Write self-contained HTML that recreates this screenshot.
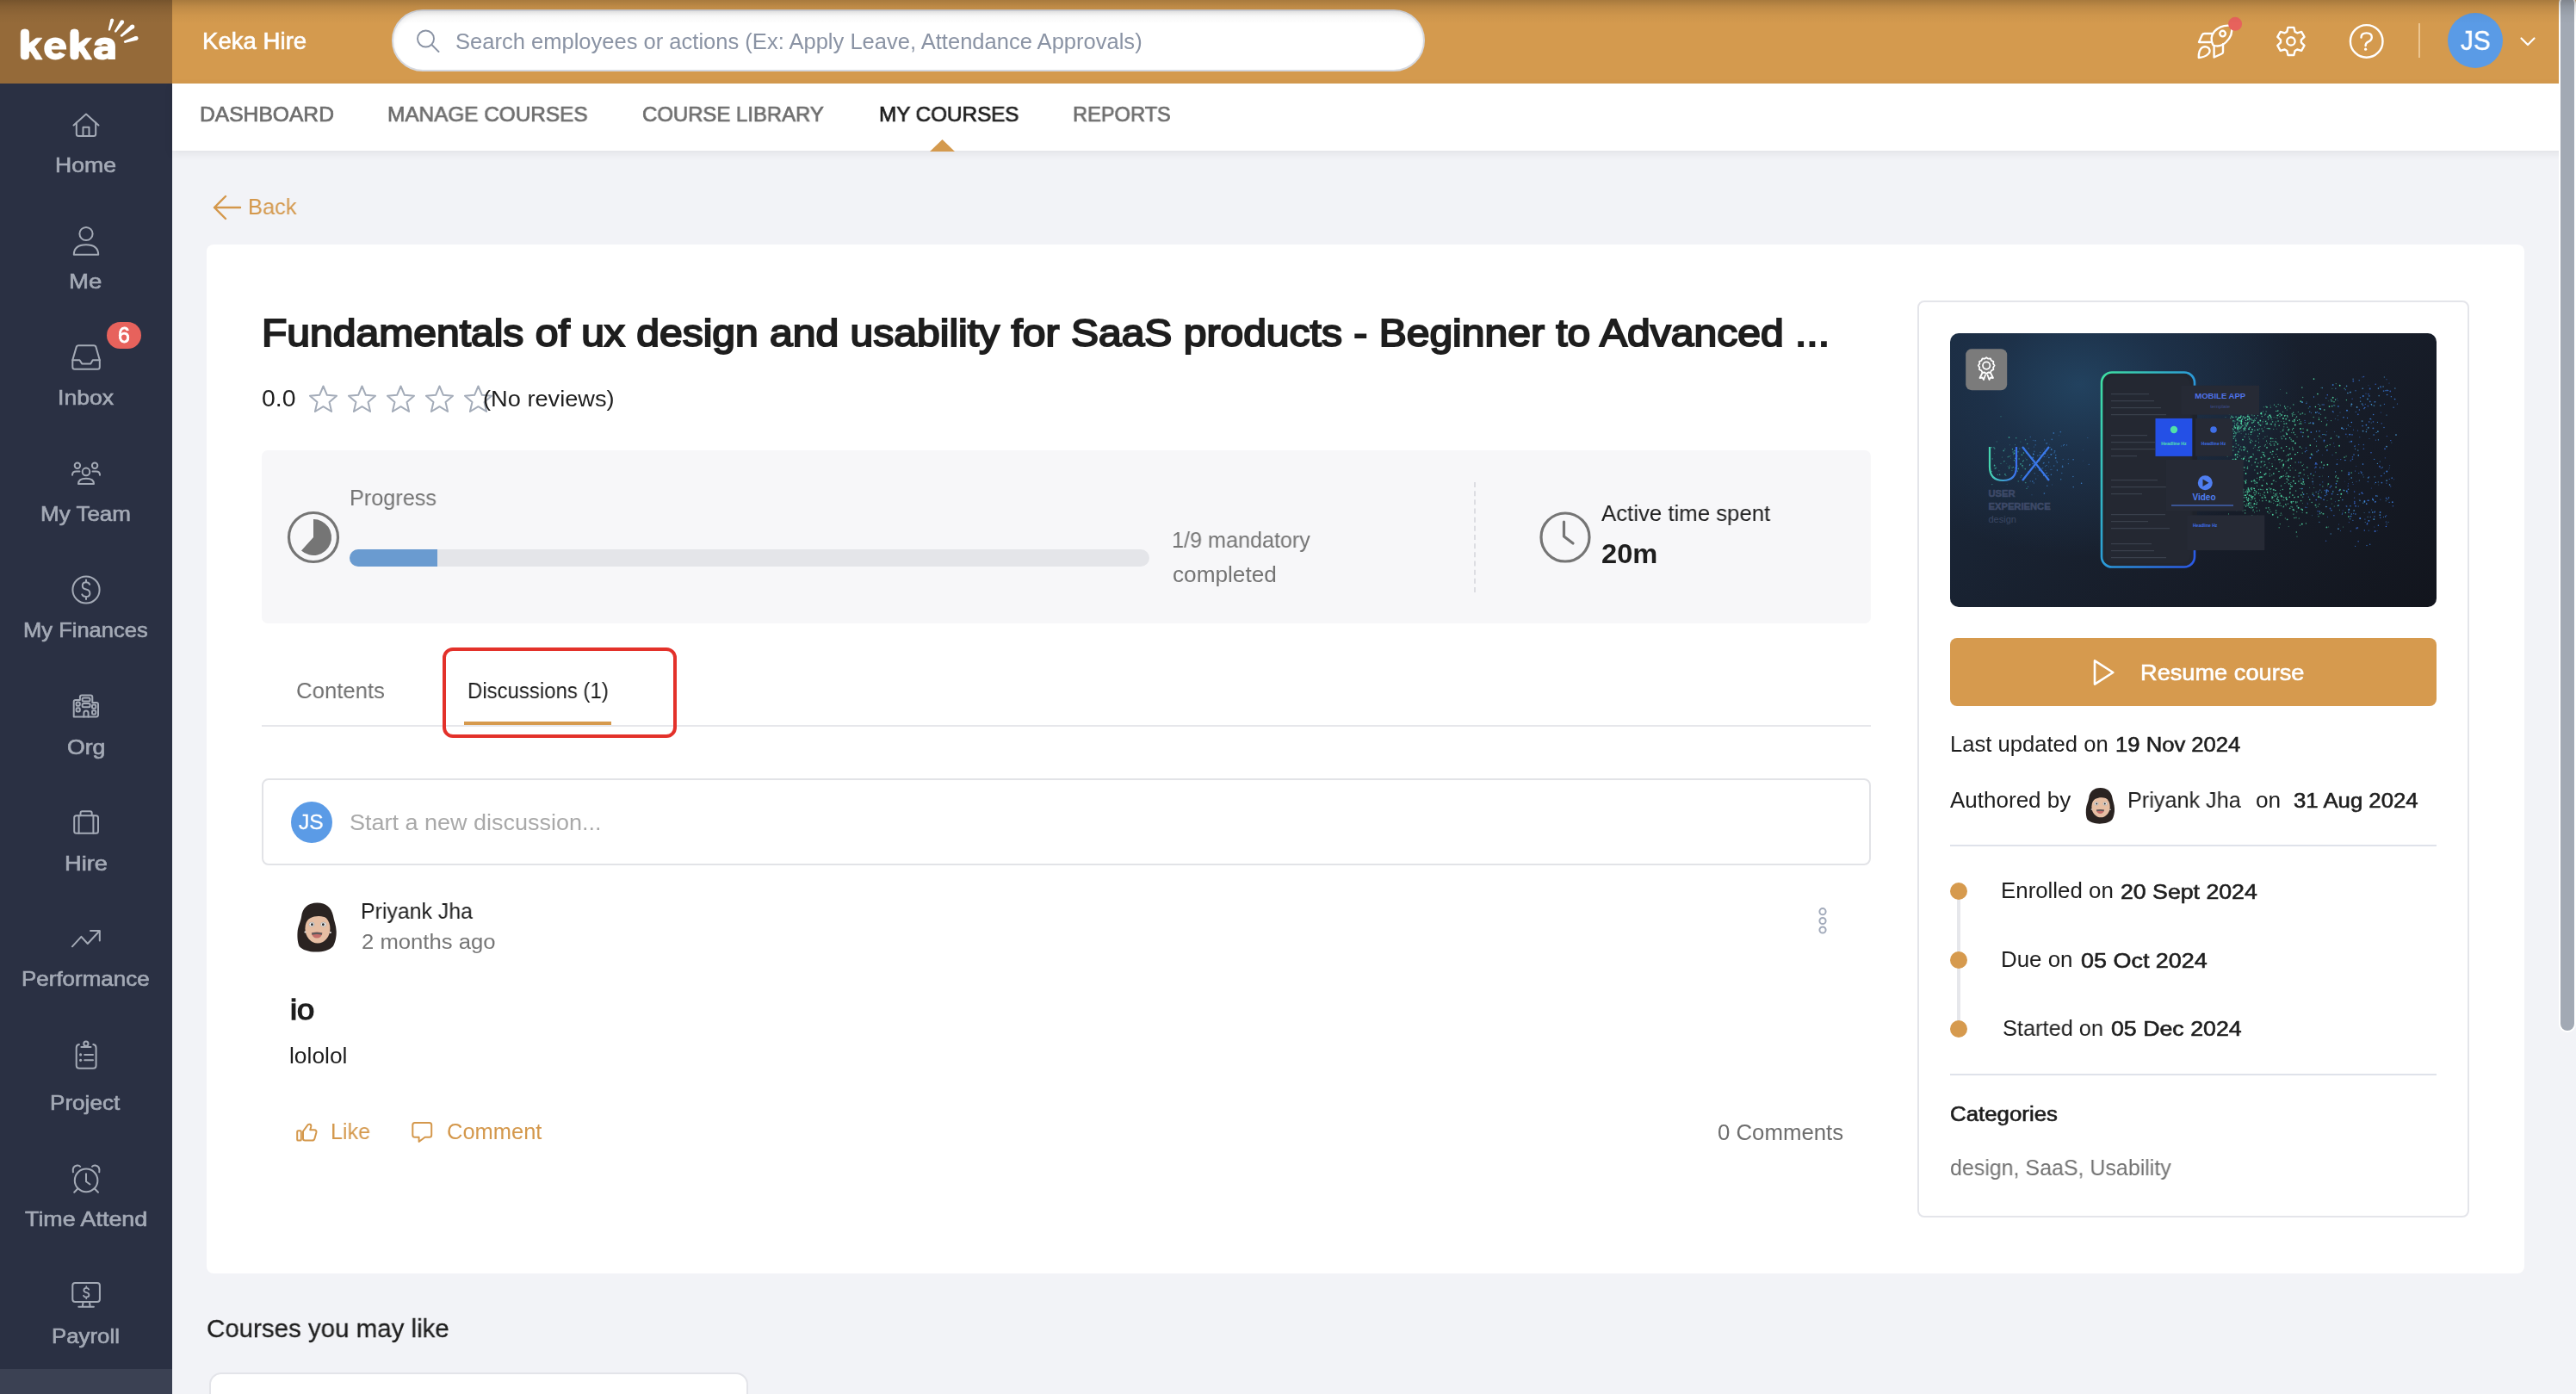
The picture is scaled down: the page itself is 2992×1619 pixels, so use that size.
<!DOCTYPE html>
<html><head><meta charset="utf-8">
<style>
html,body{margin:0;padding:0;}
body{width:2992px;height:1619px;overflow:hidden;position:relative;background:#f2f3f7;font-family:"Liberation Sans",sans-serif;}
.a{position:absolute;box-sizing:border-box;}
.t{position:absolute;white-space:nowrap;line-height:1;font-family:"Liberation Sans",sans-serif;will-change:transform;}
svg{position:absolute;overflow:visible;}
</style></head><body>
<!-- sidebar -->
<div class="a" style="left:0;top:0;width:200px;height:1619px;background:#2a3043"></div>
<div class="a" style="left:0;top:1590px;width:200px;height:29px;background:#3b4153"></div>
<!-- logo area -->
<div class="a" style="left:0;top:0;width:200px;height:97px;background:#956a39"></div>
<!-- header -->
<div class="a" style="left:200px;top:0;width:2792px;height:97px;background:#d49a4e"></div>
<!-- search -->
<div class="a" style="left:455px;top:11px;width:1200px;height:72px;border-radius:36px;background:#fff;border:2px solid #d5d8df;box-shadow:inset 0 3px 4px rgba(0,0,0,0.06)"></div>
<svg style="left:483px;top:34px" width="30" height="28" viewBox="0 0 30 28"><circle cx="11.5" cy="11" r="9.5" fill="none" stroke="#8a93a4" stroke-width="1.9"/><line x1="18.5" y1="18" x2="26.5" y2="26" stroke="#8a93a4" stroke-width="1.9" stroke-linecap="round"/></svg>
<!-- nav -->
<div class="a" style="left:200px;top:97px;width:2792px;height:78px;background:#fff;box-shadow:0 3px 10px rgba(0,0,0,0.075)"></div>
<svg style="left:1080px;top:162px" width="29" height="14" viewBox="0 0 29 14"><path d="M0 14 L14.5 0 L29 14 Z" fill="#d49a4e"/></svg>
<!-- back -->
<svg style="left:247px;top:226px" width="34" height="30" viewBox="0 0 34 30"><path d="M15 2 L2 15 L15 28 M2 15 L32 15" fill="none" stroke="#d4984c" stroke-width="2.4" stroke-linecap="round" stroke-linejoin="round"/></svg>
<!-- main card -->
<div class="a" style="left:240px;top:284px;width:2692px;height:1195px;background:#fff;border-radius:8px"></div>
<!-- stars -->
<svg style="left:0;top:0" width="700" height="600"><g fill="none" stroke="#a3abb8" stroke-width="2" stroke-linejoin="round"><path d="M375.50 448.50 L379.85 458.81 L391.00 459.76 L382.54 467.09 L385.08 477.99 L375.50 472.20 L365.92 477.99 L368.46 467.09 L360.00 459.76 L371.15 458.81 Z"/><path d="M420.50 448.50 L424.85 458.81 L436.00 459.76 L427.54 467.09 L430.08 477.99 L420.50 472.20 L410.92 477.99 L413.46 467.09 L405.00 459.76 L416.15 458.81 Z"/><path d="M465.50 448.50 L469.85 458.81 L481.00 459.76 L472.54 467.09 L475.08 477.99 L465.50 472.20 L455.92 477.99 L458.46 467.09 L450.00 459.76 L461.15 458.81 Z"/><path d="M510.50 448.50 L514.85 458.81 L526.00 459.76 L517.54 467.09 L520.08 477.99 L510.50 472.20 L500.92 477.99 L503.46 467.09 L495.00 459.76 L506.15 458.81 Z"/><path d="M555.50 448.50 L559.85 458.81 L571.00 459.76 L562.54 467.09 L565.08 477.99 L555.50 472.20 L545.92 477.99 L548.46 467.09 L540.00 459.76 L551.15 458.81 Z"/></g></svg>
<!-- progress box -->
<div class="a" style="left:304px;top:523px;width:1869px;height:201px;background:#f7f7f9;border-radius:7px"></div>
<svg style="left:333px;top:593px" width="62" height="62" viewBox="0 0 62 62"><circle cx="31" cy="31" r="28.5" fill="none" stroke="#757575" stroke-width="3.2"/><path d="M31 31 L31 10 A21 21 0 1 1 17 46.6 Z" fill="#757575"/></svg>
<div class="a" style="left:406px;top:638px;width:929px;height:20px;border-radius:10px;background:#e4e5e9"></div>
<div class="a" style="left:406px;top:638px;width:102px;height:20px;border-radius:10px 0 0 10px;background:#6a9bd0"></div>
<div class="a" style="left:1712px;top:560px;width:0;height:128px;border-left:2px dashed #dcdde2"></div>
<svg style="left:1787px;top:594px" width="62" height="62" viewBox="0 0 62 62"><circle cx="31" cy="30" r="28" fill="none" stroke="#757575" stroke-width="3.2"/><path d="M29.5 12 L29.5 29 L40 37" fill="none" stroke="#757575" stroke-width="3.2" stroke-linecap="round" stroke-linejoin="round"/></svg>
<!-- tabs -->
<div class="a" style="left:304px;top:842px;width:1869px;height:2px;background:#e6e7eb"></div>
<div class="a" style="left:539px;top:838px;width:171px;height:4px;background:#d69a4e"></div>
<div class="a" style="left:514px;top:752px;width:272px;height:105px;border:4px solid #e3312a;border-radius:12px"></div>
<!-- input -->
<div class="a" style="left:304px;top:904px;width:1869px;height:101px;border:2px solid #e2e3e7;border-radius:8px;background:#fff"></div>
<div class="a" style="left:338px;top:931px;width:48px;height:48px;border-radius:50%;background:#5b9be6"></div>

<!-- post avatar -->
<svg style="left:343px;top:1047px" width="49" height="59" viewBox="0 0 48 58" preserveAspectRatio="none"><path d="M25 1.5 C14 1.5 8 8 7 17 C6 24 3 28 2.5 35 C2 42 3 48 4.5 51 C8 55 15 57.5 23.5 57.5 C32 57.5 39 55.5 43 51 C45.5 47 47 40 46.7 34 C46.5 27 44 22 43 16 C41 7 35 1.5 25 1.5 Z" fill="#2a2321"/><ellipse cx="25.4" cy="31" rx="14.2" ry="16.6" fill="#e6bea3"/><path d="M10.5 26 C10.5 12 18 8.5 26 9 C34 9.5 40.5 14 40.8 25 C38.5 19.5 34 16.8 27 16.6 C20 16.4 14 19 10.5 26 Z" fill="#2a2321"/><ellipse cx="18.7" cy="26.2" rx="3.1" ry="2.5" fill="#f2f2f2" stroke="#9a9a9a" stroke-width="0.6"/><ellipse cx="32" cy="26.2" rx="3.1" ry="2.5" fill="#f2f2f2" stroke="#9a9a9a" stroke-width="0.6"/><circle cx="19" cy="26.3" r="1.4" fill="#2e2e2e"/><circle cx="31.7" cy="26.3" r="1.4" fill="#2e2e2e"/><path d="M18.4 35.8 Q24.6 34.2 30.8 35.8 Q29.8 41.8 24.6 41.8 Q19.4 41.8 18.4 35.8 Z" fill="#c46d6a"/><path d="M18.6 35.9 Q24.6 34.4 30.6 35.9 L30.2 38 Q24.6 36.8 19 38 Z" fill="#5d5a5a"/><circle cx="11.2" cy="35" r="1" fill="#e8e8e8"/><circle cx="40" cy="35.5" r="1" fill="#e8e8e8"/></svg>
<svg style="left:2110px;top:1052px" width="14" height="36" viewBox="0 0 14 36"><circle cx="7" cy="6.7" r="3.6" fill="none" stroke="#a3abbb" stroke-width="2"/><circle cx="7" cy="17.5" r="3.6" fill="none" stroke="#a3abbb" stroke-width="2"/><circle cx="7" cy="28" r="3.6" fill="none" stroke="#a3abbb" stroke-width="2"/></svg>
<svg style="left:0;top:0" width="600" height="1400"><g fill="none" stroke="#d4984c" stroke-width="2" stroke-linejoin="round" stroke-linecap="round"><rect x="345.2" y="1313.2" width="4.6" height="11.4" rx="1.2"/><path d="M352 1314 L356.6 1307.6 Q358 1305.4 359.8 1305.8 Q361.8 1306.4 361.2 1308.8 L360.2 1312.2 H365 Q368 1312.4 367.4 1315.2 L365.4 1322.4 Q364.8 1324.6 362.4 1324.6 H354.2 Q352 1324.6 352 1322.6 Z"/></g></svg>
<svg style="left:0;top:0" width="600" height="1400"><path d="M481.8 1304 H498.7 Q501.2 1304 501.2 1306.5 V1318.2 Q501.2 1320.7 498.7 1320.7 H493.6 L486.6 1326 V1320.7 H481.8 Q479.3 1320.7 479.3 1318.2 V1306.5 Q479.3 1304 481.8 1304 Z" fill="none" stroke="#d4984c" stroke-width="2" stroke-linejoin="round"/></svg>
<!-- right panel -->
<div class="a" style="left:2227px;top:349px;width:641px;height:1065px;border:2px solid #e4e5ea;border-radius:8px"></div>
<div class="a" style="left:2265px;top:387px;width:565px;height:318px;border-radius:10px;overflow:hidden;background:radial-gradient(ellipse 260px 200px at 150px 60px, #22425f 0%, #1d3149 40%, rgba(22,27,38,0) 100%), linear-gradient(135deg,#1b2a3e 0%,#171d29 60%,#12151d 100%)">
<svg style="left:0;top:0" width="565" height="318"><defs><linearGradient id="pg" x1="0" y1="0" x2="1" y2="1"><stop offset="0" stop-color="#3fe0a0"/><stop offset="0.5" stop-color="#2b9bd8"/><stop offset="1" stop-color="#2a57e6"/></linearGradient><linearGradient id="ug" x1="0" y1="0" x2="1" y2="0"><stop offset="0" stop-color="#45d6b0"/><stop offset="1" stop-color="#3b6ff0"/></linearGradient></defs><circle cx="359.4" cy="116.8" r="0.72" fill="#52dca6" opacity="0.71"/><circle cx="328.1" cy="190.0" r="0.48" fill="#52dca6" opacity="0.59"/><circle cx="372.3" cy="96.7" r="0.76" fill="#52dca6" opacity="0.98"/><circle cx="389.8" cy="122.7" r="0.88" fill="#52dca6" opacity="0.68"/><circle cx="338.1" cy="158.4" r="0.54" fill="#52dca6" opacity="0.81"/><circle cx="410.0" cy="110.9" r="0.55" fill="#52dca6" opacity="0.86"/><circle cx="369.0" cy="207.6" r="0.60" fill="#52dca6" opacity="0.91"/><circle cx="428.9" cy="219.3" r="0.67" fill="#4aa0e0" opacity="0.82"/><circle cx="327.2" cy="107.3" r="0.92" fill="#52dca6" opacity="0.74"/><circle cx="506.9" cy="174.1" r="0.62" fill="#3a6fe0" opacity="0.71"/><circle cx="384.8" cy="95.6" r="0.58" fill="#52dca6" opacity="0.86"/><circle cx="329.3" cy="183.1" r="0.79" fill="#52dca6" opacity="0.75"/><circle cx="436.5" cy="132.1" r="0.76" fill="#52dca6" opacity="0.77"/><circle cx="340.0" cy="205.8" r="0.91" fill="#52dca6" opacity="0.77"/><circle cx="333.5" cy="111.0" r="0.67" fill="#52dca6" opacity="0.80"/><circle cx="438.0" cy="194.4" r="0.49" fill="#52dca6" opacity="0.62"/><circle cx="428.3" cy="98.1" r="0.52" fill="#52dca6" opacity="0.79"/><circle cx="406.7" cy="162.1" r="0.93" fill="#52dca6" opacity="0.84"/><circle cx="429.1" cy="166.6" r="0.65" fill="#4aa0e0" opacity="0.73"/><circle cx="330.7" cy="105.2" r="0.55" fill="#52dca6" opacity="0.62"/><circle cx="357.7" cy="104.1" r="0.50" fill="#52dca6" opacity="0.71"/><circle cx="333.2" cy="100.0" r="0.58" fill="#52dca6" opacity="0.71"/><circle cx="368.2" cy="175.2" r="0.68" fill="#52dca6" opacity="0.77"/><circle cx="334.5" cy="112.2" r="0.86" fill="#52dca6" opacity="0.62"/><circle cx="334.1" cy="104.9" r="0.72" fill="#52dca6" opacity="0.56"/><circle cx="400.4" cy="190.3" r="0.58" fill="#52dca6" opacity="0.72"/><circle cx="337.7" cy="131.8" r="0.61" fill="#52dca6" opacity="0.65"/><circle cx="467.5" cy="143.8" r="0.82" fill="#3a6fe0" opacity="0.65"/><circle cx="387.7" cy="102.5" r="0.59" fill="#52dca6" opacity="0.67"/><circle cx="432.3" cy="141.5" r="0.49" fill="#3a6fe0" opacity="0.60"/><circle cx="376.3" cy="170.9" r="0.76" fill="#52dca6" opacity="0.55"/><circle cx="481.4" cy="195.0" r="0.90" fill="#3b82e6" opacity="0.90"/><circle cx="438.4" cy="152.7" r="0.85" fill="#52dca6" opacity="0.99"/><circle cx="356.4" cy="177.3" r="0.54" fill="#52dca6" opacity="0.61"/><circle cx="342.9" cy="98.0" r="0.86" fill="#52dca6" opacity="0.99"/><circle cx="414.9" cy="112.5" r="0.94" fill="#52dca6" opacity="0.84"/><circle cx="395.1" cy="140.0" r="0.86" fill="#52dca6" opacity="0.64"/><circle cx="344.8" cy="198.1" r="0.58" fill="#52dca6" opacity="0.74"/><circle cx="337.8" cy="186.1" r="0.74" fill="#52dca6" opacity="0.96"/><circle cx="375.6" cy="185.7" r="0.71" fill="#52dca6" opacity="0.56"/><circle cx="374.0" cy="151.7" r="0.54" fill="#52dca6" opacity="0.76"/><circle cx="431.0" cy="191.4" r="0.89" fill="#3b82e6" opacity="0.58"/><circle cx="341.3" cy="191.8" r="0.46" fill="#52dca6" opacity="0.95"/><circle cx="323.5" cy="209.9" r="0.55" fill="#52dca6" opacity="0.67"/><circle cx="388.6" cy="85.0" r="0.71" fill="#52dca6" opacity="0.94"/><circle cx="500.2" cy="63.2" r="0.52" fill="#3a6fe0" opacity="0.60"/><circle cx="377.5" cy="105.8" r="0.78" fill="#52dca6" opacity="0.90"/><circle cx="486.3" cy="229.2" r="0.58" fill="#3b82e6" opacity="0.61"/><circle cx="378.8" cy="140.5" r="0.53" fill="#52dca6" opacity="0.85"/><circle cx="338.2" cy="161.8" r="0.66" fill="#52dca6" opacity="0.71"/><circle cx="328.2" cy="195.9" r="0.80" fill="#52dca6" opacity="0.72"/><circle cx="384.8" cy="133.2" r="0.91" fill="#52dca6" opacity="0.65"/><circle cx="479.3" cy="164.6" r="0.59" fill="#3b82e6" opacity="0.61"/><circle cx="378.6" cy="90.5" r="0.52" fill="#52dca6" opacity="0.96"/><circle cx="398.6" cy="92.3" r="0.79" fill="#52dca6" opacity="0.74"/><circle cx="336.7" cy="142.6" r="0.49" fill="#52dca6" opacity="0.94"/><circle cx="333.4" cy="100.8" r="0.73" fill="#52dca6" opacity="0.97"/><circle cx="351.9" cy="114.1" r="0.50" fill="#52dca6" opacity="0.62"/><circle cx="330.4" cy="114.6" r="0.83" fill="#52dca6" opacity="0.68"/><circle cx="387.0" cy="111.4" r="0.58" fill="#52dca6" opacity="0.56"/><circle cx="434.1" cy="193.4" r="0.78" fill="#3b82e6" opacity="0.84"/><circle cx="408.4" cy="133.6" r="0.56" fill="#52dca6" opacity="0.65"/><circle cx="345.8" cy="96.4" r="0.94" fill="#52dca6" opacity="0.99"/><circle cx="471.7" cy="154.3" r="0.53" fill="#3a6fe0" opacity="0.59"/><circle cx="471.0" cy="66.8" r="0.80" fill="#3b82e6" opacity="0.57"/><circle cx="338.5" cy="191.5" r="0.61" fill="#52dca6" opacity="0.99"/><circle cx="365.3" cy="109.0" r="0.54" fill="#52dca6" opacity="0.70"/><circle cx="329.4" cy="119.6" r="0.84" fill="#52dca6" opacity="0.59"/><circle cx="463.3" cy="219.6" r="0.60" fill="#3a6fe0" opacity="0.65"/><circle cx="394.3" cy="190.3" r="0.81" fill="#52dca6" opacity="0.95"/><circle cx="358.6" cy="132.6" r="0.81" fill="#52dca6" opacity="0.84"/><circle cx="334.3" cy="175.2" r="0.82" fill="#52dca6" opacity="0.92"/><circle cx="328.6" cy="147.4" r="0.85" fill="#52dca6" opacity="0.92"/><circle cx="408.1" cy="180.7" r="0.56" fill="#52dca6" opacity="0.56"/><circle cx="332.5" cy="155.2" r="0.73" fill="#52dca6" opacity="0.83"/><circle cx="409.0" cy="80.1" r="0.92" fill="#4aa0e0" opacity="0.95"/><circle cx="323.0" cy="187.9" r="0.85" fill="#52dca6" opacity="0.93"/><circle cx="343.9" cy="184.1" r="0.68" fill="#52dca6" opacity="0.93"/><circle cx="333.8" cy="104.0" r="0.77" fill="#52dca6" opacity="0.64"/><circle cx="402.0" cy="214.3" r="0.76" fill="#52dca6" opacity="0.61"/><circle cx="368.2" cy="103.9" r="0.56" fill="#52dca6" opacity="0.77"/><circle cx="429.8" cy="182.1" r="0.55" fill="#4aa0e0" opacity="0.99"/><circle cx="498.9" cy="154.7" r="0.95" fill="#3a6fe0" opacity="0.72"/><circle cx="489.3" cy="82.6" r="0.71" fill="#4aa0e0" opacity="0.98"/><circle cx="336.5" cy="134.5" r="0.80" fill="#52dca6" opacity="0.65"/><circle cx="480.9" cy="87.6" r="0.79" fill="#3a6fe0" opacity="0.73"/><circle cx="431.4" cy="102.3" r="0.61" fill="#52dca6" opacity="0.70"/><circle cx="369.7" cy="99.9" r="0.82" fill="#52dca6" opacity="0.66"/><circle cx="322.0" cy="118.4" r="0.91" fill="#52dca6" opacity="0.89"/><circle cx="469.2" cy="205.9" r="0.92" fill="#4aa0e0" opacity="0.66"/><circle cx="344.2" cy="190.8" r="0.93" fill="#52dca6" opacity="0.95"/><circle cx="450.3" cy="95.7" r="0.55" fill="#4aa0e0" opacity="0.59"/><circle cx="486.7" cy="102.9" r="0.69" fill="#3a6fe0" opacity="0.96"/><circle cx="397.5" cy="111.9" r="0.58" fill="#52dca6" opacity="0.88"/><circle cx="414.5" cy="202.5" r="0.53" fill="#3b82e6" opacity="0.62"/><circle cx="345.7" cy="100.2" r="0.90" fill="#52dca6" opacity="1.00"/><circle cx="377.7" cy="107.9" r="0.62" fill="#52dca6" opacity="0.59"/><circle cx="343.9" cy="170.8" r="0.82" fill="#52dca6" opacity="0.74"/><circle cx="364.5" cy="100.7" r="0.48" fill="#52dca6" opacity="0.67"/><circle cx="507.1" cy="221.8" r="0.50" fill="#3b82e6" opacity="0.95"/><circle cx="361.2" cy="93.4" r="0.86" fill="#52dca6" opacity="0.99"/><circle cx="326.0" cy="161.0" r="0.93" fill="#52dca6" opacity="0.77"/><circle cx="340.6" cy="182.1" r="0.68" fill="#52dca6" opacity="0.75"/><circle cx="450.6" cy="168.3" r="0.86" fill="#52dca6" opacity="0.87"/><circle cx="469.0" cy="141.0" r="0.84" fill="#3b82e6" opacity="0.65"/><circle cx="485.9" cy="70.8" r="0.71" fill="#3a6fe0" opacity="0.75"/><circle cx="448.5" cy="165.6" r="0.58" fill="#52dca6" opacity="0.91"/><circle cx="311.7" cy="101.7" r="0.61" fill="#52dca6" opacity="0.93"/><circle cx="338.4" cy="103.8" r="0.66" fill="#52dca6" opacity="0.84"/><circle cx="332.9" cy="206.1" r="0.49" fill="#52dca6" opacity="0.65"/><circle cx="367.1" cy="203.0" r="0.81" fill="#52dca6" opacity="0.71"/><circle cx="370.5" cy="150.7" r="0.48" fill="#52dca6" opacity="0.77"/><circle cx="340.4" cy="184.8" r="0.58" fill="#52dca6" opacity="0.95"/><circle cx="327.4" cy="136.4" r="0.69" fill="#52dca6" opacity="0.96"/><circle cx="320.0" cy="97.4" r="0.46" fill="#52dca6" opacity="0.82"/><circle cx="368.8" cy="185.3" r="0.81" fill="#52dca6" opacity="0.69"/><circle cx="335.2" cy="109.8" r="0.78" fill="#52dca6" opacity="0.79"/><circle cx="375.8" cy="181.7" r="0.94" fill="#52dca6" opacity="0.75"/><circle cx="334.1" cy="191.9" r="0.89" fill="#52dca6" opacity="0.80"/><circle cx="437.5" cy="114.4" r="0.47" fill="#3b82e6" opacity="0.76"/><circle cx="365.4" cy="188.7" r="0.90" fill="#52dca6" opacity="0.56"/><circle cx="372.0" cy="83.8" r="0.47" fill="#52dca6" opacity="0.58"/><circle cx="488.2" cy="213.4" r="0.63" fill="#3a6fe0" opacity="0.70"/><circle cx="506.7" cy="211.8" r="0.60" fill="#3a6fe0" opacity="0.87"/><circle cx="408.8" cy="63.1" r="0.86" fill="#52dca6" opacity="0.60"/><circle cx="424.3" cy="161.0" r="0.52" fill="#3a6fe0" opacity="0.77"/><circle cx="331.9" cy="187.1" r="0.53" fill="#52dca6" opacity="0.66"/><circle cx="463.0" cy="208.4" r="0.55" fill="#4aa0e0" opacity="0.89"/><circle cx="346.4" cy="192.1" r="0.61" fill="#52dca6" opacity="0.99"/><circle cx="481.8" cy="86.4" r="0.66" fill="#3b82e6" opacity="0.99"/><circle cx="505.6" cy="213.0" r="0.57" fill="#4aa0e0" opacity="0.79"/><circle cx="448.2" cy="58.6" r="0.58" fill="#52dca6" opacity="0.66"/><circle cx="343.8" cy="107.8" r="0.59" fill="#52dca6" opacity="0.96"/><circle cx="342.3" cy="109.3" r="0.71" fill="#52dca6" opacity="0.84"/><circle cx="330.4" cy="108.0" r="0.89" fill="#52dca6" opacity="0.65"/><circle cx="368.1" cy="119.8" r="0.48" fill="#52dca6" opacity="0.82"/><circle cx="462.9" cy="206.3" r="0.67" fill="#3b82e6" opacity="0.67"/><circle cx="450.9" cy="194.8" r="0.47" fill="#3b82e6" opacity="0.70"/><circle cx="330.3" cy="150.0" r="0.91" fill="#52dca6" opacity="0.92"/><circle cx="455.7" cy="209.1" r="0.55" fill="#3b82e6" opacity="0.91"/><circle cx="396.7" cy="196.9" r="0.73" fill="#52dca6" opacity="0.84"/><circle cx="335.1" cy="201.3" r="0.59" fill="#52dca6" opacity="0.69"/><circle cx="496.1" cy="229.6" r="0.46" fill="#3a6fe0" opacity="0.89"/><circle cx="452.1" cy="182.7" r="0.90" fill="#3a6fe0" opacity="0.74"/><circle cx="451.5" cy="221.9" r="0.51" fill="#3b82e6" opacity="0.57"/><circle cx="336.5" cy="182.2" r="0.91" fill="#52dca6" opacity="0.88"/><circle cx="335.5" cy="111.1" r="0.48" fill="#52dca6" opacity="0.72"/><circle cx="444.7" cy="60.0" r="0.94" fill="#3b82e6" opacity="0.77"/><circle cx="333.7" cy="143.9" r="0.76" fill="#52dca6" opacity="0.92"/><circle cx="337.0" cy="184.4" r="0.87" fill="#52dca6" opacity="0.92"/><circle cx="339.3" cy="199.6" r="0.64" fill="#52dca6" opacity="0.61"/><circle cx="343.5" cy="85.3" r="0.73" fill="#52dca6" opacity="0.89"/><circle cx="330.0" cy="186.6" r="0.73" fill="#52dca6" opacity="0.83"/><circle cx="346.9" cy="198.2" r="0.78" fill="#52dca6" opacity="0.75"/><circle cx="380.4" cy="195.5" r="0.57" fill="#52dca6" opacity="0.89"/><circle cx="446.2" cy="201.0" r="0.51" fill="#52dca6" opacity="0.74"/><circle cx="325.6" cy="111.1" r="0.77" fill="#52dca6" opacity="0.59"/><circle cx="438.3" cy="71.8" r="0.78" fill="#3a6fe0" opacity="0.90"/><circle cx="334.7" cy="194.6" r="0.50" fill="#52dca6" opacity="0.61"/><circle cx="476.4" cy="215.1" r="0.84" fill="#4aa0e0" opacity="0.97"/><circle cx="324.8" cy="118.9" r="0.90" fill="#52dca6" opacity="0.67"/><circle cx="462.5" cy="181.2" r="0.75" fill="#3b82e6" opacity="0.83"/><circle cx="341.7" cy="195.6" r="0.77" fill="#52dca6" opacity="0.68"/><circle cx="349.4" cy="117.5" r="0.83" fill="#52dca6" opacity="0.57"/><circle cx="476.0" cy="194.3" r="0.89" fill="#4aa0e0" opacity="0.60"/><circle cx="507.4" cy="119.6" r="0.64" fill="#3a6fe0" opacity="0.72"/><circle cx="334.0" cy="110.2" r="0.76" fill="#52dca6" opacity="0.98"/><circle cx="347.1" cy="148.5" r="0.89" fill="#52dca6" opacity="0.97"/><circle cx="480.5" cy="50.5" r="0.76" fill="#3a6fe0" opacity="0.74"/><circle cx="389.5" cy="95.6" r="0.78" fill="#52dca6" opacity="0.56"/><circle cx="326.6" cy="193.0" r="0.56" fill="#52dca6" opacity="0.81"/><circle cx="405.2" cy="215.1" r="0.52" fill="#52dca6" opacity="0.97"/><circle cx="346.1" cy="194.6" r="0.89" fill="#52dca6" opacity="0.90"/><circle cx="367.2" cy="194.3" r="0.73" fill="#52dca6" opacity="0.71"/><circle cx="404.9" cy="172.0" r="0.90" fill="#52dca6" opacity="0.57"/><circle cx="388.1" cy="105.2" r="0.84" fill="#52dca6" opacity="0.56"/><circle cx="397.7" cy="96.1" r="0.75" fill="#52dca6" opacity="0.78"/><circle cx="416.2" cy="87.0" r="0.47" fill="#52dca6" opacity="0.95"/><circle cx="449.9" cy="146.4" r="0.49" fill="#3a6fe0" opacity="0.84"/><circle cx="341.5" cy="190.5" r="0.51" fill="#52dca6" opacity="0.95"/><circle cx="493.7" cy="79.8" r="0.73" fill="#4aa0e0" opacity="0.75"/><circle cx="447.6" cy="195.8" r="0.49" fill="#3b82e6" opacity="0.78"/><circle cx="345.0" cy="97.1" r="0.53" fill="#52dca6" opacity="0.96"/><circle cx="334.0" cy="198.7" r="0.88" fill="#52dca6" opacity="0.96"/><circle cx="510.6" cy="176.0" r="0.80" fill="#4aa0e0" opacity="0.94"/><circle cx="372.3" cy="86.1" r="0.56" fill="#52dca6" opacity="0.83"/><circle cx="332.8" cy="105.2" r="0.50" fill="#52dca6" opacity="0.97"/><circle cx="359.0" cy="106.0" r="0.80" fill="#52dca6" opacity="0.84"/><circle cx="428.0" cy="190.1" r="0.86" fill="#52dca6" opacity="0.92"/><circle cx="489.3" cy="179.9" r="0.50" fill="#3a6fe0" opacity="0.64"/><circle cx="341.9" cy="155.9" r="0.77" fill="#52dca6" opacity="0.92"/><circle cx="412.2" cy="103.7" r="0.60" fill="#3b82e6" opacity="0.70"/><circle cx="340.0" cy="123.7" r="0.83" fill="#52dca6" opacity="0.96"/><circle cx="441.9" cy="79.0" r="0.47" fill="#3a6fe0" opacity="0.78"/><circle cx="330.0" cy="190.7" r="0.81" fill="#52dca6" opacity="0.92"/><circle cx="398.9" cy="210.1" r="0.59" fill="#52dca6" opacity="0.89"/><circle cx="328.0" cy="193.1" r="0.86" fill="#52dca6" opacity="0.99"/><circle cx="409.8" cy="190.1" r="0.53" fill="#52dca6" opacity="0.92"/><circle cx="494.4" cy="173.4" r="0.70" fill="#3b82e6" opacity="1.00"/><circle cx="400.8" cy="106.5" r="0.91" fill="#52dca6" opacity="0.95"/><circle cx="433.9" cy="209.8" r="0.66" fill="#52dca6" opacity="0.80"/><circle cx="344.2" cy="147.7" r="0.51" fill="#52dca6" opacity="0.82"/><circle cx="425.2" cy="193.6" r="0.78" fill="#3a6fe0" opacity="0.88"/><circle cx="329.1" cy="196.4" r="0.51" fill="#52dca6" opacity="0.76"/><circle cx="478.6" cy="102.0" r="0.86" fill="#4aa0e0" opacity="0.83"/><circle cx="442.6" cy="192.4" r="0.57" fill="#52dca6" opacity="0.98"/><circle cx="362.2" cy="96.6" r="0.78" fill="#52dca6" opacity="0.64"/><circle cx="338.0" cy="113.0" r="0.59" fill="#52dca6" opacity="0.60"/><circle cx="484.0" cy="246.6" r="0.65" fill="#3b82e6" opacity="0.91"/><circle cx="420.2" cy="196.4" r="0.75" fill="#52dca6" opacity="0.73"/><circle cx="443.6" cy="186.6" r="0.87" fill="#3a6fe0" opacity="0.85"/><circle cx="422.7" cy="179.5" r="0.54" fill="#52dca6" opacity="0.61"/><circle cx="372.0" cy="181.6" r="0.57" fill="#52dca6" opacity="0.73"/><circle cx="437.4" cy="225.4" r="0.88" fill="#52dca6" opacity="0.78"/><circle cx="426.9" cy="70.5" r="0.87" fill="#52dca6" opacity="0.96"/><circle cx="332.1" cy="159.9" r="0.93" fill="#52dca6" opacity="0.64"/><circle cx="361.9" cy="93.9" r="0.69" fill="#52dca6" opacity="0.56"/><circle cx="449.5" cy="171.9" r="0.95" fill="#52dca6" opacity="0.63"/><circle cx="395.0" cy="184.8" r="0.77" fill="#52dca6" opacity="0.66"/><circle cx="365.8" cy="152.8" r="0.76" fill="#52dca6" opacity="0.85"/><circle cx="404.6" cy="202.8" r="0.93" fill="#52dca6" opacity="0.99"/><circle cx="516.6" cy="76.5" r="0.85" fill="#3b82e6" opacity="0.84"/><circle cx="375.8" cy="144.2" r="0.63" fill="#52dca6" opacity="0.84"/><circle cx="461.9" cy="69.4" r="0.77" fill="#4aa0e0" opacity="0.90"/><circle cx="379.9" cy="134.9" r="0.79" fill="#52dca6" opacity="0.99"/><circle cx="414.8" cy="155.9" r="0.78" fill="#52dca6" opacity="0.69"/><circle cx="380.5" cy="143.5" r="0.53" fill="#52dca6" opacity="0.69"/><circle cx="370.1" cy="110.6" r="0.92" fill="#52dca6" opacity="0.79"/><circle cx="352.0" cy="96.0" r="0.49" fill="#52dca6" opacity="0.68"/><circle cx="398.8" cy="82.9" r="0.68" fill="#52dca6" opacity="0.90"/><circle cx="335.8" cy="197.4" r="0.79" fill="#52dca6" opacity="0.99"/><circle cx="336.2" cy="184.1" r="0.60" fill="#52dca6" opacity="0.77"/><circle cx="349.8" cy="199.3" r="0.51" fill="#52dca6" opacity="0.60"/><circle cx="372.8" cy="180.7" r="0.69" fill="#52dca6" opacity="0.96"/><circle cx="429.1" cy="207.0" r="0.87" fill="#3b82e6" opacity="0.76"/><circle cx="392.7" cy="170.5" r="0.66" fill="#52dca6" opacity="0.98"/><circle cx="325.7" cy="98.7" r="0.75" fill="#52dca6" opacity="0.86"/><circle cx="383.1" cy="146.6" r="0.76" fill="#52dca6" opacity="0.70"/><circle cx="467.9" cy="217.4" r="0.59" fill="#3b82e6" opacity="0.70"/><circle cx="349.6" cy="193.8" r="0.70" fill="#52dca6" opacity="0.70"/><circle cx="511.3" cy="67.4" r="0.85" fill="#3a6fe0" opacity="0.70"/><circle cx="352.2" cy="205.0" r="0.84" fill="#52dca6" opacity="0.57"/><circle cx="439.2" cy="78.8" r="0.45" fill="#52dca6" opacity="0.64"/><circle cx="483.3" cy="114.6" r="0.76" fill="#4aa0e0" opacity="0.83"/><circle cx="409.4" cy="175.3" r="0.78" fill="#52dca6" opacity="0.76"/><circle cx="447.3" cy="99.3" r="0.46" fill="#4aa0e0" opacity="0.94"/><circle cx="331.6" cy="171.2" r="0.54" fill="#52dca6" opacity="0.57"/><circle cx="322.2" cy="142.8" r="0.70" fill="#52dca6" opacity="0.78"/><circle cx="462.1" cy="177.5" r="0.67" fill="#3a6fe0" opacity="0.56"/><circle cx="355.0" cy="125.3" r="0.69" fill="#52dca6" opacity="0.74"/><circle cx="329.7" cy="102.9" r="0.46" fill="#52dca6" opacity="0.55"/><circle cx="434.3" cy="125.7" r="0.69" fill="#3b82e6" opacity="0.67"/><circle cx="391.1" cy="162.3" r="0.63" fill="#52dca6" opacity="0.89"/><circle cx="432.8" cy="117.6" r="0.68" fill="#3a6fe0" opacity="0.97"/><circle cx="353.8" cy="102.1" r="0.46" fill="#52dca6" opacity="0.84"/><circle cx="463.1" cy="164.0" r="0.93" fill="#3b82e6" opacity="0.93"/><circle cx="402.7" cy="207.4" r="0.68" fill="#52dca6" opacity="0.62"/><circle cx="511.8" cy="124.6" r="0.69" fill="#3a6fe0" opacity="0.90"/><circle cx="374.9" cy="122.3" r="0.59" fill="#52dca6" opacity="0.83"/><circle cx="419.3" cy="115.1" r="0.87" fill="#3b82e6" opacity="0.82"/><circle cx="343.6" cy="201.1" r="0.79" fill="#52dca6" opacity="0.82"/><circle cx="483.0" cy="70.2" r="0.58" fill="#3a6fe0" opacity="0.62"/><circle cx="346.7" cy="89.7" r="0.94" fill="#52dca6" opacity="0.91"/><circle cx="395.5" cy="177.8" r="0.72" fill="#52dca6" opacity="0.77"/><circle cx="365.9" cy="120.4" r="0.60" fill="#52dca6" opacity="0.58"/><circle cx="363.3" cy="166.8" r="0.45" fill="#52dca6" opacity="0.72"/><circle cx="388.5" cy="96.2" r="0.65" fill="#52dca6" opacity="0.78"/><circle cx="348.9" cy="183.7" r="0.55" fill="#52dca6" opacity="0.65"/><circle cx="332.6" cy="183.7" r="0.63" fill="#52dca6" opacity="0.90"/><circle cx="470.6" cy="247.3" r="0.64" fill="#3b82e6" opacity="0.76"/><circle cx="330.1" cy="109.5" r="0.75" fill="#52dca6" opacity="0.59"/><circle cx="344.9" cy="182.1" r="0.56" fill="#52dca6" opacity="0.97"/><circle cx="353.7" cy="197.7" r="0.75" fill="#52dca6" opacity="0.61"/><circle cx="333.1" cy="152.8" r="0.69" fill="#52dca6" opacity="0.93"/><circle cx="485.8" cy="109.8" r="0.93" fill="#4aa0e0" opacity="0.67"/><circle cx="390.0" cy="166.3" r="0.65" fill="#52dca6" opacity="0.75"/><circle cx="351.3" cy="101.0" r="0.47" fill="#52dca6" opacity="0.67"/><circle cx="368.2" cy="127.2" r="0.47" fill="#52dca6" opacity="0.90"/><circle cx="422.5" cy="53.2" r="0.83" fill="#52dca6" opacity="0.97"/><circle cx="421.3" cy="185.9" r="0.61" fill="#52dca6" opacity="0.67"/><circle cx="330.3" cy="107.9" r="0.52" fill="#52dca6" opacity="0.85"/><circle cx="327.4" cy="102.8" r="0.91" fill="#52dca6" opacity="0.65"/><circle cx="384.5" cy="177.3" r="0.76" fill="#52dca6" opacity="0.75"/><circle cx="360.1" cy="180.9" r="0.52" fill="#52dca6" opacity="0.65"/><circle cx="328.0" cy="97.6" r="0.89" fill="#52dca6" opacity="0.67"/><circle cx="371.2" cy="163.1" r="0.62" fill="#52dca6" opacity="0.63"/><circle cx="378.7" cy="126.5" r="0.94" fill="#52dca6" opacity="0.58"/><circle cx="479.5" cy="186.6" r="0.51" fill="#3a6fe0" opacity="0.89"/><circle cx="500.3" cy="92.1" r="0.50" fill="#3b82e6" opacity="0.68"/><circle cx="489.1" cy="99.9" r="0.46" fill="#4aa0e0" opacity="0.91"/><circle cx="357.9" cy="150.9" r="0.71" fill="#52dca6" opacity="0.63"/><circle cx="376.0" cy="188.4" r="0.52" fill="#52dca6" opacity="0.63"/><circle cx="446.0" cy="79.7" r="0.75" fill="#52dca6" opacity="0.77"/><circle cx="350.3" cy="172.1" r="0.86" fill="#52dca6" opacity="0.81"/><circle cx="347.7" cy="196.8" r="0.81" fill="#52dca6" opacity="0.57"/><circle cx="452.6" cy="205.2" r="0.46" fill="#52dca6" opacity="0.96"/><circle cx="383.2" cy="93.6" r="0.87" fill="#52dca6" opacity="0.72"/><circle cx="331.9" cy="115.5" r="0.71" fill="#52dca6" opacity="0.75"/><circle cx="393.7" cy="174.8" r="0.88" fill="#52dca6" opacity="0.69"/><circle cx="425.5" cy="114.0" r="0.70" fill="#4aa0e0" opacity="0.78"/><circle cx="390.0" cy="148.9" r="0.56" fill="#52dca6" opacity="0.63"/><circle cx="331.8" cy="123.1" r="0.50" fill="#52dca6" opacity="0.86"/><circle cx="346.2" cy="192.1" r="0.71" fill="#52dca6" opacity="0.87"/><circle cx="337.3" cy="97.7" r="0.51" fill="#52dca6" opacity="0.77"/><circle cx="384.6" cy="200.4" r="0.52" fill="#52dca6" opacity="0.82"/><circle cx="475.4" cy="187.1" r="0.92" fill="#3b82e6" opacity="0.56"/><circle cx="411.2" cy="175.3" r="0.94" fill="#52dca6" opacity="0.57"/><circle cx="353.3" cy="170.7" r="0.87" fill="#52dca6" opacity="0.80"/><circle cx="506.4" cy="224.4" r="0.71" fill="#3a6fe0" opacity="0.98"/><circle cx="492.8" cy="225.1" r="0.50" fill="#3a6fe0" opacity="0.63"/><circle cx="357.5" cy="119.4" r="0.66" fill="#52dca6" opacity="0.73"/><circle cx="510.7" cy="153.7" r="0.47" fill="#3b82e6" opacity="0.84"/><circle cx="345.7" cy="184.1" r="0.91" fill="#52dca6" opacity="0.83"/><circle cx="340.3" cy="147.8" r="0.59" fill="#52dca6" opacity="0.69"/><circle cx="421.3" cy="175.0" r="0.49" fill="#3a6fe0" opacity="0.82"/><circle cx="486.5" cy="167.1" r="0.74" fill="#3a6fe0" opacity="0.67"/><circle cx="437.6" cy="182.1" r="0.78" fill="#3b82e6" opacity="0.64"/><circle cx="425.3" cy="202.1" r="0.61" fill="#52dca6" opacity="0.66"/><circle cx="337.4" cy="190.2" r="0.46" fill="#52dca6" opacity="0.71"/><circle cx="472.1" cy="226.5" r="0.89" fill="#3a6fe0" opacity="0.65"/><circle cx="335.7" cy="191.5" r="0.62" fill="#52dca6" opacity="0.85"/><circle cx="390.6" cy="131.6" r="0.71" fill="#52dca6" opacity="1.00"/><circle cx="428.2" cy="189.1" r="0.55" fill="#52dca6" opacity="0.82"/><circle cx="350.0" cy="143.7" r="0.91" fill="#52dca6" opacity="1.00"/><circle cx="343.0" cy="132.9" r="0.66" fill="#52dca6" opacity="0.60"/><circle cx="366.3" cy="190.8" r="0.95" fill="#52dca6" opacity="0.62"/><circle cx="467.0" cy="117.9" r="0.80" fill="#3a6fe0" opacity="0.68"/><circle cx="355.8" cy="202.8" r="0.77" fill="#52dca6" opacity="0.55"/><circle cx="445.2" cy="91.6" r="0.67" fill="#3b82e6" opacity="0.72"/><circle cx="345.4" cy="137.2" r="0.75" fill="#52dca6" opacity="0.66"/><circle cx="365.9" cy="143.5" r="0.46" fill="#52dca6" opacity="0.67"/><circle cx="479.6" cy="113.6" r="0.95" fill="#4aa0e0" opacity="0.78"/><circle cx="386.4" cy="181.4" r="0.75" fill="#52dca6" opacity="0.71"/><circle cx="494.2" cy="59.3" r="0.70" fill="#3a6fe0" opacity="0.84"/><circle cx="492.9" cy="212.9" r="0.67" fill="#3a6fe0" opacity="0.83"/><circle cx="508.4" cy="192.8" r="0.63" fill="#3b82e6" opacity="0.71"/><circle cx="329.1" cy="194.9" r="0.60" fill="#52dca6" opacity="0.70"/><circle cx="479.8" cy="197.2" r="0.59" fill="#4aa0e0" opacity="0.78"/><circle cx="387.1" cy="201.7" r="0.75" fill="#52dca6" opacity="0.71"/><circle cx="510.1" cy="196.3" r="0.60" fill="#3b82e6" opacity="0.86"/><circle cx="324.8" cy="204.7" r="0.78" fill="#52dca6" opacity="0.64"/><circle cx="380.8" cy="190.2" r="0.72" fill="#52dca6" opacity="1.00"/><circle cx="397.9" cy="102.2" r="0.83" fill="#52dca6" opacity="0.60"/><circle cx="334.6" cy="165.0" r="0.76" fill="#52dca6" opacity="0.91"/><circle cx="338.2" cy="108.9" r="0.81" fill="#52dca6" opacity="0.71"/><circle cx="336.8" cy="156.8" r="0.74" fill="#52dca6" opacity="0.71"/><circle cx="374.3" cy="154.6" r="0.74" fill="#52dca6" opacity="0.98"/><circle cx="371.0" cy="95.4" r="0.92" fill="#52dca6" opacity="0.93"/><circle cx="361.3" cy="93.0" r="0.75" fill="#52dca6" opacity="0.98"/><circle cx="387.6" cy="190.6" r="0.81" fill="#52dca6" opacity="0.65"/><circle cx="357.2" cy="135.9" r="0.57" fill="#52dca6" opacity="0.63"/><circle cx="365.5" cy="130.9" r="0.73" fill="#52dca6" opacity="0.60"/><circle cx="387.8" cy="108.8" r="0.51" fill="#52dca6" opacity="0.92"/><circle cx="359.3" cy="110.9" r="0.57" fill="#52dca6" opacity="0.57"/><circle cx="418.7" cy="163.5" r="0.58" fill="#52dca6" opacity="0.93"/><circle cx="324.7" cy="159.5" r="0.53" fill="#52dca6" opacity="0.71"/><circle cx="425.4" cy="125.2" r="0.55" fill="#4aa0e0" opacity="0.94"/><circle cx="439.3" cy="175.1" r="0.94" fill="#52dca6" opacity="0.79"/><circle cx="365.1" cy="149.3" r="0.79" fill="#52dca6" opacity="0.59"/><circle cx="468.1" cy="53.2" r="0.73" fill="#4aa0e0" opacity="0.69"/><circle cx="368.0" cy="156.2" r="0.61" fill="#52dca6" opacity="0.85"/><circle cx="327.9" cy="187.2" r="0.60" fill="#52dca6" opacity="0.58"/><circle cx="353.8" cy="158.9" r="0.59" fill="#52dca6" opacity="0.73"/><circle cx="486.9" cy="72.8" r="0.92" fill="#3b82e6" opacity="0.63"/><circle cx="363.9" cy="122.7" r="0.46" fill="#52dca6" opacity="0.87"/><circle cx="382.9" cy="150.0" r="0.50" fill="#52dca6" opacity="0.68"/><circle cx="345.4" cy="186.9" r="0.65" fill="#52dca6" opacity="0.82"/><circle cx="372.3" cy="138.2" r="0.73" fill="#52dca6" opacity="0.83"/><circle cx="491.7" cy="194.2" r="0.58" fill="#4aa0e0" opacity="0.75"/><circle cx="424.9" cy="151.0" r="0.90" fill="#3a6fe0" opacity="0.94"/><circle cx="397.9" cy="156.6" r="0.47" fill="#52dca6" opacity="0.69"/><circle cx="442.2" cy="232.9" r="0.76" fill="#4aa0e0" opacity="0.65"/><circle cx="383.2" cy="221.6" r="0.62" fill="#52dca6" opacity="0.78"/><circle cx="429.8" cy="175.9" r="0.66" fill="#3b82e6" opacity="0.78"/><circle cx="496.9" cy="114.2" r="0.86" fill="#4aa0e0" opacity="0.80"/><circle cx="342.0" cy="120.1" r="0.58" fill="#52dca6" opacity="0.98"/><circle cx="335.7" cy="193.8" r="0.52" fill="#52dca6" opacity="0.86"/><circle cx="374.6" cy="102.9" r="0.80" fill="#52dca6" opacity="0.61"/><circle cx="414.0" cy="136.4" r="0.62" fill="#3b82e6" opacity="0.92"/><circle cx="394.8" cy="185.7" r="0.75" fill="#52dca6" opacity="0.76"/><circle cx="446.8" cy="83.9" r="0.55" fill="#52dca6" opacity="0.58"/><circle cx="351.9" cy="206.2" r="0.51" fill="#52dca6" opacity="0.70"/><circle cx="377.0" cy="107.0" r="0.46" fill="#52dca6" opacity="1.00"/><circle cx="448.4" cy="174.8" r="0.77" fill="#3b82e6" opacity="0.98"/><circle cx="383.6" cy="182.2" r="0.50" fill="#52dca6" opacity="0.68"/><circle cx="407.6" cy="171.3" r="0.49" fill="#52dca6" opacity="0.89"/><circle cx="326.1" cy="192.8" r="0.93" fill="#52dca6" opacity="0.79"/><circle cx="480.4" cy="134.3" r="0.82" fill="#3a6fe0" opacity="0.70"/><circle cx="340.5" cy="183.6" r="0.73" fill="#52dca6" opacity="0.72"/><circle cx="463.3" cy="204.7" r="0.91" fill="#4aa0e0" opacity="1.00"/><circle cx="370.8" cy="195.1" r="0.82" fill="#52dca6" opacity="1.00"/><circle cx="404.3" cy="91.4" r="0.52" fill="#52dca6" opacity="0.84"/><circle cx="376.9" cy="189.5" r="0.56" fill="#52dca6" opacity="0.72"/><circle cx="321.3" cy="180.1" r="0.52" fill="#52dca6" opacity="0.58"/><circle cx="326.8" cy="91.0" r="0.45" fill="#52dca6" opacity="0.98"/><circle cx="336.9" cy="98.0" r="0.85" fill="#52dca6" opacity="0.85"/><circle cx="392.5" cy="198.1" r="0.66" fill="#52dca6" opacity="0.79"/><circle cx="414.2" cy="208.6" r="0.85" fill="#52dca6" opacity="0.88"/><circle cx="352.8" cy="180.2" r="0.63" fill="#52dca6" opacity="0.85"/><circle cx="338.4" cy="182.4" r="0.87" fill="#52dca6" opacity="0.65"/><circle cx="437.8" cy="187.5" r="0.63" fill="#3a6fe0" opacity="0.66"/><circle cx="373.8" cy="164.8" r="0.55" fill="#52dca6" opacity="0.89"/><circle cx="346.0" cy="94.4" r="0.79" fill="#52dca6" opacity="0.87"/><circle cx="336.8" cy="194.0" r="0.82" fill="#52dca6" opacity="0.96"/><circle cx="403.0" cy="120.5" r="0.52" fill="#52dca6" opacity="0.78"/><circle cx="392.8" cy="165.9" r="0.93" fill="#52dca6" opacity="0.78"/><circle cx="375.0" cy="125.6" r="0.55" fill="#52dca6" opacity="0.76"/><circle cx="326.4" cy="198.5" r="0.47" fill="#52dca6" opacity="0.57"/><circle cx="434.7" cy="89.0" r="0.90" fill="#52dca6" opacity="0.59"/><circle cx="510.2" cy="169.5" r="0.53" fill="#3a6fe0" opacity="0.89"/><circle cx="358.4" cy="122.8" r="0.51" fill="#52dca6" opacity="0.72"/><circle cx="445.8" cy="83.7" r="0.63" fill="#3b82e6" opacity="0.70"/><circle cx="417.0" cy="104.6" r="0.63" fill="#52dca6" opacity="0.86"/><circle cx="333.6" cy="149.0" r="0.69" fill="#52dca6" opacity="0.58"/><circle cx="353.3" cy="180.6" r="0.78" fill="#52dca6" opacity="0.93"/><circle cx="403.0" cy="236.1" r="0.58" fill="#52dca6" opacity="0.75"/><circle cx="334.1" cy="189.7" r="0.47" fill="#52dca6" opacity="0.93"/><circle cx="325.0" cy="181.9" r="0.87" fill="#52dca6" opacity="0.99"/><circle cx="423.7" cy="156.6" r="0.61" fill="#3a6fe0" opacity="0.65"/><circle cx="479.6" cy="83.8" r="0.81" fill="#3a6fe0" opacity="0.70"/><circle cx="383.0" cy="96.8" r="0.69" fill="#52dca6" opacity="0.65"/><circle cx="350.3" cy="181.8" r="0.81" fill="#52dca6" opacity="0.61"/><circle cx="378.6" cy="206.1" r="0.74" fill="#52dca6" opacity="0.81"/><circle cx="330.9" cy="119.5" r="0.50" fill="#52dca6" opacity="0.64"/><circle cx="369.4" cy="146.0" r="0.85" fill="#52dca6" opacity="0.66"/><circle cx="454.9" cy="159.8" r="0.63" fill="#52dca6" opacity="0.93"/><circle cx="350.5" cy="94.7" r="0.80" fill="#52dca6" opacity="0.85"/><circle cx="479.1" cy="107.6" r="0.95" fill="#3b82e6" opacity="0.62"/><circle cx="346.3" cy="181.9" r="0.65" fill="#52dca6" opacity="0.90"/><circle cx="489.0" cy="138.8" r="0.81" fill="#3a6fe0" opacity="0.80"/><circle cx="487.7" cy="245.2" r="0.74" fill="#3b82e6" opacity="0.69"/><circle cx="346.6" cy="197.9" r="0.81" fill="#52dca6" opacity="0.96"/><circle cx="463.8" cy="169.5" r="0.46" fill="#4aa0e0" opacity="0.62"/><circle cx="346.7" cy="184.6" r="0.55" fill="#52dca6" opacity="0.82"/><circle cx="470.3" cy="131.0" r="0.75" fill="#3b82e6" opacity="0.59"/><circle cx="460.4" cy="77.6" r="0.72" fill="#52dca6" opacity="0.94"/><circle cx="417.7" cy="91.1" r="0.69" fill="#4aa0e0" opacity="0.82"/><circle cx="459.3" cy="208.6" r="0.76" fill="#52dca6" opacity="0.90"/><circle cx="499.6" cy="208.0" r="0.91" fill="#3b82e6" opacity="0.80"/><circle cx="515.6" cy="169.7" r="0.53" fill="#3a6fe0" opacity="0.56"/><circle cx="331.7" cy="187.6" r="0.63" fill="#52dca6" opacity="0.70"/><circle cx="426.0" cy="137.8" r="0.82" fill="#3b82e6" opacity="0.67"/><circle cx="432.4" cy="63.5" r="0.68" fill="#4aa0e0" opacity="0.68"/><circle cx="392.0" cy="97.0" r="0.69" fill="#52dca6" opacity="0.84"/><circle cx="437.9" cy="135.8" r="0.92" fill="#3b82e6" opacity="0.83"/><circle cx="329.9" cy="147.4" r="0.58" fill="#52dca6" opacity="0.82"/><circle cx="446.6" cy="114.6" r="0.46" fill="#4aa0e0" opacity="0.90"/><circle cx="350.5" cy="189.8" r="0.62" fill="#52dca6" opacity="0.91"/><circle cx="372.6" cy="125.8" r="0.82" fill="#52dca6" opacity="0.58"/><circle cx="407.7" cy="114.9" r="0.90" fill="#3a6fe0" opacity="0.72"/><circle cx="419.4" cy="92.6" r="0.57" fill="#3b82e6" opacity="0.64"/><circle cx="441.2" cy="129.4" r="0.73" fill="#52dca6" opacity="0.62"/><circle cx="474.7" cy="129.4" r="0.59" fill="#3a6fe0" opacity="0.70"/><circle cx="384.5" cy="188.6" r="0.75" fill="#52dca6" opacity="0.75"/><circle cx="403.7" cy="138.6" r="0.63" fill="#52dca6" opacity="0.90"/><circle cx="476.2" cy="215.0" r="0.79" fill="#3a6fe0" opacity="0.91"/><circle cx="337.8" cy="104.5" r="0.70" fill="#52dca6" opacity="0.71"/><circle cx="436.9" cy="201.5" r="0.81" fill="#4aa0e0" opacity="0.95"/><circle cx="510.2" cy="156.2" r="0.46" fill="#4aa0e0" opacity="0.61"/><circle cx="397.7" cy="132.3" r="0.47" fill="#52dca6" opacity="0.95"/><circle cx="339.4" cy="172.1" r="0.71" fill="#52dca6" opacity="0.55"/><circle cx="335.7" cy="187.6" r="0.95" fill="#52dca6" opacity="0.79"/><circle cx="467.4" cy="146.3" r="0.82" fill="#3b82e6" opacity="0.67"/><circle cx="337.6" cy="110.1" r="0.70" fill="#52dca6" opacity="0.73"/><circle cx="395.9" cy="196.0" r="0.78" fill="#52dca6" opacity="0.79"/><circle cx="389.5" cy="87.1" r="0.81" fill="#52dca6" opacity="0.73"/><circle cx="342.7" cy="205.5" r="0.64" fill="#52dca6" opacity="0.73"/><circle cx="335.3" cy="190.4" r="0.91" fill="#52dca6" opacity="0.66"/><circle cx="405.4" cy="105.2" r="0.51" fill="#52dca6" opacity="0.93"/><circle cx="451.7" cy="194.6" r="0.77" fill="#52dca6" opacity="0.80"/><circle cx="354.3" cy="149.9" r="0.88" fill="#52dca6" opacity="0.78"/><circle cx="407.6" cy="194.6" r="0.82" fill="#52dca6" opacity="0.72"/><circle cx="427.1" cy="210.2" r="0.49" fill="#3a6fe0" opacity="0.91"/><circle cx="427.8" cy="82.5" r="0.62" fill="#4aa0e0" opacity="0.82"/><circle cx="401.1" cy="150.0" r="0.63" fill="#52dca6" opacity="0.64"/><circle cx="332.0" cy="116.8" r="0.78" fill="#52dca6" opacity="0.63"/><circle cx="501.2" cy="104.8" r="0.64" fill="#3a6fe0" opacity="0.92"/><circle cx="461.5" cy="98.4" r="0.63" fill="#3b82e6" opacity="0.85"/><circle cx="387.0" cy="118.9" r="0.60" fill="#52dca6" opacity="0.75"/><circle cx="327.1" cy="97.1" r="0.71" fill="#52dca6" opacity="0.55"/><circle cx="326.5" cy="191.3" r="0.71" fill="#52dca6" opacity="0.91"/><circle cx="345.7" cy="105.4" r="0.75" fill="#52dca6" opacity="0.69"/><circle cx="397.2" cy="93.7" r="0.67" fill="#52dca6" opacity="0.79"/><circle cx="385.9" cy="156.1" r="0.60" fill="#52dca6" opacity="0.90"/><circle cx="487.7" cy="64.5" r="0.93" fill="#3a6fe0" opacity="0.74"/><circle cx="407.1" cy="169.0" r="0.51" fill="#52dca6" opacity="0.83"/><circle cx="510.0" cy="58.0" r="0.61" fill="#3b82e6" opacity="0.58"/><circle cx="438.6" cy="213.2" r="0.50" fill="#3b82e6" opacity="0.80"/><circle cx="491.4" cy="110.3" r="0.90" fill="#3b82e6" opacity="0.75"/><circle cx="374.0" cy="191.8" r="0.82" fill="#52dca6" opacity="0.73"/><circle cx="326.1" cy="134.3" r="0.83" fill="#52dca6" opacity="0.60"/><circle cx="350.3" cy="114.2" r="0.49" fill="#52dca6" opacity="0.89"/><circle cx="405.1" cy="162.4" r="0.69" fill="#52dca6" opacity="0.57"/><circle cx="420.9" cy="168.7" r="0.52" fill="#4aa0e0" opacity="0.70"/><circle cx="403.5" cy="101.4" r="0.58" fill="#52dca6" opacity="0.69"/><circle cx="350.2" cy="181.5" r="0.66" fill="#52dca6" opacity="0.57"/><circle cx="358.5" cy="126.9" r="0.58" fill="#52dca6" opacity="0.64"/><circle cx="324.5" cy="188.3" r="0.69" fill="#52dca6" opacity="0.81"/><circle cx="362.5" cy="138.2" r="0.73" fill="#52dca6" opacity="0.57"/><circle cx="348.8" cy="189.5" r="0.61" fill="#52dca6" opacity="0.67"/><circle cx="451.5" cy="200.0" r="0.65" fill="#3a6fe0" opacity="0.88"/><circle cx="341.3" cy="159.3" r="0.51" fill="#52dca6" opacity="0.61"/><circle cx="479.2" cy="64.3" r="0.73" fill="#4aa0e0" opacity="0.91"/><circle cx="381.1" cy="82.6" r="0.56" fill="#52dca6" opacity="0.93"/><circle cx="338.0" cy="104.1" r="0.50" fill="#52dca6" opacity="0.90"/><circle cx="491.5" cy="102.9" r="0.79" fill="#3a6fe0" opacity="0.62"/><circle cx="328.9" cy="146.2" r="0.60" fill="#52dca6" opacity="0.65"/><circle cx="399.0" cy="115.4" r="0.91" fill="#52dca6" opacity="0.70"/><circle cx="471.1" cy="200.8" r="0.94" fill="#3a6fe0" opacity="0.70"/><circle cx="334.0" cy="203.0" r="0.55" fill="#52dca6" opacity="0.62"/><circle cx="335.9" cy="114.5" r="0.63" fill="#52dca6" opacity="0.85"/><circle cx="337.7" cy="96.8" r="0.69" fill="#52dca6" opacity="0.56"/><circle cx="458.1" cy="64.2" r="0.60" fill="#52dca6" opacity="0.81"/><circle cx="444.8" cy="183.6" r="0.74" fill="#3b82e6" opacity="0.68"/><circle cx="401.5" cy="98.5" r="0.53" fill="#52dca6" opacity="0.69"/><circle cx="333.9" cy="115.0" r="0.63" fill="#52dca6" opacity="0.60"/><circle cx="466.2" cy="168.0" r="0.73" fill="#4aa0e0" opacity="0.90"/><circle cx="403.4" cy="195.9" r="0.50" fill="#52dca6" opacity="0.84"/><circle cx="329.8" cy="186.6" r="0.78" fill="#52dca6" opacity="0.62"/><circle cx="341.3" cy="145.2" r="0.89" fill="#52dca6" opacity="0.77"/><circle cx="343.8" cy="117.1" r="0.70" fill="#52dca6" opacity="0.79"/><circle cx="329.9" cy="191.3" r="0.70" fill="#52dca6" opacity="0.72"/><circle cx="337.0" cy="109.9" r="0.57" fill="#52dca6" opacity="0.94"/><circle cx="386.0" cy="147.5" r="0.69" fill="#52dca6" opacity="0.91"/><circle cx="397.9" cy="133.6" r="0.53" fill="#52dca6" opacity="0.67"/><circle cx="323.8" cy="114.0" r="0.90" fill="#52dca6" opacity="0.59"/><circle cx="401.6" cy="183.1" r="0.81" fill="#52dca6" opacity="0.58"/><circle cx="333.4" cy="89.6" r="0.76" fill="#52dca6" opacity="0.86"/><circle cx="453.6" cy="229.3" r="0.46" fill="#3b82e6" opacity="0.97"/><circle cx="367.2" cy="105.3" r="0.82" fill="#52dca6" opacity="0.86"/><circle cx="333.9" cy="111.0" r="0.56" fill="#52dca6" opacity="0.70"/><circle cx="514.4" cy="200.8" r="0.71" fill="#3a6fe0" opacity="0.70"/><circle cx="328.5" cy="147.0" r="0.48" fill="#52dca6" opacity="0.71"/><circle cx="361.1" cy="166.9" r="0.85" fill="#52dca6" opacity="0.77"/><circle cx="443.3" cy="198.1" r="0.48" fill="#52dca6" opacity="0.76"/><circle cx="450.2" cy="187.4" r="0.60" fill="#4aa0e0" opacity="0.98"/><circle cx="393.5" cy="146.2" r="0.84" fill="#52dca6" opacity="0.66"/><circle cx="465.5" cy="212.6" r="0.89" fill="#3b82e6" opacity="0.81"/><circle cx="493.7" cy="195.9" r="0.85" fill="#3a6fe0" opacity="0.86"/><circle cx="497.4" cy="64.1" r="0.79" fill="#4aa0e0" opacity="0.91"/><circle cx="424.4" cy="85.6" r="0.75" fill="#52dca6" opacity="0.98"/><circle cx="471.3" cy="91.4" r="0.62" fill="#3b82e6" opacity="0.65"/><circle cx="363.5" cy="91.0" r="0.49" fill="#52dca6" opacity="0.67"/><circle cx="422.3" cy="165.2" r="0.79" fill="#52dca6" opacity="0.57"/><circle cx="462.4" cy="174.7" r="0.53" fill="#3a6fe0" opacity="0.71"/><circle cx="468.3" cy="55.6" r="0.93" fill="#3a6fe0" opacity="0.78"/><circle cx="512.9" cy="127.0" r="0.45" fill="#4aa0e0" opacity="0.93"/><circle cx="332.1" cy="201.2" r="0.82" fill="#52dca6" opacity="0.85"/><circle cx="507.3" cy="160.5" r="0.91" fill="#3b82e6" opacity="0.95"/><circle cx="427.0" cy="206.7" r="0.60" fill="#3a6fe0" opacity="0.87"/><circle cx="434.0" cy="83.0" r="0.63" fill="#3a6fe0" opacity="0.99"/><circle cx="333.3" cy="179.3" r="0.67" fill="#52dca6" opacity="0.89"/><circle cx="479.0" cy="50.9" r="0.69" fill="#3a6fe0" opacity="0.55"/><circle cx="493.1" cy="174.9" r="0.47" fill="#4aa0e0" opacity="0.73"/><circle cx="438.2" cy="130.5" r="0.72" fill="#52dca6" opacity="0.74"/><circle cx="500.8" cy="165.8" r="0.70" fill="#3a6fe0" opacity="0.99"/><circle cx="364.2" cy="140.6" r="0.70" fill="#52dca6" opacity="0.57"/><circle cx="394.0" cy="140.4" r="0.48" fill="#52dca6" opacity="0.69"/><circle cx="384.4" cy="166.7" r="0.94" fill="#52dca6" opacity="0.90"/><circle cx="359.2" cy="136.2" r="0.69" fill="#52dca6" opacity="0.83"/><circle cx="484.7" cy="220.6" r="0.64" fill="#3a6fe0" opacity="0.98"/><circle cx="350.7" cy="212.1" r="0.87" fill="#52dca6" opacity="0.84"/><circle cx="447.8" cy="166.9" r="0.73" fill="#52dca6" opacity="0.85"/><circle cx="441.4" cy="179.1" r="0.88" fill="#3a6fe0" opacity="0.60"/><circle cx="381.7" cy="194.2" r="0.60" fill="#52dca6" opacity="0.82"/><circle cx="370.9" cy="145.3" r="0.50" fill="#52dca6" opacity="0.82"/><circle cx="466.3" cy="103.5" r="0.77" fill="#3b82e6" opacity="0.99"/><circle cx="410.2" cy="169.8" r="0.87" fill="#4aa0e0" opacity="0.73"/><circle cx="379.7" cy="188.1" r="0.52" fill="#52dca6" opacity="0.88"/><circle cx="373.0" cy="98.1" r="0.79" fill="#52dca6" opacity="0.97"/><circle cx="336.4" cy="108.0" r="0.67" fill="#52dca6" opacity="0.65"/><circle cx="437.7" cy="105.6" r="0.56" fill="#52dca6" opacity="0.93"/><circle cx="347.1" cy="111.3" r="0.93" fill="#52dca6" opacity="0.97"/><circle cx="362.2" cy="176.7" r="0.64" fill="#52dca6" opacity="0.95"/><circle cx="432.8" cy="172.8" r="0.60" fill="#3b82e6" opacity="0.71"/><circle cx="400.5" cy="94.6" r="0.71" fill="#52dca6" opacity="0.60"/><circle cx="499.8" cy="193.2" r="0.59" fill="#3a6fe0" opacity="0.58"/><circle cx="366.3" cy="94.0" r="0.86" fill="#52dca6" opacity="0.60"/><circle cx="339.5" cy="99.8" r="0.73" fill="#52dca6" opacity="0.65"/><circle cx="455.3" cy="210.5" r="0.56" fill="#3b82e6" opacity="0.63"/><circle cx="457.0" cy="182.2" r="0.81" fill="#3a6fe0" opacity="0.81"/><circle cx="360.3" cy="101.5" r="0.88" fill="#52dca6" opacity="1.00"/><circle cx="460.1" cy="142.9" r="0.69" fill="#52dca6" opacity="0.61"/><circle cx="373.1" cy="175.1" r="0.62" fill="#52dca6" opacity="0.64"/><circle cx="366.8" cy="162.6" r="0.71" fill="#52dca6" opacity="0.75"/><circle cx="338.8" cy="100.6" r="0.73" fill="#52dca6" opacity="0.87"/><circle cx="504.4" cy="50.9" r="0.76" fill="#4aa0e0" opacity="0.56"/><circle cx="351.4" cy="202.4" r="0.82" fill="#52dca6" opacity="0.79"/><circle cx="392.1" cy="85.3" r="0.63" fill="#52dca6" opacity="0.60"/><circle cx="436.8" cy="75.2" r="0.62" fill="#3b82e6" opacity="0.94"/><circle cx="365.5" cy="95.0" r="0.62" fill="#52dca6" opacity="0.69"/><circle cx="491.5" cy="193.5" r="0.70" fill="#3a6fe0" opacity="0.64"/><circle cx="356.6" cy="154.7" r="0.92" fill="#52dca6" opacity="0.99"/><circle cx="372.7" cy="130.0" r="0.87" fill="#52dca6" opacity="0.61"/><circle cx="329.6" cy="200.5" r="0.45" fill="#52dca6" opacity="0.92"/><circle cx="449.4" cy="152.2" r="0.88" fill="#3b82e6" opacity="0.70"/><circle cx="388.6" cy="159.8" r="0.45" fill="#52dca6" opacity="0.64"/><circle cx="361.4" cy="144.3" r="0.92" fill="#52dca6" opacity="0.75"/><circle cx="406.3" cy="132.1" r="0.83" fill="#52dca6" opacity="0.81"/><circle cx="435.6" cy="188.6" r="0.81" fill="#3b82e6" opacity="0.76"/><circle cx="475.1" cy="192.9" r="0.48" fill="#3a6fe0" opacity="0.66"/><circle cx="509.5" cy="190.9" r="0.77" fill="#3b82e6" opacity="0.88"/><circle cx="340.1" cy="170.7" r="0.47" fill="#52dca6" opacity="0.57"/><circle cx="347.6" cy="188.2" r="0.92" fill="#52dca6" opacity="0.84"/><circle cx="488.1" cy="99.5" r="0.83" fill="#3b82e6" opacity="0.95"/><circle cx="335.3" cy="198.3" r="0.61" fill="#52dca6" opacity="0.78"/><circle cx="492.1" cy="118.1" r="0.73" fill="#3b82e6" opacity="0.92"/><circle cx="380.5" cy="129.5" r="0.49" fill="#52dca6" opacity="0.57"/><circle cx="392.7" cy="112.9" r="0.82" fill="#52dca6" opacity="0.56"/><circle cx="464.8" cy="68.7" r="0.82" fill="#4aa0e0" opacity="0.85"/><circle cx="506.2" cy="194.8" r="0.50" fill="#4aa0e0" opacity="0.88"/><circle cx="469.6" cy="191.2" r="0.60" fill="#3a6fe0" opacity="0.68"/><circle cx="379.8" cy="94.9" r="0.49" fill="#52dca6" opacity="0.57"/><circle cx="425.1" cy="184.5" r="0.74" fill="#4aa0e0" opacity="0.64"/><circle cx="443.7" cy="84.7" r="0.81" fill="#52dca6" opacity="0.85"/><circle cx="341.8" cy="98.9" r="0.76" fill="#52dca6" opacity="0.68"/><circle cx="352.0" cy="171.4" r="0.46" fill="#52dca6" opacity="0.72"/><circle cx="342.7" cy="208.9" r="0.69" fill="#52dca6" opacity="0.83"/><circle cx="442.3" cy="122.4" r="0.72" fill="#52dca6" opacity="0.70"/><circle cx="388.0" cy="119.5" r="0.84" fill="#52dca6" opacity="0.66"/><circle cx="360.6" cy="107.0" r="0.88" fill="#52dca6" opacity="0.74"/><circle cx="359.5" cy="194.0" r="0.56" fill="#52dca6" opacity="0.57"/><circle cx="420.5" cy="211.8" r="0.49" fill="#4aa0e0" opacity="0.65"/><circle cx="350.9" cy="104.1" r="0.81" fill="#52dca6" opacity="1.00"/><circle cx="330.6" cy="195.8" r="0.82" fill="#52dca6" opacity="0.89"/><circle cx="345.3" cy="193.4" r="0.55" fill="#52dca6" opacity="0.67"/><circle cx="497.8" cy="175.9" r="0.48" fill="#4aa0e0" opacity="0.73"/><circle cx="329.6" cy="97.4" r="0.49" fill="#52dca6" opacity="0.80"/><circle cx="430.9" cy="121.3" r="0.54" fill="#3a6fe0" opacity="0.60"/><circle cx="345.9" cy="200.1" r="0.81" fill="#52dca6" opacity="0.59"/><circle cx="487.0" cy="122.6" r="0.50" fill="#3b82e6" opacity="0.64"/><circle cx="355.6" cy="172.0" r="0.49" fill="#52dca6" opacity="0.59"/><circle cx="447.6" cy="77.3" r="0.69" fill="#52dca6" opacity="0.93"/><circle cx="329.4" cy="193.6" r="0.48" fill="#52dca6" opacity="0.68"/><circle cx="358.4" cy="181.5" r="0.72" fill="#52dca6" opacity="0.63"/><circle cx="361.6" cy="92.6" r="0.78" fill="#52dca6" opacity="0.94"/><circle cx="489.6" cy="205.1" r="0.56" fill="#3b82e6" opacity="0.64"/><circle cx="338.4" cy="196.9" r="0.69" fill="#52dca6" opacity="0.94"/><circle cx="324.2" cy="94.5" r="0.46" fill="#52dca6" opacity="0.75"/><circle cx="325.1" cy="110.7" r="0.51" fill="#52dca6" opacity="0.77"/><circle cx="338.1" cy="116.3" r="0.48" fill="#52dca6" opacity="0.71"/><circle cx="385.0" cy="94.8" r="0.56" fill="#52dca6" opacity="0.88"/><circle cx="406.4" cy="104.8" r="0.51" fill="#52dca6" opacity="0.97"/><circle cx="390.0" cy="164.1" r="0.56" fill="#52dca6" opacity="0.59"/><circle cx="352.3" cy="141.6" r="0.49" fill="#52dca6" opacity="0.75"/><circle cx="356.4" cy="206.6" r="0.51" fill="#52dca6" opacity="0.99"/><circle cx="381.7" cy="195.2" r="0.71" fill="#52dca6" opacity="0.56"/><circle cx="378.9" cy="85.2" r="0.70" fill="#52dca6" opacity="0.82"/><circle cx="422.7" cy="188.8" r="0.78" fill="#3a6fe0" opacity="0.84"/><circle cx="434.3" cy="153.2" r="0.88" fill="#52dca6" opacity="0.68"/><circle cx="507.6" cy="66.4" r="0.92" fill="#3b82e6" opacity="0.73"/><circle cx="436.0" cy="98.3" r="0.71" fill="#52dca6" opacity="0.98"/><circle cx="390.4" cy="99.6" r="0.87" fill="#52dca6" opacity="0.64"/><circle cx="509.4" cy="158.1" r="0.47" fill="#3a6fe0" opacity="0.63"/><circle cx="367.5" cy="125.1" r="0.57" fill="#52dca6" opacity="0.93"/><circle cx="338.3" cy="179.4" r="0.72" fill="#52dca6" opacity="0.72"/><circle cx="343.2" cy="188.2" r="0.91" fill="#52dca6" opacity="1.00"/><circle cx="330.5" cy="120.2" r="0.66" fill="#52dca6" opacity="0.59"/><circle cx="460.8" cy="183.5" r="0.88" fill="#3b82e6" opacity="0.98"/><circle cx="352.6" cy="101.7" r="0.91" fill="#52dca6" opacity="0.60"/><circle cx="327.2" cy="160.8" r="0.89" fill="#52dca6" opacity="0.74"/><circle cx="396.0" cy="173.6" r="0.71" fill="#52dca6" opacity="0.60"/><circle cx="341.2" cy="132.1" r="0.90" fill="#52dca6" opacity="0.98"/><circle cx="348.7" cy="199.7" r="0.54" fill="#52dca6" opacity="0.86"/><circle cx="346.6" cy="200.5" r="0.79" fill="#52dca6" opacity="0.58"/><circle cx="435.2" cy="182.6" r="0.67" fill="#3b82e6" opacity="0.70"/><circle cx="454.3" cy="186.7" r="0.94" fill="#52dca6" opacity="0.99"/><circle cx="337.2" cy="188.3" r="0.52" fill="#52dca6" opacity="0.89"/><circle cx="361.0" cy="181.6" r="0.63" fill="#52dca6" opacity="1.00"/><circle cx="416.4" cy="190.2" r="0.66" fill="#4aa0e0" opacity="0.59"/><circle cx="407.9" cy="187.9" r="0.80" fill="#52dca6" opacity="0.75"/><circle cx="336.7" cy="190.8" r="0.53" fill="#52dca6" opacity="0.72"/><circle cx="502.4" cy="155.7" r="0.57" fill="#4aa0e0" opacity="0.82"/><circle cx="439.7" cy="224.9" r="0.48" fill="#52dca6" opacity="0.75"/><circle cx="420.8" cy="141.6" r="0.81" fill="#3a6fe0" opacity="0.67"/><circle cx="333.1" cy="190.3" r="0.45" fill="#52dca6" opacity="0.65"/><circle cx="343.8" cy="77.0" r="0.51" fill="#52dca6" opacity="0.97"/><circle cx="506.3" cy="219.1" r="0.60" fill="#3a6fe0" opacity="0.89"/><circle cx="469.7" cy="131.2" r="0.50" fill="#3a6fe0" opacity="0.83"/><circle cx="427.3" cy="201.1" r="0.70" fill="#52dca6" opacity="0.63"/><circle cx="489.7" cy="83.2" r="0.66" fill="#4aa0e0" opacity="0.68"/><circle cx="327.4" cy="192.9" r="0.48" fill="#52dca6" opacity="0.62"/><circle cx="447.6" cy="160.9" r="0.69" fill="#4aa0e0" opacity="0.75"/><circle cx="331.3" cy="146.2" r="0.68" fill="#52dca6" opacity="0.89"/><circle cx="380.7" cy="98.6" r="0.56" fill="#52dca6" opacity="0.56"/><circle cx="389.3" cy="214.9" r="0.55" fill="#52dca6" opacity="0.63"/><circle cx="519.4" cy="82.0" r="0.56" fill="#3b82e6" opacity="0.90"/><circle cx="459.3" cy="65.7" r="0.65" fill="#3a6fe0" opacity="0.79"/><circle cx="353.4" cy="95.7" r="0.61" fill="#52dca6" opacity="0.66"/><circle cx="335.0" cy="101.8" r="0.61" fill="#52dca6" opacity="0.90"/><circle cx="438.6" cy="177.0" r="0.49" fill="#52dca6" opacity="0.85"/><circle cx="409.2" cy="153.7" r="0.71" fill="#52dca6" opacity="0.75"/><circle cx="473.8" cy="136.1" r="0.67" fill="#4aa0e0" opacity="0.97"/><circle cx="491.0" cy="193.2" r="0.91" fill="#4aa0e0" opacity="0.61"/><circle cx="476.6" cy="79.3" r="0.76" fill="#4aa0e0" opacity="0.68"/><circle cx="330.0" cy="175.9" r="0.49" fill="#52dca6" opacity="0.73"/><circle cx="332.9" cy="106.9" r="0.83" fill="#52dca6" opacity="0.61"/><circle cx="334.8" cy="192.4" r="0.87" fill="#52dca6" opacity="0.63"/><circle cx="337.9" cy="97.3" r="0.51" fill="#52dca6" opacity="0.66"/><circle cx="507.1" cy="171.1" r="0.90" fill="#4aa0e0" opacity="0.76"/><circle cx="496.2" cy="189.1" r="0.55" fill="#4aa0e0" opacity="0.90"/><circle cx="446.2" cy="131.8" r="0.46" fill="#3b82e6" opacity="0.78"/><circle cx="453.8" cy="146.6" r="0.54" fill="#3a6fe0" opacity="0.89"/><circle cx="359.8" cy="167.4" r="0.88" fill="#52dca6" opacity="0.81"/><circle cx="328.7" cy="131.6" r="0.93" fill="#52dca6" opacity="0.70"/><circle cx="469.6" cy="184.1" r="0.76" fill="#3a6fe0" opacity="0.73"/><circle cx="350.5" cy="190.8" r="0.83" fill="#52dca6" opacity="0.90"/><circle cx="406.3" cy="180.4" r="0.48" fill="#52dca6" opacity="0.95"/><circle cx="339.7" cy="196.8" r="0.61" fill="#52dca6" opacity="0.75"/><circle cx="353.4" cy="208.0" r="0.48" fill="#52dca6" opacity="0.95"/><circle cx="333.7" cy="173.3" r="0.93" fill="#52dca6" opacity="0.94"/><circle cx="401.0" cy="127.8" r="0.94" fill="#52dca6" opacity="0.98"/><circle cx="371.2" cy="158.5" r="0.81" fill="#52dca6" opacity="0.71"/><circle cx="337.4" cy="169.4" r="0.46" fill="#52dca6" opacity="0.72"/><circle cx="407.3" cy="150.1" r="0.77" fill="#52dca6" opacity="0.69"/><circle cx="375.4" cy="171.3" r="0.74" fill="#52dca6" opacity="0.69"/><circle cx="362.6" cy="176.8" r="0.91" fill="#52dca6" opacity="0.82"/><circle cx="513.8" cy="196.2" r="0.89" fill="#3b82e6" opacity="0.85"/><circle cx="337.7" cy="161.2" r="0.80" fill="#52dca6" opacity="0.61"/><circle cx="493.4" cy="206.9" r="0.52" fill="#4aa0e0" opacity="1.00"/><circle cx="336.9" cy="167.6" r="0.50" fill="#52dca6" opacity="0.91"/><circle cx="410.9" cy="158.7" r="0.82" fill="#52dca6" opacity="0.62"/><circle cx="418.5" cy="104.1" r="0.82" fill="#4aa0e0" opacity="0.63"/><circle cx="386.9" cy="99.0" r="0.93" fill="#52dca6" opacity="1.00"/><circle cx="398.2" cy="135.2" r="0.73" fill="#52dca6" opacity="0.89"/><circle cx="466.2" cy="125.7" r="0.90" fill="#3b82e6" opacity="0.93"/><circle cx="431.6" cy="184.8" r="0.56" fill="#52dca6" opacity="0.62"/><circle cx="376.2" cy="194.2" r="0.75" fill="#52dca6" opacity="0.66"/><circle cx="340.6" cy="146.2" r="0.85" fill="#52dca6" opacity="0.96"/><circle cx="338.0" cy="96.0" r="0.86" fill="#52dca6" opacity="0.65"/><circle cx="347.0" cy="120.6" r="0.50" fill="#52dca6" opacity="0.76"/><circle cx="406.4" cy="223.1" r="0.71" fill="#52dca6" opacity="0.77"/><circle cx="334.9" cy="130.1" r="0.73" fill="#52dca6" opacity="0.74"/><circle cx="356.3" cy="198.2" r="0.65" fill="#52dca6" opacity="0.87"/><circle cx="370.5" cy="209.1" r="0.52" fill="#52dca6" opacity="0.82"/><circle cx="331.9" cy="164.3" r="0.83" fill="#52dca6" opacity="0.82"/><circle cx="378.8" cy="208.7" r="0.70" fill="#52dca6" opacity="0.78"/><circle cx="340.6" cy="113.4" r="0.50" fill="#52dca6" opacity="0.88"/><circle cx="354.2" cy="172.1" r="0.68" fill="#52dca6" opacity="0.93"/><circle cx="403.0" cy="200.8" r="0.70" fill="#52dca6" opacity="0.87"/><circle cx="430.3" cy="88.1" r="0.82" fill="#4aa0e0" opacity="0.98"/><circle cx="328.5" cy="171.3" r="0.75" fill="#52dca6" opacity="0.85"/><circle cx="363.5" cy="187.3" r="0.54" fill="#52dca6" opacity="0.60"/><circle cx="482.3" cy="82.3" r="0.67" fill="#3a6fe0" opacity="0.67"/><circle cx="395.4" cy="153.6" r="0.61" fill="#52dca6" opacity="0.97"/><circle cx="332.6" cy="202.0" r="0.88" fill="#52dca6" opacity="0.56"/><circle cx="462.9" cy="213.0" r="0.90" fill="#52dca6" opacity="0.68"/><circle cx="388.5" cy="95.6" r="0.55" fill="#52dca6" opacity="0.88"/><circle cx="333.3" cy="196.1" r="0.51" fill="#52dca6" opacity="0.99"/><circle cx="486.9" cy="208.0" r="0.84" fill="#3b82e6" opacity="0.62"/><circle cx="470.5" cy="160.0" r="0.50" fill="#3a6fe0" opacity="0.94"/><circle cx="431.1" cy="63.2" r="0.51" fill="#52dca6" opacity="0.56"/><circle cx="429.3" cy="87.8" r="0.75" fill="#52dca6" opacity="0.85"/><circle cx="365.4" cy="164.0" r="0.95" fill="#52dca6" opacity="0.87"/><circle cx="338.8" cy="195.3" r="0.82" fill="#52dca6" opacity="0.58"/><circle cx="390.4" cy="190.8" r="0.85" fill="#52dca6" opacity="0.81"/><circle cx="380.9" cy="90.0" r="0.65" fill="#52dca6" opacity="0.97"/><circle cx="476.5" cy="74.7" r="0.79" fill="#3b82e6" opacity="0.62"/><circle cx="404.7" cy="149.9" r="0.66" fill="#3a6fe0" opacity="0.85"/><circle cx="398.4" cy="125.2" r="0.93" fill="#52dca6" opacity="0.97"/><circle cx="407.0" cy="110.9" r="0.90" fill="#52dca6" opacity="0.91"/><circle cx="458.0" cy="144.2" r="0.83" fill="#52dca6" opacity="0.67"/><circle cx="413.4" cy="220.9" r="0.59" fill="#52dca6" opacity="0.97"/><circle cx="338.3" cy="101.7" r="0.83" fill="#52dca6" opacity="0.81"/><circle cx="480.3" cy="129.4" r="0.74" fill="#3b82e6" opacity="0.61"/><circle cx="368.0" cy="181.4" r="0.89" fill="#52dca6" opacity="0.91"/><circle cx="326.1" cy="110.2" r="0.87" fill="#52dca6" opacity="0.68"/><circle cx="329.3" cy="122.2" r="0.70" fill="#52dca6" opacity="0.78"/><circle cx="391.2" cy="172.9" r="0.59" fill="#52dca6" opacity="0.84"/><circle cx="351.2" cy="125.2" r="0.47" fill="#52dca6" opacity="0.93"/><circle cx="455.8" cy="193.6" r="0.82" fill="#4aa0e0" opacity="0.61"/><circle cx="411.2" cy="164.2" r="0.69" fill="#52dca6" opacity="0.59"/><circle cx="469.8" cy="195.7" r="0.89" fill="#3a6fe0" opacity="0.59"/><circle cx="354.4" cy="130.3" r="0.77" fill="#52dca6" opacity="0.89"/><circle cx="417.9" cy="85.4" r="0.69" fill="#3b82e6" opacity="0.90"/><circle cx="348.6" cy="144.0" r="0.76" fill="#52dca6" opacity="0.99"/><circle cx="442.7" cy="121.2" r="0.50" fill="#52dca6" opacity="0.96"/><circle cx="452.7" cy="60.7" r="0.86" fill="#52dca6" opacity="0.98"/><circle cx="493.6" cy="230.0" r="0.89" fill="#3a6fe0" opacity="0.96"/><circle cx="470.9" cy="209.9" r="0.73" fill="#3b82e6" opacity="0.89"/><circle cx="408.8" cy="221.6" r="0.93" fill="#52dca6" opacity="0.99"/><circle cx="323.2" cy="179.2" r="0.72" fill="#52dca6" opacity="0.69"/><circle cx="329.2" cy="112.0" r="0.76" fill="#52dca6" opacity="0.80"/><circle cx="495.1" cy="115.5" r="0.55" fill="#4aa0e0" opacity="0.98"/><circle cx="421.9" cy="105.1" r="0.80" fill="#52dca6" opacity="0.87"/><circle cx="399.7" cy="102.8" r="0.71" fill="#52dca6" opacity="0.85"/><circle cx="442.5" cy="101.6" r="0.55" fill="#52dca6" opacity="0.81"/><circle cx="419.7" cy="140.5" r="0.90" fill="#52dca6" opacity="0.86"/><circle cx="383.3" cy="211.2" r="0.54" fill="#52dca6" opacity="0.81"/><circle cx="512.3" cy="73.7" r="0.58" fill="#3b82e6" opacity="0.95"/><circle cx="382.2" cy="225.7" r="0.80" fill="#52dca6" opacity="0.58"/><circle cx="465.3" cy="148.0" r="0.71" fill="#3a6fe0" opacity="0.74"/><circle cx="475.4" cy="88.9" r="0.76" fill="#3a6fe0" opacity="0.84"/><circle cx="335.4" cy="179.4" r="0.90" fill="#52dca6" opacity="0.66"/><circle cx="336.2" cy="194.6" r="0.85" fill="#52dca6" opacity="0.62"/><circle cx="379.8" cy="186.0" r="0.72" fill="#52dca6" opacity="0.56"/><circle cx="326.2" cy="154.7" r="0.57" fill="#52dca6" opacity="0.92"/><circle cx="349.3" cy="197.1" r="0.62" fill="#52dca6" opacity="0.89"/><circle cx="337.8" cy="175.3" r="0.70" fill="#52dca6" opacity="0.97"/><circle cx="407.3" cy="102.7" r="0.62" fill="#52dca6" opacity="0.59"/><circle cx="412.9" cy="202.2" r="0.79" fill="#3b82e6" opacity="0.63"/><circle cx="374.6" cy="190.5" r="0.91" fill="#52dca6" opacity="0.81"/><circle cx="392.6" cy="147.7" r="0.86" fill="#52dca6" opacity="0.91"/><circle cx="351.4" cy="192.2" r="0.82" fill="#52dca6" opacity="0.64"/><circle cx="368.2" cy="110.6" r="0.68" fill="#52dca6" opacity="0.66"/><circle cx="376.5" cy="83.2" r="0.65" fill="#52dca6" opacity="0.79"/><circle cx="347.8" cy="197.2" r="0.62" fill="#52dca6" opacity="0.57"/><circle cx="370.8" cy="98.6" r="0.48" fill="#52dca6" opacity="0.64"/><circle cx="343.7" cy="184.2" r="0.58" fill="#52dca6" opacity="0.59"/><circle cx="485.0" cy="76.4" r="0.86" fill="#4aa0e0" opacity="0.76"/><circle cx="332.1" cy="190.9" r="0.80" fill="#52dca6" opacity="0.81"/><circle cx="513.2" cy="168.2" r="0.85" fill="#3b82e6" opacity="0.66"/><circle cx="346.0" cy="103.7" r="0.86" fill="#52dca6" opacity="0.73"/><circle cx="464.9" cy="108.6" r="0.50" fill="#3b82e6" opacity="0.88"/><circle cx="470.6" cy="134.3" r="0.51" fill="#4aa0e0" opacity="0.91"/><circle cx="331.7" cy="157.9" r="0.49" fill="#52dca6" opacity="0.69"/><circle cx="408.2" cy="174.3" r="0.92" fill="#52dca6" opacity="0.75"/><circle cx="500.9" cy="156.5" r="0.71" fill="#3a6fe0" opacity="0.77"/><circle cx="353.0" cy="201.1" r="0.56" fill="#52dca6" opacity="0.67"/><circle cx="380.3" cy="193.4" r="0.54" fill="#52dca6" opacity="0.79"/><circle cx="349.7" cy="124.2" r="0.71" fill="#52dca6" opacity="0.66"/><circle cx="485.4" cy="84.6" r="0.87" fill="#3a6fe0" opacity="0.56"/><circle cx="343.1" cy="172.3" r="0.88" fill="#52dca6" opacity="0.87"/><circle cx="380.6" cy="199.3" r="0.86" fill="#52dca6" opacity="0.99"/><circle cx="372.1" cy="183.5" r="0.46" fill="#52dca6" opacity="0.80"/><circle cx="353.3" cy="198.2" r="0.89" fill="#52dca6" opacity="0.94"/><circle cx="353.9" cy="182.5" r="0.81" fill="#52dca6" opacity="0.88"/><circle cx="341.3" cy="156.0" r="0.47" fill="#52dca6" opacity="0.61"/><circle cx="346.4" cy="117.1" r="0.53" fill="#52dca6" opacity="0.62"/><circle cx="413.9" cy="81.6" r="0.62" fill="#3b82e6" opacity="0.93"/><circle cx="477.0" cy="160.7" r="0.70" fill="#3a6fe0" opacity="0.60"/><circle cx="331.9" cy="146.4" r="0.94" fill="#52dca6" opacity="0.73"/><circle cx="340.2" cy="92.1" r="0.61" fill="#52dca6" opacity="0.61"/><circle cx="327.9" cy="184.6" r="0.74" fill="#52dca6" opacity="0.65"/><circle cx="329.1" cy="91.7" r="0.69" fill="#52dca6" opacity="0.90"/><circle cx="482.2" cy="219.4" r="0.50" fill="#4aa0e0" opacity="0.76"/><circle cx="329.3" cy="168.4" r="0.46" fill="#52dca6" opacity="0.65"/><circle cx="350.5" cy="201.1" r="0.62" fill="#52dca6" opacity="0.66"/><circle cx="406.9" cy="94.0" r="0.81" fill="#52dca6" opacity="0.76"/><circle cx="325.2" cy="182.3" r="0.54" fill="#52dca6" opacity="0.82"/><circle cx="382.0" cy="146.6" r="0.94" fill="#52dca6" opacity="0.89"/><circle cx="450.4" cy="78.5" r="0.45" fill="#4aa0e0" opacity="0.59"/><circle cx="327.5" cy="196.8" r="0.59" fill="#52dca6" opacity="0.87"/><circle cx="391.1" cy="193.0" r="0.70" fill="#52dca6" opacity="0.72"/><circle cx="474.1" cy="241.7" r="0.75" fill="#3a6fe0" opacity="0.80"/><circle cx="349.0" cy="127.0" r="0.87" fill="#52dca6" opacity="0.71"/><circle cx="506.4" cy="191.2" r="0.62" fill="#3b82e6" opacity="0.74"/><circle cx="496.4" cy="103.4" r="0.55" fill="#4aa0e0" opacity="0.79"/><circle cx="360.5" cy="161.4" r="0.53" fill="#52dca6" opacity="0.96"/><circle cx="463.2" cy="161.7" r="0.79" fill="#3a6fe0" opacity="0.85"/><circle cx="381.1" cy="101.9" r="0.77" fill="#52dca6" opacity="0.86"/><circle cx="344.9" cy="187.0" r="0.54" fill="#52dca6" opacity="0.78"/><circle cx="351.3" cy="189.9" r="0.76" fill="#52dca6" opacity="0.61"/><circle cx="350.4" cy="179.8" r="0.84" fill="#52dca6" opacity="0.81"/><circle cx="333.5" cy="197.2" r="0.83" fill="#52dca6" opacity="0.71"/><circle cx="384.5" cy="188.7" r="0.50" fill="#52dca6" opacity="0.83"/><circle cx="340.8" cy="135.3" r="0.58" fill="#52dca6" opacity="0.93"/><circle cx="340.6" cy="97.0" r="0.90" fill="#52dca6" opacity="0.75"/><circle cx="460.5" cy="110.8" r="0.61" fill="#3b82e6" opacity="0.84"/><circle cx="409.6" cy="168.2" r="0.46" fill="#52dca6" opacity="0.87"/><circle cx="326.9" cy="96.2" r="0.82" fill="#52dca6" opacity="0.59"/><circle cx="347.1" cy="145.0" r="0.73" fill="#52dca6" opacity="0.55"/><circle cx="328.5" cy="161.5" r="0.78" fill="#52dca6" opacity="0.77"/><circle cx="409.4" cy="185.0" r="0.64" fill="#52dca6" opacity="0.91"/><circle cx="465.9" cy="84.4" r="0.57" fill="#4aa0e0" opacity="0.86"/><circle cx="366.9" cy="163.4" r="0.63" fill="#52dca6" opacity="0.78"/><circle cx="393.4" cy="156.2" r="0.89" fill="#52dca6" opacity="0.71"/><circle cx="336.3" cy="203.2" r="0.65" fill="#52dca6" opacity="0.79"/><circle cx="340.6" cy="185.6" r="0.84" fill="#52dca6" opacity="0.64"/><circle cx="428.9" cy="119.8" r="0.77" fill="#52dca6" opacity="0.77"/><circle cx="360.1" cy="188.5" r="0.45" fill="#52dca6" opacity="0.91"/><circle cx="349.1" cy="180.3" r="0.76" fill="#52dca6" opacity="0.61"/><circle cx="445.9" cy="211.7" r="0.67" fill="#3a6fe0" opacity="0.85"/><circle cx="499.3" cy="211.2" r="0.90" fill="#4aa0e0" opacity="0.69"/><circle cx="412.0" cy="101.4" r="0.53" fill="#3b82e6" opacity="0.81"/><circle cx="335.8" cy="98.1" r="0.94" fill="#52dca6" opacity="0.94"/><circle cx="380.1" cy="90.3" r="0.67" fill="#52dca6" opacity="0.93"/><circle cx="504.0" cy="109.4" r="0.77" fill="#3b82e6" opacity="0.72"/><circle cx="387.7" cy="200.9" r="0.53" fill="#52dca6" opacity="0.80"/><circle cx="444.8" cy="184.4" r="0.57" fill="#52dca6" opacity="0.59"/><circle cx="350.8" cy="111.4" r="0.60" fill="#52dca6" opacity="0.76"/><circle cx="364.3" cy="85.8" r="0.56" fill="#52dca6" opacity="0.55"/><circle cx="362.0" cy="167.3" r="0.95" fill="#52dca6" opacity="0.64"/><circle cx="328.9" cy="136.0" r="0.65" fill="#52dca6" opacity="0.69"/><circle cx="335.8" cy="186.9" r="0.67" fill="#52dca6" opacity="0.90"/><circle cx="459.9" cy="200.7" r="0.56" fill="#3a6fe0" opacity="0.57"/><circle cx="352.0" cy="140.2" r="0.70" fill="#52dca6" opacity="0.60"/><circle cx="429.5" cy="84.1" r="0.69" fill="#52dca6" opacity="0.62"/><circle cx="343.5" cy="173.8" r="0.77" fill="#52dca6" opacity="0.97"/><circle cx="334.5" cy="107.5" r="0.64" fill="#52dca6" opacity="0.87"/><circle cx="389.1" cy="104.9" r="0.49" fill="#52dca6" opacity="0.57"/><circle cx="353.4" cy="89.8" r="0.50" fill="#52dca6" opacity="0.84"/><circle cx="509.0" cy="219.2" r="0.54" fill="#4aa0e0" opacity="0.73"/><circle cx="383.0" cy="197.2" r="0.60" fill="#52dca6" opacity="0.99"/><circle cx="360.9" cy="155.4" r="0.61" fill="#52dca6" opacity="0.84"/><circle cx="456.9" cy="111.2" r="0.74" fill="#3b82e6" opacity="0.84"/><circle cx="349.6" cy="188.6" r="0.75" fill="#52dca6" opacity="0.71"/><circle cx="407.7" cy="105.1" r="0.87" fill="#52dca6" opacity="0.61"/><circle cx="334.2" cy="195.5" r="0.84" fill="#52dca6" opacity="0.96"/><circle cx="374.0" cy="140.5" r="0.65" fill="#52dca6" opacity="0.78"/><circle cx="461.2" cy="120.2" r="0.46" fill="#3b82e6" opacity="0.62"/><circle cx="344.3" cy="108.1" r="0.71" fill="#52dca6" opacity="0.61"/><circle cx="457.0" cy="97.8" r="0.73" fill="#3b82e6" opacity="0.99"/><circle cx="391.2" cy="89.1" r="0.51" fill="#52dca6" opacity="0.74"/><circle cx="401.7" cy="195.7" r="0.79" fill="#52dca6" opacity="0.68"/><circle cx="405.6" cy="100.4" r="0.73" fill="#52dca6" opacity="0.84"/><circle cx="391.7" cy="109.2" r="0.63" fill="#52dca6" opacity="0.69"/><circle cx="462.4" cy="106.8" r="0.59" fill="#4aa0e0" opacity="0.99"/><circle cx="492.4" cy="84.1" r="0.85" fill="#4aa0e0" opacity="0.61"/><circle cx="400.8" cy="117.7" r="0.58" fill="#52dca6" opacity="0.87"/><circle cx="356.4" cy="168.3" r="0.54" fill="#52dca6" opacity="0.84"/><circle cx="352.9" cy="185.3" r="0.71" fill="#52dca6" opacity="0.74"/><circle cx="486.3" cy="194.2" r="0.64" fill="#3b82e6" opacity="0.86"/><circle cx="436.0" cy="182.1" r="0.65" fill="#3b82e6" opacity="0.61"/><circle cx="384.0" cy="114.7" r="0.49" fill="#52dca6" opacity="0.86"/><circle cx="327.4" cy="188.3" r="0.84" fill="#52dca6" opacity="0.95"/><circle cx="373.9" cy="174.9" r="0.90" fill="#52dca6" opacity="0.63"/><circle cx="395.1" cy="159.1" r="0.72" fill="#52dca6" opacity="0.77"/><circle cx="469.8" cy="197.5" r="0.94" fill="#3a6fe0" opacity="0.68"/><circle cx="333.7" cy="180.0" r="0.56" fill="#52dca6" opacity="0.76"/><circle cx="368.0" cy="85.9" r="0.92" fill="#52dca6" opacity="0.73"/><circle cx="339.8" cy="185.1" r="0.78" fill="#52dca6" opacity="0.59"/><circle cx="375.7" cy="197.3" r="0.47" fill="#52dca6" opacity="0.93"/><circle cx="439.3" cy="183.2" r="0.72" fill="#3a6fe0" opacity="0.92"/><circle cx="331.9" cy="188.8" r="0.55" fill="#52dca6" opacity="0.87"/><circle cx="401.1" cy="174.3" r="0.91" fill="#52dca6" opacity="0.92"/><circle cx="393.2" cy="224.3" r="0.50" fill="#52dca6" opacity="0.70"/><circle cx="437.0" cy="186.1" r="0.67" fill="#4aa0e0" opacity="0.76"/><circle cx="442.9" cy="205.8" r="0.82" fill="#3b82e6" opacity="0.85"/><circle cx="431.3" cy="208.3" r="0.62" fill="#52dca6" opacity="0.88"/><circle cx="390.6" cy="161.9" r="0.48" fill="#52dca6" opacity="0.75"/><circle cx="340.1" cy="155.5" r="0.70" fill="#52dca6" opacity="0.59"/><circle cx="344.5" cy="193.3" r="0.62" fill="#52dca6" opacity="0.83"/><circle cx="379.3" cy="111.1" r="0.47" fill="#52dca6" opacity="0.90"/><circle cx="374.9" cy="137.3" r="0.87" fill="#52dca6" opacity="0.93"/><circle cx="465.0" cy="200.8" r="0.74" fill="#3b82e6" opacity="0.81"/><circle cx="325.2" cy="194.2" r="0.48" fill="#52dca6" opacity="0.79"/><circle cx="357.9" cy="103.9" r="0.82" fill="#52dca6" opacity="0.91"/><circle cx="410.3" cy="172.8" r="0.94" fill="#52dca6" opacity="0.89"/><circle cx="334.3" cy="99.5" r="0.91" fill="#52dca6" opacity="0.92"/><circle cx="481.3" cy="229.1" r="0.76" fill="#3a6fe0" opacity="0.82"/><circle cx="328.0" cy="159.4" r="0.65" fill="#52dca6" opacity="0.95"/><circle cx="451.5" cy="120.5" r="0.93" fill="#4aa0e0" opacity="0.83"/><circle cx="376.6" cy="130.1" r="0.92" fill="#52dca6" opacity="0.56"/><circle cx="356.0" cy="145.7" r="0.47" fill="#52dca6" opacity="0.84"/><circle cx="455.0" cy="110.2" r="0.94" fill="#4aa0e0" opacity="0.90"/><circle cx="414.5" cy="186.5" r="0.50" fill="#52dca6" opacity="0.75"/><circle cx="481.4" cy="196.0" r="0.93" fill="#4aa0e0" opacity="0.68"/><circle cx="353.5" cy="99.9" r="0.51" fill="#52dca6" opacity="0.93"/><circle cx="331.9" cy="132.4" r="0.61" fill="#52dca6" opacity="0.58"/><circle cx="369.3" cy="97.2" r="0.89" fill="#52dca6" opacity="0.93"/><circle cx="377.4" cy="125.6" r="0.51" fill="#52dca6" opacity="0.95"/><circle cx="331.9" cy="124.8" r="0.91" fill="#52dca6" opacity="0.67"/><circle cx="484.4" cy="221.8" r="0.94" fill="#3a6fe0" opacity="0.61"/><circle cx="337.2" cy="97.9" r="0.79" fill="#52dca6" opacity="0.75"/><circle cx="453.6" cy="190.5" r="0.53" fill="#52dca6" opacity="0.86"/><circle cx="330.6" cy="104.1" r="0.45" fill="#52dca6" opacity="0.70"/><circle cx="445.7" cy="127.8" r="0.50" fill="#3a6fe0" opacity="0.71"/><circle cx="477.9" cy="162.1" r="0.90" fill="#3b82e6" opacity="0.73"/><circle cx="331.9" cy="151.4" r="0.76" fill="#52dca6" opacity="0.60"/><circle cx="368.5" cy="207.3" r="0.62" fill="#52dca6" opacity="0.75"/><circle cx="366.9" cy="85.2" r="0.66" fill="#52dca6" opacity="0.68"/><circle cx="327.8" cy="110.9" r="0.89" fill="#52dca6" opacity="0.91"/><circle cx="350.8" cy="101.6" r="0.48" fill="#52dca6" opacity="0.75"/><circle cx="366.6" cy="102.5" r="0.80" fill="#52dca6" opacity="0.84"/><circle cx="387.3" cy="152.3" r="0.87" fill="#52dca6" opacity="0.98"/><circle cx="354.0" cy="132.1" r="0.49" fill="#52dca6" opacity="0.73"/><circle cx="333.6" cy="109.4" r="0.87" fill="#52dca6" opacity="0.68"/><circle cx="475.3" cy="171.0" r="0.52" fill="#4aa0e0" opacity="0.96"/><circle cx="418.3" cy="130.1" r="0.87" fill="#52dca6" opacity="0.92"/><circle cx="364.4" cy="138.5" r="0.68" fill="#52dca6" opacity="0.73"/><circle cx="342.2" cy="92.3" r="0.94" fill="#52dca6" opacity="0.65"/><circle cx="357.3" cy="162.6" r="0.92" fill="#52dca6" opacity="0.83"/><circle cx="362.9" cy="194.8" r="0.74" fill="#52dca6" opacity="0.75"/><circle cx="503.5" cy="213.5" r="0.57" fill="#3b82e6" opacity="0.83"/><circle cx="390.8" cy="193.1" r="0.95" fill="#52dca6" opacity="0.88"/><circle cx="322.7" cy="190.1" r="0.86" fill="#52dca6" opacity="0.58"/><circle cx="354.7" cy="194.9" r="0.60" fill="#52dca6" opacity="0.96"/><circle cx="375.7" cy="111.4" r="0.55" fill="#52dca6" opacity="0.59"/><circle cx="327.4" cy="188.0" r="0.52" fill="#52dca6" opacity="0.70"/><circle cx="373.2" cy="105.6" r="0.88" fill="#52dca6" opacity="0.73"/><circle cx="425.6" cy="131.1" r="0.53" fill="#52dca6" opacity="0.89"/><circle cx="503.1" cy="62.0" r="0.78" fill="#4aa0e0" opacity="0.73"/><circle cx="402.3" cy="231.0" r="0.72" fill="#52dca6" opacity="0.84"/><circle cx="329.9" cy="158.8" r="0.46" fill="#52dca6" opacity="0.75"/><circle cx="475.2" cy="54.7" r="0.74" fill="#3b82e6" opacity="0.65"/><circle cx="336.6" cy="182.0" r="0.63" fill="#52dca6" opacity="0.86"/><circle cx="497.4" cy="223.3" r="0.74" fill="#3b82e6" opacity="0.86"/><circle cx="408.9" cy="180.6" r="0.83" fill="#4aa0e0" opacity="0.77"/><circle cx="329.1" cy="184.4" r="0.45" fill="#52dca6" opacity="0.67"/><circle cx="421.2" cy="172.4" r="0.87" fill="#4aa0e0" opacity="0.68"/><circle cx="387.8" cy="194.0" r="0.65" fill="#52dca6" opacity="0.56"/><circle cx="354.3" cy="101.4" r="0.66" fill="#52dca6" opacity="0.68"/><circle cx="351.8" cy="87.9" r="0.83" fill="#52dca6" opacity="0.74"/><circle cx="405.1" cy="165.9" r="0.62" fill="#4aa0e0" opacity="0.85"/><circle cx="503.6" cy="67.1" r="0.85" fill="#3b82e6" opacity="0.67"/><circle cx="357.0" cy="88.4" r="0.71" fill="#52dca6" opacity="0.98"/><circle cx="329.6" cy="116.4" r="0.70" fill="#52dca6" opacity="0.74"/><circle cx="336.1" cy="185.7" r="0.71" fill="#52dca6" opacity="0.92"/><circle cx="322.7" cy="113.3" r="0.54" fill="#52dca6" opacity="0.77"/><circle cx="486.4" cy="217.8" r="0.91" fill="#3b82e6" opacity="0.95"/><circle cx="327.5" cy="184.3" r="0.87" fill="#52dca6" opacity="0.71"/><circle cx="383.0" cy="186.2" r="0.66" fill="#52dca6" opacity="0.99"/><circle cx="338.4" cy="104.0" r="0.51" fill="#52dca6" opacity="0.62"/><circle cx="394.6" cy="121.5" r="0.76" fill="#52dca6" opacity="0.94"/><circle cx="335.2" cy="204.7" r="0.92" fill="#52dca6" opacity="0.70"/><circle cx="371.1" cy="145.3" r="0.90" fill="#52dca6" opacity="0.64"/><circle cx="396.4" cy="145.7" r="0.84" fill="#52dca6" opacity="0.89"/><circle cx="416.0" cy="120.1" r="0.84" fill="#52dca6" opacity="0.88"/><circle cx="352.2" cy="133.5" r="0.47" fill="#52dca6" opacity="0.97"/><circle cx="366.3" cy="129.6" r="0.60" fill="#52dca6" opacity="0.80"/><circle cx="326.3" cy="150.4" r="0.79" fill="#52dca6" opacity="0.74"/><circle cx="516.8" cy="64.0" r="0.87" fill="#4aa0e0" opacity="0.57"/><circle cx="327.8" cy="147.2" r="0.78" fill="#52dca6" opacity="0.66"/><circle cx="481.9" cy="216.1" r="0.52" fill="#3a6fe0" opacity="1.00"/><circle cx="439.5" cy="166.7" r="0.58" fill="#4aa0e0" opacity="0.77"/><circle cx="365.1" cy="185.0" r="0.70" fill="#52dca6" opacity="0.99"/><circle cx="376.3" cy="128.2" r="0.65" fill="#52dca6" opacity="0.61"/><circle cx="450.9" cy="227.2" r="0.89" fill="#4aa0e0" opacity="0.74"/><circle cx="347.9" cy="202.2" r="0.73" fill="#52dca6" opacity="0.95"/><circle cx="372.2" cy="96.8" r="0.46" fill="#52dca6" opacity="0.70"/><circle cx="357.4" cy="112.2" r="0.91" fill="#52dca6" opacity="0.77"/><circle cx="473.9" cy="94.3" r="0.83" fill="#3a6fe0" opacity="0.83"/><circle cx="332.5" cy="181.6" r="0.47" fill="#52dca6" opacity="0.80"/><circle cx="335.5" cy="179.0" r="0.67" fill="#52dca6" opacity="0.60"/><circle cx="437.8" cy="182.3" r="0.91" fill="#3b82e6" opacity="0.84"/><circle cx="413.4" cy="133.1" r="0.61" fill="#3b82e6" opacity="0.83"/><circle cx="330.2" cy="200.1" r="0.52" fill="#52dca6" opacity="0.67"/><circle cx="347.4" cy="97.8" r="0.51" fill="#52dca6" opacity="0.77"/><circle cx="338.6" cy="192.3" r="0.53" fill="#52dca6" opacity="0.57"/><circle cx="436.4" cy="118.0" r="0.87" fill="#3b82e6" opacity="0.66"/><circle cx="343.2" cy="174.6" r="0.64" fill="#52dca6" opacity="0.66"/><circle cx="460.6" cy="61.4" r="0.81" fill="#4aa0e0" opacity="0.76"/><circle cx="342.5" cy="112.3" r="0.85" fill="#52dca6" opacity="0.85"/><circle cx="388.9" cy="174.5" r="0.50" fill="#52dca6" opacity="0.81"/><circle cx="370.5" cy="196.1" r="0.51" fill="#52dca6" opacity="0.65"/><circle cx="354.0" cy="187.7" r="0.86" fill="#52dca6" opacity="0.63"/><circle cx="428.0" cy="212.7" r="0.75" fill="#52dca6" opacity="0.60"/><circle cx="363.6" cy="90.7" r="0.47" fill="#52dca6" opacity="0.61"/><circle cx="399.2" cy="205.4" r="0.90" fill="#52dca6" opacity="0.78"/><circle cx="342.6" cy="143.3" r="0.53" fill="#52dca6" opacity="0.67"/><circle cx="376.1" cy="97.8" r="0.52" fill="#52dca6" opacity="0.65"/><circle cx="349.7" cy="202.9" r="0.69" fill="#52dca6" opacity="0.73"/><circle cx="452.1" cy="130.8" r="0.94" fill="#52dca6" opacity="0.79"/><circle cx="421.6" cy="104.2" r="0.95" fill="#3a6fe0" opacity="0.92"/><circle cx="385.2" cy="189.6" r="0.94" fill="#52dca6" opacity="0.90"/><circle cx="343.5" cy="90.8" r="0.93" fill="#52dca6" opacity="0.59"/><circle cx="330.6" cy="199.8" r="0.94" fill="#52dca6" opacity="0.92"/><circle cx="447.8" cy="64.3" r="0.78" fill="#4aa0e0" opacity="0.60"/><circle cx="330.9" cy="195.5" r="0.86" fill="#52dca6" opacity="0.81"/><circle cx="372.7" cy="207.3" r="0.62" fill="#52dca6" opacity="0.57"/><circle cx="507.0" cy="131.6" r="0.84" fill="#4aa0e0" opacity="0.90"/><circle cx="393.5" cy="111.7" r="0.88" fill="#52dca6" opacity="0.82"/><circle cx="429.7" cy="209.4" r="0.84" fill="#52dca6" opacity="0.59"/><circle cx="357.5" cy="95.6" r="0.58" fill="#52dca6" opacity="0.83"/><circle cx="478.6" cy="82.1" r="0.89" fill="#4aa0e0" opacity="0.60"/><circle cx="337.8" cy="201.4" r="0.73" fill="#52dca6" opacity="0.88"/><circle cx="479.5" cy="152.1" r="0.78" fill="#3b82e6" opacity="0.93"/><circle cx="331.3" cy="109.9" r="0.86" fill="#52dca6" opacity="0.94"/><circle cx="499.3" cy="149.0" r="0.53" fill="#4aa0e0" opacity="0.85"/><circle cx="356.6" cy="196.4" r="0.51" fill="#52dca6" opacity="0.72"/><circle cx="390.4" cy="142.2" r="0.49" fill="#52dca6" opacity="0.70"/><circle cx="499.9" cy="84.1" r="0.73" fill="#4aa0e0" opacity="0.83"/><circle cx="467.1" cy="76.2" r="0.61" fill="#3a6fe0" opacity="0.73"/><circle cx="398.8" cy="171.7" r="0.85" fill="#52dca6" opacity="0.95"/><circle cx="359.5" cy="205.8" r="0.64" fill="#52dca6" opacity="0.70"/><circle cx="338.4" cy="135.8" r="0.62" fill="#52dca6" opacity="0.69"/><circle cx="387.2" cy="165.7" r="0.80" fill="#52dca6" opacity="0.73"/><circle cx="472.0" cy="172.2" r="0.52" fill="#3a6fe0" opacity="0.58"/><circle cx="468.1" cy="175.5" r="0.47" fill="#3a6fe0" opacity="0.91"/><circle cx="384.8" cy="188.3" r="0.73" fill="#52dca6" opacity="0.59"/><circle cx="490.7" cy="208.0" r="0.76" fill="#4aa0e0" opacity="0.92"/><circle cx="328.3" cy="159.6" r="0.83" fill="#52dca6" opacity="0.97"/><circle cx="365.4" cy="142.6" r="0.88" fill="#52dca6" opacity="0.89"/><circle cx="409.4" cy="92.9" r="0.87" fill="#52dca6" opacity="0.65"/><circle cx="345.9" cy="138.9" r="0.47" fill="#52dca6" opacity="0.75"/><circle cx="331.6" cy="187.2" r="0.78" fill="#52dca6" opacity="0.70"/><circle cx="414.1" cy="79.9" r="0.52" fill="#4aa0e0" opacity="0.70"/><circle cx="434.5" cy="124.4" r="0.91" fill="#3b82e6" opacity="0.76"/><circle cx="328.0" cy="193.8" r="0.77" fill="#52dca6" opacity="0.75"/><circle cx="399.2" cy="167.2" r="0.72" fill="#52dca6" opacity="0.79"/><circle cx="390.8" cy="69.4" r="0.67" fill="#52dca6" opacity="0.74"/><circle cx="385.4" cy="122.6" r="0.78" fill="#52dca6" opacity="0.64"/><circle cx="344.5" cy="199.8" r="0.59" fill="#52dca6" opacity="0.56"/><circle cx="377.8" cy="182.5" r="0.81" fill="#52dca6" opacity="0.89"/><circle cx="397.9" cy="188.1" r="0.88" fill="#52dca6" opacity="0.73"/><circle cx="335.7" cy="187.8" r="0.70" fill="#52dca6" opacity="0.56"/><circle cx="443.6" cy="78.9" r="0.76" fill="#52dca6" opacity="0.82"/><circle cx="346.3" cy="180.1" r="0.83" fill="#52dca6" opacity="0.98"/><circle cx="474.2" cy="201.0" r="0.54" fill="#3b82e6" opacity="0.98"/><circle cx="404.2" cy="190.1" r="0.82" fill="#52dca6" opacity="0.99"/><circle cx="497.3" cy="172.9" r="0.58" fill="#4aa0e0" opacity="0.70"/><circle cx="397.4" cy="202.0" r="0.77" fill="#52dca6" opacity="0.58"/><circle cx="394.9" cy="180.7" r="0.91" fill="#52dca6" opacity="0.89"/><circle cx="362.6" cy="105.3" r="0.47" fill="#52dca6" opacity="0.58"/><circle cx="389.9" cy="191.5" r="0.62" fill="#52dca6" opacity="0.79"/><circle cx="356.4" cy="173.7" r="0.84" fill="#52dca6" opacity="0.93"/><circle cx="375.8" cy="163.0" r="0.85" fill="#52dca6" opacity="0.97"/><circle cx="360.0" cy="131.5" r="0.58" fill="#52dca6" opacity="0.83"/><circle cx="400.9" cy="140.6" r="0.72" fill="#52dca6" opacity="0.94"/><circle cx="332.2" cy="93.1" r="0.65" fill="#52dca6" opacity="0.93"/><circle cx="354.0" cy="174.2" r="0.72" fill="#52dca6" opacity="0.61"/><circle cx="368.0" cy="132.9" r="0.81" fill="#52dca6" opacity="0.99"/><circle cx="330.9" cy="102.1" r="0.58" fill="#52dca6" opacity="0.66"/><circle cx="321.0" cy="196.2" r="0.56" fill="#52dca6" opacity="0.65"/><circle cx="329.5" cy="188.1" r="0.95" fill="#52dca6" opacity="0.97"/><circle cx="450.4" cy="200.2" r="0.72" fill="#52dca6" opacity="0.86"/><circle cx="326.1" cy="103.8" r="0.57" fill="#52dca6" opacity="0.91"/><circle cx="475.6" cy="215.1" r="0.64" fill="#3a6fe0" opacity="0.61"/><circle cx="461.0" cy="89.7" r="0.90" fill="#3b82e6" opacity="1.00"/><circle cx="394.7" cy="203.4" r="0.82" fill="#52dca6" opacity="0.66"/><circle cx="431.5" cy="149.9" r="0.78" fill="#52dca6" opacity="0.94"/><circle cx="332.2" cy="128.3" r="0.60" fill="#52dca6" opacity="0.76"/><circle cx="432.3" cy="166.1" r="0.49" fill="#52dca6" opacity="0.57"/><circle cx="378.4" cy="195.4" r="0.55" fill="#52dca6" opacity="0.94"/><circle cx="373.8" cy="189.9" r="0.72" fill="#52dca6" opacity="0.67"/><circle cx="453.0" cy="92.0" r="0.48" fill="#4aa0e0" opacity="0.85"/><circle cx="324.9" cy="88.8" r="0.93" fill="#52dca6" opacity="0.99"/><circle cx="464.2" cy="117.6" r="0.91" fill="#3b82e6" opacity="0.88"/><circle cx="429.8" cy="156.0" r="0.68" fill="#4aa0e0" opacity="0.81"/><circle cx="449.3" cy="76.0" r="0.48" fill="#3b82e6" opacity="0.99"/><circle cx="483.7" cy="198.2" r="0.84" fill="#3b82e6" opacity="0.77"/><circle cx="473.5" cy="112.9" r="0.50" fill="#3a6fe0" opacity="0.93"/><circle cx="458.9" cy="147.5" r="0.79" fill="#3b82e6" opacity="0.82"/><circle cx="418.4" cy="144.7" r="0.94" fill="#3b82e6" opacity="0.90"/><circle cx="492.7" cy="146.4" r="0.54" fill="#3b82e6" opacity="1.00"/><circle cx="368.5" cy="184.2" r="0.70" fill="#52dca6" opacity="0.92"/><circle cx="339.7" cy="107.4" r="0.94" fill="#52dca6" opacity="0.64"/><circle cx="379.0" cy="98.0" r="0.62" fill="#52dca6" opacity="0.72"/><circle cx="347.7" cy="102.1" r="0.50" fill="#52dca6" opacity="0.79"/><circle cx="383.7" cy="189.3" r="0.47" fill="#52dca6" opacity="0.57"/><circle cx="338.0" cy="183.4" r="0.66" fill="#52dca6" opacity="0.66"/><circle cx="355.5" cy="184.2" r="0.95" fill="#52dca6" opacity="0.75"/><circle cx="491.7" cy="94.5" r="0.69" fill="#3b82e6" opacity="0.96"/><circle cx="396.4" cy="125.1" r="0.63" fill="#52dca6" opacity="0.55"/><circle cx="507.6" cy="71.5" r="0.82" fill="#3b82e6" opacity="0.84"/><circle cx="468.6" cy="209.5" r="0.64" fill="#3a6fe0" opacity="0.64"/><circle cx="327.8" cy="114.0" r="0.66" fill="#52dca6" opacity="0.71"/><circle cx="364.7" cy="154.0" r="0.70" fill="#52dca6" opacity="0.55"/><circle cx="348.1" cy="99.7" r="0.86" fill="#52dca6" opacity="0.95"/><circle cx="326.8" cy="107.2" r="0.61" fill="#52dca6" opacity="0.83"/><circle cx="417.7" cy="179.2" r="0.46" fill="#52dca6" opacity="0.93"/><circle cx="474.2" cy="142.0" r="0.67" fill="#3b82e6" opacity="0.60"/><circle cx="409.2" cy="139.2" r="0.59" fill="#52dca6" opacity="0.64"/><circle cx="371.7" cy="110.8" r="0.66" fill="#52dca6" opacity="0.74"/><circle cx="396.1" cy="123.2" r="0.78" fill="#52dca6" opacity="0.61"/><circle cx="444.1" cy="141.3" r="0.57" fill="#3b82e6" opacity="0.62"/><circle cx="324.2" cy="204.2" r="0.49" fill="#52dca6" opacity="0.65"/><circle cx="402.6" cy="97.1" r="0.73" fill="#52dca6" opacity="0.82"/><circle cx="331.1" cy="184.0" r="0.71" fill="#52dca6" opacity="0.70"/><circle cx="492.3" cy="216.1" r="0.94" fill="#4aa0e0" opacity="0.90"/><circle cx="391.2" cy="117.3" r="0.94" fill="#52dca6" opacity="0.89"/><circle cx="336.8" cy="101.9" r="0.84" fill="#52dca6" opacity="0.65"/><circle cx="426.0" cy="152.1" r="0.85" fill="#3a6fe0" opacity="0.67"/><circle cx="409.6" cy="197.2" r="0.46" fill="#52dca6" opacity="0.76"/><circle cx="390.5" cy="200.3" r="0.49" fill="#52dca6" opacity="0.63"/><circle cx="371.1" cy="204.9" r="0.64" fill="#52dca6" opacity="0.61"/><circle cx="315.9" cy="100.1" r="0.63" fill="#52dca6" opacity="0.69"/><circle cx="430.6" cy="94.3" r="0.55" fill="#52dca6" opacity="0.72"/><circle cx="357.1" cy="212.6" r="0.74" fill="#52dca6" opacity="0.98"/><circle cx="407.3" cy="79.2" r="0.93" fill="#52dca6" opacity="0.79"/><circle cx="409.3" cy="204.8" r="0.77" fill="#52dca6" opacity="0.68"/><circle cx="485.3" cy="172.5" r="0.69" fill="#3b82e6" opacity="0.63"/><circle cx="428.0" cy="184.1" r="0.70" fill="#3a6fe0" opacity="0.86"/><circle cx="353.9" cy="112.7" r="0.70" fill="#52dca6" opacity="0.65"/><circle cx="333.9" cy="140.7" r="0.91" fill="#52dca6" opacity="0.61"/><circle cx="461.8" cy="185.7" r="0.53" fill="#4aa0e0" opacity="0.77"/><circle cx="382.0" cy="160.5" r="0.81" fill="#52dca6" opacity="0.78"/><circle cx="415.7" cy="165.7" r="0.48" fill="#52dca6" opacity="0.94"/><circle cx="336.8" cy="195.4" r="0.74" fill="#52dca6" opacity="0.76"/><circle cx="384.3" cy="209.1" r="0.60" fill="#52dca6" opacity="0.93"/><circle cx="507.0" cy="53.7" r="0.58" fill="#3a6fe0" opacity="0.62"/><circle cx="450.9" cy="84.9" r="0.89" fill="#3b82e6" opacity="0.75"/><circle cx="326.2" cy="154.6" r="0.54" fill="#52dca6" opacity="0.68"/><circle cx="515.1" cy="86.2" r="0.66" fill="#3b82e6" opacity="0.97"/><circle cx="345.0" cy="101.3" r="0.49" fill="#52dca6" opacity="0.58"/><circle cx="369.7" cy="146.8" r="0.47" fill="#52dca6" opacity="0.78"/><circle cx="398.1" cy="204.9" r="0.61" fill="#52dca6" opacity="0.92"/><circle cx="428.5" cy="100.3" r="0.77" fill="#52dca6" opacity="0.99"/><circle cx="505.0" cy="134.3" r="0.93" fill="#3a6fe0" opacity="0.66"/><circle cx="384.5" cy="120.3" r="0.52" fill="#52dca6" opacity="0.90"/><circle cx="428.5" cy="92.9" r="0.88" fill="#3b82e6" opacity="0.60"/><circle cx="457.8" cy="182.8" r="0.75" fill="#52dca6" opacity="0.83"/><circle cx="444.5" cy="90.9" r="0.82" fill="#3b82e6" opacity="0.68"/><circle cx="433.2" cy="209.7" r="0.91" fill="#52dca6" opacity="0.58"/><circle cx="382.9" cy="199.8" r="0.64" fill="#52dca6" opacity="0.82"/><circle cx="379.9" cy="200.3" r="0.46" fill="#52dca6" opacity="0.62"/><circle cx="473.3" cy="226.0" r="0.91" fill="#3a6fe0" opacity="0.59"/><circle cx="333.5" cy="152.5" r="0.64" fill="#52dca6" opacity="0.92"/><circle cx="343.0" cy="110.4" r="0.79" fill="#52dca6" opacity="0.72"/><circle cx="347.2" cy="97.1" r="0.89" fill="#52dca6" opacity="0.68"/><circle cx="409.1" cy="208.4" r="0.56" fill="#52dca6" opacity="0.59"/><circle cx="378.0" cy="187.0" r="0.88" fill="#52dca6" opacity="0.69"/><circle cx="410.4" cy="152.2" r="0.46" fill="#52dca6" opacity="0.71"/><circle cx="339.9" cy="196.5" r="0.61" fill="#52dca6" opacity="0.98"/><circle cx="337.1" cy="191.5" r="0.57" fill="#52dca6" opacity="0.62"/><circle cx="362.1" cy="111.0" r="0.76" fill="#52dca6" opacity="0.57"/><circle cx="363.2" cy="102.8" r="0.62" fill="#52dca6" opacity="0.86"/><circle cx="331.6" cy="141.0" r="0.95" fill="#52dca6" opacity="0.96"/><circle cx="505.3" cy="144.8" r="0.62" fill="#3a6fe0" opacity="0.61"/><circle cx="472.6" cy="85.9" r="0.87" fill="#4aa0e0" opacity="0.90"/><circle cx="380.3" cy="95.6" r="0.83" fill="#52dca6" opacity="0.96"/><circle cx="479.8" cy="73.0" r="0.90" fill="#3b82e6" opacity="0.90"/><circle cx="334.5" cy="137.3" r="0.70" fill="#52dca6" opacity="0.59"/><circle cx="436.6" cy="241.3" r="0.72" fill="#3a6fe0" opacity="0.67"/><circle cx="352.9" cy="171.8" r="0.60" fill="#52dca6" opacity="0.79"/><circle cx="334.9" cy="198.6" r="0.83" fill="#52dca6" opacity="0.77"/><circle cx="334.6" cy="99.5" r="0.50" fill="#52dca6" opacity="0.62"/><circle cx="372.9" cy="185.0" r="0.49" fill="#52dca6" opacity="0.76"/><circle cx="419.3" cy="163.2" r="0.70" fill="#3a6fe0" opacity="0.72"/><circle cx="400.0" cy="100.8" r="0.95" fill="#52dca6" opacity="0.96"/><circle cx="423.2" cy="122.9" r="0.53" fill="#4aa0e0" opacity="0.99"/><circle cx="415.3" cy="198.1" r="0.58" fill="#3b82e6" opacity="0.73"/><circle cx="369.9" cy="202.7" r="0.69" fill="#52dca6" opacity="0.80"/><circle cx="481.1" cy="208.4" r="0.48" fill="#4aa0e0" opacity="0.85"/><circle cx="466.4" cy="82.4" r="0.90" fill="#4aa0e0" opacity="0.99"/><circle cx="346.5" cy="190.9" r="0.49" fill="#52dca6" opacity="0.78"/><circle cx="500.0" cy="62.1" r="0.81" fill="#3b82e6" opacity="0.82"/><circle cx="341.7" cy="92.2" r="0.94" fill="#52dca6" opacity="0.69"/><circle cx="363.2" cy="181.8" r="0.56" fill="#52dca6" opacity="0.90"/><circle cx="395.5" cy="175.6" r="0.54" fill="#52dca6" opacity="0.87"/><circle cx="385.9" cy="193.7" r="0.55" fill="#52dca6" opacity="0.69"/><circle cx="385.0" cy="148.6" r="0.63" fill="#52dca6" opacity="0.97"/><circle cx="332.2" cy="194.8" r="0.89" fill="#52dca6" opacity="0.99"/><circle cx="442.6" cy="77.3" r="0.82" fill="#52dca6" opacity="0.64"/><circle cx="379.8" cy="192.4" r="0.81" fill="#52dca6" opacity="0.81"/><circle cx="342.3" cy="106.3" r="0.56" fill="#52dca6" opacity="0.95"/><circle cx="397.0" cy="177.9" r="0.80" fill="#52dca6" opacity="1.00"/><circle cx="338.5" cy="190.1" r="0.47" fill="#52dca6" opacity="0.73"/><circle cx="489.2" cy="104.1" r="0.52" fill="#4aa0e0" opacity="0.67"/><circle cx="370.8" cy="179.9" r="0.65" fill="#52dca6" opacity="0.78"/><circle cx="352.5" cy="103.2" r="0.72" fill="#52dca6" opacity="0.71"/><circle cx="441.5" cy="203.5" r="0.91" fill="#3a6fe0" opacity="0.65"/><circle cx="399.9" cy="214.6" r="0.77" fill="#52dca6" opacity="0.70"/><circle cx="338.5" cy="186.5" r="0.94" fill="#52dca6" opacity="0.74"/><circle cx="346.7" cy="192.6" r="0.89" fill="#52dca6" opacity="0.89"/><circle cx="348.5" cy="126.1" r="0.68" fill="#52dca6" opacity="0.87"/><circle cx="440.5" cy="85.1" r="0.88" fill="#52dca6" opacity="0.89"/><circle cx="393.1" cy="166.8" r="0.92" fill="#52dca6" opacity="0.60"/><circle cx="328.8" cy="152.9" r="0.61" fill="#52dca6" opacity="1.00"/><circle cx="478.3" cy="185.4" r="0.92" fill="#3a6fe0" opacity="0.93"/><circle cx="337.7" cy="176.9" r="0.76" fill="#52dca6" opacity="0.83"/><circle cx="370.7" cy="196.1" r="0.59" fill="#52dca6" opacity="0.60"/><circle cx="465.0" cy="68.3" r="0.78" fill="#4aa0e0" opacity="0.57"/><circle cx="331.7" cy="143.0" r="0.48" fill="#52dca6" opacity="0.62"/><circle cx="493.1" cy="166.8" r="0.60" fill="#4aa0e0" opacity="0.91"/><circle cx="342.6" cy="104.1" r="0.80" fill="#52dca6" opacity="0.77"/><circle cx="320.8" cy="193.7" r="0.73" fill="#52dca6" opacity="0.74"/><circle cx="396.0" cy="201.3" r="0.62" fill="#52dca6" opacity="0.68"/><circle cx="347.5" cy="183.6" r="0.75" fill="#52dca6" opacity="0.80"/><circle cx="348.0" cy="109.5" r="0.73" fill="#52dca6" opacity="0.56"/><circle cx="332.0" cy="200.2" r="0.95" fill="#52dca6" opacity="0.85"/><circle cx="401.8" cy="196.8" r="0.88" fill="#52dca6" opacity="0.57"/><circle cx="460.7" cy="201.0" r="0.74" fill="#3b82e6" opacity="0.76"/><circle cx="324.1" cy="192.3" r="0.49" fill="#52dca6" opacity="0.74"/><circle cx="398.7" cy="195.5" r="0.70" fill="#52dca6" opacity="0.81"/><circle cx="396.5" cy="115.5" r="0.51" fill="#52dca6" opacity="0.62"/><circle cx="396.8" cy="195.7" r="0.74" fill="#52dca6" opacity="0.97"/><circle cx="342.1" cy="199.5" r="0.56" fill="#52dca6" opacity="0.99"/><circle cx="339.6" cy="98.5" r="0.47" fill="#52dca6" opacity="0.82"/><circle cx="325.3" cy="166.9" r="0.84" fill="#52dca6" opacity="0.56"/><circle cx="360.3" cy="186.8" r="0.54" fill="#52dca6" opacity="0.63"/><circle cx="432.8" cy="177.9" r="0.69" fill="#52dca6" opacity="0.72"/><circle cx="399.7" cy="190.8" r="0.75" fill="#52dca6" opacity="0.71"/><circle cx="379.5" cy="200.1" r="0.55" fill="#52dca6" opacity="0.82"/><circle cx="506.8" cy="192.4" r="0.65" fill="#3a6fe0" opacity="0.74"/><circle cx="334.7" cy="192.5" r="0.78" fill="#52dca6" opacity="0.77"/><circle cx="332.1" cy="188.4" r="0.93" fill="#52dca6" opacity="0.64"/><circle cx="330.5" cy="157.6" r="0.71" fill="#52dca6" opacity="0.57"/><circle cx="345.1" cy="104.8" r="0.90" fill="#52dca6" opacity="0.75"/><circle cx="341.6" cy="188.3" r="0.77" fill="#52dca6" opacity="0.59"/><circle cx="391.6" cy="216.3" r="0.90" fill="#52dca6" opacity="0.82"/><circle cx="341.4" cy="171.6" r="0.48" fill="#52dca6" opacity="0.74"/><circle cx="339.7" cy="195.6" r="0.82" fill="#52dca6" opacity="0.89"/><circle cx="345.4" cy="184.8" r="0.72" fill="#52dca6" opacity="0.85"/><circle cx="338.5" cy="102.3" r="0.87" fill="#52dca6" opacity="0.99"/><circle cx="362.9" cy="148.5" r="0.55" fill="#52dca6" opacity="0.57"/><circle cx="449.0" cy="119.0" r="0.63" fill="#52dca6" opacity="0.59"/><circle cx="374.8" cy="210.7" r="0.93" fill="#52dca6" opacity="0.93"/><circle cx="346.4" cy="181.2" r="0.71" fill="#52dca6" opacity="0.63"/><circle cx="355.4" cy="198.6" r="0.61" fill="#52dca6" opacity="0.90"/><circle cx="400.8" cy="140.7" r="0.70" fill="#52dca6" opacity="0.83"/><circle cx="342.5" cy="134.6" r="0.74" fill="#52dca6" opacity="0.61"/><circle cx="352.0" cy="189.7" r="0.72" fill="#52dca6" opacity="0.87"/><circle cx="350.3" cy="152.9" r="0.49" fill="#52dca6" opacity="0.78"/><circle cx="343.4" cy="101.4" r="0.57" fill="#52dca6" opacity="0.95"/><circle cx="367.1" cy="91.1" r="0.73" fill="#52dca6" opacity="0.55"/><circle cx="490.7" cy="192.3" r="0.69" fill="#3a6fe0" opacity="0.89"/><circle cx="381.4" cy="95.0" r="0.70" fill="#52dca6" opacity="0.61"/><circle cx="351.1" cy="111.8" r="0.85" fill="#52dca6" opacity="0.67"/><circle cx="325.3" cy="188.7" r="0.92" fill="#52dca6" opacity="0.96"/><circle cx="499.8" cy="214.3" r="0.76" fill="#3a6fe0" opacity="0.78"/><circle cx="398.2" cy="94.4" r="0.62" fill="#52dca6" opacity="0.67"/><circle cx="328.3" cy="186.1" r="0.91" fill="#52dca6" opacity="0.68"/><circle cx="372.2" cy="105.4" r="0.68" fill="#52dca6" opacity="0.62"/><circle cx="347.4" cy="98.8" r="0.71" fill="#52dca6" opacity="0.75"/><circle cx="383.6" cy="65.5" r="0.46" fill="#52dca6" opacity="0.59"/><circle cx="433.3" cy="156.3" r="0.79" fill="#4aa0e0" opacity="0.64"/><circle cx="429.0" cy="113.7" r="0.74" fill="#3b82e6" opacity="0.86"/><circle cx="360.6" cy="161.5" r="0.73" fill="#52dca6" opacity="0.61"/><circle cx="343.6" cy="106.0" r="0.67" fill="#52dca6" opacity="0.61"/><circle cx="485.2" cy="194.3" r="0.83" fill="#3a6fe0" opacity="0.81"/><circle cx="323.4" cy="187.9" r="0.60" fill="#52dca6" opacity="1.00"/><circle cx="426.6" cy="91.5" r="0.54" fill="#3b82e6" opacity="1.00"/><circle cx="424.8" cy="92.2" r="0.84" fill="#4aa0e0" opacity="0.85"/><circle cx="325.7" cy="191.0" r="0.65" fill="#52dca6" opacity="0.76"/><circle cx="383.5" cy="83.7" r="0.59" fill="#52dca6" opacity="0.63"/><circle cx="339.1" cy="91.9" r="0.63" fill="#52dca6" opacity="0.96"/><circle cx="487.8" cy="79.4" r="0.87" fill="#3b82e6" opacity="0.65"/><circle cx="501.4" cy="173.6" r="0.86" fill="#3b82e6" opacity="0.78"/><circle cx="494.5" cy="195.2" r="0.47" fill="#4aa0e0" opacity="0.91"/><circle cx="464.1" cy="126.1" r="0.69" fill="#3b82e6" opacity="0.60"/><circle cx="367.7" cy="174.3" r="0.74" fill="#52dca6" opacity="0.74"/><circle cx="453.0" cy="181.7" r="0.93" fill="#52dca6" opacity="0.72"/><circle cx="347.1" cy="84.2" r="0.75" fill="#52dca6" opacity="0.88"/><circle cx="395.0" cy="166.6" r="0.68" fill="#52dca6" opacity="0.73"/><circle cx="421.4" cy="187.4" r="0.74" fill="#4aa0e0" opacity="0.76"/><circle cx="382.9" cy="168.0" r="0.84" fill="#52dca6" opacity="0.86"/><circle cx="332.8" cy="197.7" r="0.70" fill="#52dca6" opacity="0.68"/><circle cx="511.8" cy="177.9" r="0.53" fill="#3a6fe0" opacity="0.83"/><circle cx="493.0" cy="207.9" r="0.80" fill="#3a6fe0" opacity="0.76"/><circle cx="401.3" cy="159.1" r="0.66" fill="#52dca6" opacity="0.73"/><circle cx="378.6" cy="122.4" r="0.48" fill="#52dca6" opacity="0.69"/><circle cx="483.9" cy="111.9" r="0.66" fill="#4aa0e0" opacity="0.66"/><circle cx="424.9" cy="155.5" r="0.90" fill="#3a6fe0" opacity="0.66"/><circle cx="378.3" cy="102.9" r="0.56" fill="#52dca6" opacity="0.59"/><circle cx="467.3" cy="173.3" r="0.49" fill="#4aa0e0" opacity="0.99"/><circle cx="443.9" cy="64.3" r="0.47" fill="#52dca6" opacity="0.80"/><circle cx="331.8" cy="158.0" r="0.84" fill="#52dca6" opacity="0.68"/><circle cx="505.4" cy="212.7" r="0.50" fill="#3a6fe0" opacity="0.90"/><circle cx="395.1" cy="86.9" r="0.50" fill="#52dca6" opacity="0.88"/><circle cx="386.6" cy="91.2" r="0.56" fill="#52dca6" opacity="0.93"/><circle cx="434.2" cy="117.5" r="0.58" fill="#52dca6" opacity="0.89"/><circle cx="432.2" cy="82.9" r="0.68" fill="#4aa0e0" opacity="0.62"/><circle cx="444.7" cy="74.8" r="0.94" fill="#52dca6" opacity="0.88"/><circle cx="389.9" cy="99.8" r="0.70" fill="#52dca6" opacity="0.64"/><circle cx="466.2" cy="162.1" r="0.79" fill="#52dca6" opacity="0.65"/><circle cx="390.6" cy="104.8" r="0.90" fill="#52dca6" opacity="0.75"/><circle cx="486.0" cy="60.7" r="0.47" fill="#3b82e6" opacity="0.63"/><circle cx="466.3" cy="210.1" r="0.83" fill="#4aa0e0" opacity="0.61"/><circle cx="505.9" cy="66.7" r="0.58" fill="#3b82e6" opacity="0.90"/><circle cx="437.2" cy="106.9" r="0.65" fill="#52dca6" opacity="0.98"/><circle cx="363.5" cy="113.7" r="0.90" fill="#52dca6" opacity="0.68"/><circle cx="442.6" cy="177.5" r="0.77" fill="#3b82e6" opacity="0.89"/><circle cx="385.0" cy="94.8" r="0.89" fill="#52dca6" opacity="0.61"/><circle cx="362.3" cy="191.0" r="0.82" fill="#52dca6" opacity="0.90"/><circle cx="332.8" cy="152.6" r="0.54" fill="#52dca6" opacity="1.00"/><circle cx="398.4" cy="204.4" r="0.55" fill="#52dca6" opacity="0.64"/><circle cx="321.9" cy="139.7" r="0.85" fill="#52dca6" opacity="0.82"/><circle cx="325.1" cy="102.1" r="0.65" fill="#52dca6" opacity="0.66"/><circle cx="391.5" cy="95.7" r="0.68" fill="#52dca6" opacity="0.87"/><circle cx="350.2" cy="190.4" r="0.86" fill="#52dca6" opacity="0.61"/><circle cx="334.8" cy="97.4" r="0.65" fill="#52dca6" opacity="0.56"/><circle cx="329.0" cy="101.7" r="0.73" fill="#52dca6" opacity="0.98"/><circle cx="355.4" cy="146.2" r="0.94" fill="#52dca6" opacity="0.59"/><circle cx="371.8" cy="95.2" r="0.75" fill="#52dca6" opacity="0.93"/><circle cx="331.2" cy="118.9" r="0.61" fill="#52dca6" opacity="0.55"/><circle cx="323.2" cy="196.0" r="0.94" fill="#52dca6" opacity="0.71"/><circle cx="343.5" cy="163.0" r="0.90" fill="#52dca6" opacity="0.98"/><circle cx="494.8" cy="188.8" r="0.91" fill="#3b82e6" opacity="0.77"/><circle cx="387.1" cy="153.8" r="0.91" fill="#52dca6" opacity="0.94"/><circle cx="394.1" cy="101.4" r="0.88" fill="#52dca6" opacity="0.73"/><circle cx="497.4" cy="123.8" r="0.63" fill="#4aa0e0" opacity="0.98"/><circle cx="493.0" cy="79.8" r="0.62" fill="#3a6fe0" opacity="0.89"/><circle cx="368.5" cy="105.2" r="0.74" fill="#52dca6" opacity="0.85"/><circle cx="341.5" cy="135.7" r="0.88" fill="#52dca6" opacity="0.71"/><circle cx="459.8" cy="117.3" r="0.91" fill="#3a6fe0" opacity="0.56"/><circle cx="427.6" cy="186.7" r="0.63" fill="#52dca6" opacity="0.79"/><circle cx="361.4" cy="149.4" r="0.86" fill="#52dca6" opacity="0.91"/><circle cx="373.8" cy="100.6" r="0.56" fill="#52dca6" opacity="0.56"/><circle cx="371.3" cy="165.9" r="0.65" fill="#52dca6" opacity="0.77"/><circle cx="332.1" cy="97.2" r="0.89" fill="#52dca6" opacity="0.57"/><circle cx="322.4" cy="110.9" r="0.58" fill="#52dca6" opacity="0.91"/><circle cx="357.9" cy="103.2" r="0.60" fill="#52dca6" opacity="0.93"/><circle cx="327.0" cy="123.9" r="0.85" fill="#52dca6" opacity="0.57"/><circle cx="382.2" cy="107.3" r="0.82" fill="#52dca6" opacity="0.81"/><circle cx="333.4" cy="155.2" r="0.83" fill="#52dca6" opacity="0.76"/><circle cx="504.4" cy="82.4" r="0.60" fill="#3b82e6" opacity="0.76"/><circle cx="498.2" cy="72.6" r="0.92" fill="#4aa0e0" opacity="0.55"/><circle cx="483.4" cy="106.6" r="0.87" fill="#3b82e6" opacity="0.85"/><circle cx="494.4" cy="124.1" r="0.62" fill="#3a6fe0" opacity="0.67"/><circle cx="350.1" cy="100.0" r="0.80" fill="#52dca6" opacity="0.78"/><circle cx="348.5" cy="109.2" r="0.73" fill="#52dca6" opacity="0.68"/><circle cx="381.6" cy="193.7" r="0.62" fill="#52dca6" opacity="0.71"/><circle cx="422.5" cy="74.0" r="0.63" fill="#3b82e6" opacity="0.90"/><circle cx="475.8" cy="120.8" r="0.54" fill="#3b82e6" opacity="0.67"/><circle cx="334.0" cy="151.3" r="0.77" fill="#52dca6" opacity="0.87"/><circle cx="496.4" cy="151.4" r="0.64" fill="#4aa0e0" opacity="0.79"/><circle cx="389.8" cy="198.7" r="0.81" fill="#52dca6" opacity="0.86"/><circle cx="367.0" cy="101.1" r="0.46" fill="#52dca6" opacity="0.80"/><circle cx="390.3" cy="116.4" r="0.47" fill="#52dca6" opacity="0.98"/><circle cx="485.1" cy="213.3" r="0.57" fill="#4aa0e0" opacity="0.91"/><circle cx="456.5" cy="224.9" r="0.51" fill="#52dca6" opacity="0.67"/><circle cx="377.2" cy="147.1" r="0.48" fill="#52dca6" opacity="0.65"/><circle cx="409.6" cy="119.7" r="0.75" fill="#4aa0e0" opacity="0.88"/><circle cx="359.5" cy="169.9" r="0.71" fill="#52dca6" opacity="0.77"/><circle cx="464.6" cy="215.8" r="0.69" fill="#4aa0e0" opacity="0.70"/><circle cx="345.6" cy="155.1" r="0.58" fill="#52dca6" opacity="0.84"/><circle cx="458.6" cy="172.1" r="0.46" fill="#3a6fe0" opacity="0.66"/><circle cx="355.3" cy="186.5" r="0.59" fill="#52dca6" opacity="0.80"/><circle cx="417.7" cy="193.2" r="0.78" fill="#52dca6" opacity="0.77"/><circle cx="448.1" cy="138.8" r="0.78" fill="#52dca6" opacity="0.55"/><circle cx="456.2" cy="206.1" r="0.51" fill="#3a6fe0" opacity="0.76"/><circle cx="339.4" cy="197.7" r="0.76" fill="#52dca6" opacity="0.76"/><circle cx="336.4" cy="110.8" r="0.65" fill="#52dca6" opacity="0.71"/><circle cx="353.9" cy="191.9" r="0.71" fill="#52dca6" opacity="1.00"/><circle cx="428.8" cy="198.4" r="0.57" fill="#52dca6" opacity="0.76"/><circle cx="430.0" cy="190.5" r="0.76" fill="#3a6fe0" opacity="0.95"/><circle cx="480.2" cy="167.0" r="0.47" fill="#4aa0e0" opacity="0.94"/><circle cx="438.2" cy="101.4" r="0.45" fill="#3a6fe0" opacity="0.88"/><circle cx="509.0" cy="66.6" r="0.63" fill="#3a6fe0" opacity="0.65"/><circle cx="507.0" cy="95.1" r="0.53" fill="#4aa0e0" opacity="0.93"/><circle cx="345.4" cy="156.9" r="0.87" fill="#52dca6" opacity="0.71"/><circle cx="364.1" cy="140.9" r="0.81" fill="#52dca6" opacity="0.98"/><circle cx="335.7" cy="160.8" r="0.53" fill="#52dca6" opacity="0.57"/><circle cx="375.0" cy="181.9" r="0.45" fill="#52dca6" opacity="0.91"/><circle cx="358.4" cy="186.0" r="0.79" fill="#52dca6" opacity="0.89"/><circle cx="332.4" cy="194.1" r="0.79" fill="#52dca6" opacity="0.95"/><circle cx="377.9" cy="188.9" r="0.86" fill="#52dca6" opacity="0.55"/><circle cx="427.6" cy="136.3" r="0.74" fill="#4aa0e0" opacity="0.89"/><circle cx="338.4" cy="145.7" r="0.56" fill="#52dca6" opacity="0.71"/><circle cx="372.9" cy="196.1" r="0.55" fill="#52dca6" opacity="0.80"/><circle cx="340.4" cy="181.5" r="0.94" fill="#52dca6" opacity="0.90"/><circle cx="450.7" cy="100.7" r="0.57" fill="#3b82e6" opacity="0.57"/><circle cx="409.7" cy="74.5" r="0.75" fill="#52dca6" opacity="0.64"/><circle cx="468.5" cy="112.2" r="0.59" fill="#3b82e6" opacity="0.55"/><circle cx="474.3" cy="141.7" r="0.64" fill="#4aa0e0" opacity="0.99"/><circle cx="364.0" cy="170.8" r="0.66" fill="#52dca6" opacity="0.71"/><circle cx="349.6" cy="115.0" r="0.94" fill="#52dca6" opacity="0.91"/><circle cx="394.3" cy="134.1" r="0.89" fill="#52dca6" opacity="0.72"/><circle cx="385.5" cy="166.6" r="0.77" fill="#52dca6" opacity="0.75"/><circle cx="414.9" cy="196.9" r="0.47" fill="#3b82e6" opacity="0.57"/><circle cx="422.2" cy="97.5" r="0.77" fill="#52dca6" opacity="0.64"/><circle cx="409.3" cy="205.5" r="0.83" fill="#52dca6" opacity="0.85"/><circle cx="365.8" cy="190.6" r="0.63" fill="#52dca6" opacity="0.66"/><circle cx="372.6" cy="122.3" r="0.95" fill="#52dca6" opacity="0.90"/><circle cx="463.2" cy="91.1" r="0.47" fill="#3b82e6" opacity="0.60"/><circle cx="336.0" cy="101.1" r="0.59" fill="#52dca6" opacity="0.72"/><circle cx="410.1" cy="115.4" r="0.74" fill="#52dca6" opacity="0.88"/><circle cx="341.2" cy="111.0" r="0.91" fill="#52dca6" opacity="0.86"/><circle cx="334.8" cy="108.5" r="0.63" fill="#52dca6" opacity="0.94"/><circle cx="485.6" cy="167.9" r="0.70" fill="#4aa0e0" opacity="0.97"/><circle cx="518.0" cy="118.1" r="0.79" fill="#4aa0e0" opacity="0.98"/><circle cx="353.6" cy="108.4" r="0.63" fill="#52dca6" opacity="0.91"/><circle cx="334.7" cy="191.7" r="0.84" fill="#52dca6" opacity="0.60"/><circle cx="385.1" cy="211.0" r="0.56" fill="#52dca6" opacity="0.65"/><circle cx="347.3" cy="182.1" r="0.85" fill="#52dca6" opacity="0.73"/><circle cx="378.6" cy="172.3" r="0.50" fill="#52dca6" opacity="0.73"/><circle cx="341.9" cy="184.3" r="0.48" fill="#52dca6" opacity="0.86"/><circle cx="390.2" cy="115.6" r="0.58" fill="#52dca6" opacity="0.66"/><circle cx="416.3" cy="168.2" r="0.70" fill="#52dca6" opacity="0.71"/><circle cx="322.3" cy="102.9" r="0.50" fill="#52dca6" opacity="0.86"/><circle cx="380.6" cy="128.7" r="0.89" fill="#52dca6" opacity="0.69"/><circle cx="387.5" cy="136.7" r="0.80" fill="#52dca6" opacity="0.92"/><circle cx="339.6" cy="190.8" r="0.46" fill="#52dca6" opacity="0.92"/><circle cx="380.6" cy="213.7" r="0.82" fill="#52dca6" opacity="0.88"/><circle cx="412.1" cy="94.1" r="0.53" fill="#52dca6" opacity="0.84"/><circle cx="344.7" cy="107.0" r="0.72" fill="#52dca6" opacity="0.75"/><circle cx="384.4" cy="102.4" r="0.50" fill="#52dca6" opacity="0.58"/><circle cx="333.0" cy="193.6" r="0.53" fill="#52dca6" opacity="0.88"/><circle cx="474.8" cy="162.5" r="0.52" fill="#3b82e6" opacity="0.93"/><circle cx="437.2" cy="184.2" r="0.90" fill="#3b82e6" opacity="0.93"/><circle cx="363.5" cy="191.2" r="0.58" fill="#52dca6" opacity="0.56"/><circle cx="347.7" cy="122.8" r="0.63" fill="#52dca6" opacity="0.99"/><circle cx="424.5" cy="199.7" r="0.92" fill="#52dca6" opacity="0.74"/><circle cx="504.3" cy="162.6" r="0.79" fill="#3b82e6" opacity="0.61"/><circle cx="323.7" cy="118.5" r="0.61" fill="#52dca6" opacity="0.68"/><circle cx="338.2" cy="104.7" r="0.67" fill="#52dca6" opacity="0.96"/><circle cx="464.7" cy="163.1" r="0.48" fill="#3a6fe0" opacity="0.79"/><circle cx="335.1" cy="138.0" r="0.82" fill="#52dca6" opacity="0.74"/><circle cx="332.2" cy="159.2" r="0.90" fill="#52dca6" opacity="0.70"/><circle cx="324.4" cy="179.4" r="0.85" fill="#52dca6" opacity="0.92"/><circle cx="412.4" cy="137.7" r="0.61" fill="#3b82e6" opacity="0.94"/><circle cx="336.8" cy="183.3" r="0.75" fill="#52dca6" opacity="0.76"/><circle cx="332.3" cy="174.4" r="0.91" fill="#52dca6" opacity="0.68"/><circle cx="330.7" cy="141.5" r="0.47" fill="#52dca6" opacity="0.74"/><circle cx="338.3" cy="106.0" r="0.65" fill="#52dca6" opacity="0.92"/><circle cx="327.9" cy="190.0" r="0.94" fill="#52dca6" opacity="0.95"/><circle cx="398.6" cy="110.5" r="0.63" fill="#52dca6" opacity="0.89"/><circle cx="378.9" cy="157.4" r="0.78" fill="#52dca6" opacity="0.87"/><circle cx="465.3" cy="230.0" r="0.80" fill="#3a6fe0" opacity="0.59"/><circle cx="361.2" cy="93.0" r="0.68" fill="#52dca6" opacity="0.61"/><circle cx="386.6" cy="113.1" r="0.92" fill="#52dca6" opacity="0.60"/><circle cx="410.6" cy="187.2" r="0.83" fill="#4aa0e0" opacity="0.83"/><circle cx="371.5" cy="128.4" r="0.64" fill="#52dca6" opacity="0.94"/><circle cx="392.7" cy="141.4" r="0.92" fill="#52dca6" opacity="0.83"/><circle cx="448.2" cy="178.8" r="0.90" fill="#52dca6" opacity="0.73"/><circle cx="355.6" cy="98.7" r="0.62" fill="#52dca6" opacity="1.00"/><circle cx="391.1" cy="169.0" r="0.85" fill="#52dca6" opacity="0.82"/><circle cx="424.2" cy="152.2" r="0.65" fill="#3a6fe0" opacity="0.80"/><circle cx="408.1" cy="204.3" r="0.82" fill="#52dca6" opacity="0.90"/><circle cx="89.0" cy="139.1" r="0.63" fill="#45c9b0" opacity="0.86"/><circle cx="106.8" cy="160.4" r="0.71" fill="#3f8ee0" opacity="0.90"/><circle cx="137.4" cy="151.6" r="0.63" fill="#3f8ee0" opacity="0.66"/><circle cx="101.8" cy="142.3" r="0.70" fill="#3f8ee0" opacity="0.56"/><circle cx="96.5" cy="124.3" r="0.61" fill="#3f8ee0" opacity="0.48"/><circle cx="99.0" cy="124.8" r="0.68" fill="#3f8ee0" opacity="0.77"/><circle cx="114.9" cy="144.5" r="0.74" fill="#3f8ee0" opacity="0.80"/><circle cx="89.0" cy="180.2" r="0.56" fill="#45c9b0" opacity="0.88"/><circle cx="131.5" cy="130.6" r="0.59" fill="#3f8ee0" opacity="0.63"/><circle cx="51.8" cy="133.9" r="0.61" fill="#45c9b0" opacity="0.85"/><circle cx="102.0" cy="165.8" r="0.47" fill="#3f8ee0" opacity="0.49"/><circle cx="92.8" cy="152.5" r="0.68" fill="#3f8ee0" opacity="0.71"/><circle cx="55.3" cy="164.3" r="0.67" fill="#45c9b0" opacity="0.74"/><circle cx="116.5" cy="154.9" r="0.41" fill="#3f8ee0" opacity="0.48"/><circle cx="103.9" cy="141.4" r="0.70" fill="#3f8ee0" opacity="0.59"/><circle cx="68.5" cy="121.1" r="0.81" fill="#45c9b0" opacity="0.88"/><circle cx="122.6" cy="144.8" r="0.89" fill="#3f8ee0" opacity="0.78"/><circle cx="90.6" cy="161.2" r="0.66" fill="#3f8ee0" opacity="0.82"/><circle cx="142.9" cy="166.4" r="0.74" fill="#3f8ee0" opacity="0.70"/><circle cx="72.1" cy="156.1" r="0.60" fill="#45c9b0" opacity="0.76"/><circle cx="53.5" cy="156.4" r="0.84" fill="#45c9b0" opacity="0.44"/><circle cx="161.2" cy="152.2" r="0.50" fill="#3f8ee0" opacity="0.81"/><circle cx="78.5" cy="154.0" r="0.41" fill="#45c9b0" opacity="0.61"/><circle cx="87.4" cy="145.1" r="0.41" fill="#45c9b0" opacity="0.54"/><circle cx="129.2" cy="131.0" r="0.53" fill="#3f8ee0" opacity="0.60"/><circle cx="56.9" cy="159.8" r="0.54" fill="#45c9b0" opacity="0.58"/><circle cx="74.4" cy="147.7" r="0.61" fill="#45c9b0" opacity="0.77"/><circle cx="85.5" cy="147.9" r="0.57" fill="#45c9b0" opacity="0.69"/><circle cx="98.2" cy="162.8" r="0.68" fill="#3f8ee0" opacity="0.58"/><circle cx="118.4" cy="175.9" r="0.43" fill="#3f8ee0" opacity="0.85"/><circle cx="124.4" cy="158.7" r="0.67" fill="#3f8ee0" opacity="0.60"/><circle cx="54.2" cy="125.9" r="0.56" fill="#45c9b0" opacity="0.43"/><circle cx="112.8" cy="177.3" r="0.70" fill="#3f8ee0" opacity="0.78"/><circle cx="76.0" cy="156.5" r="0.75" fill="#45c9b0" opacity="0.68"/><circle cx="109.2" cy="143.4" r="0.57" fill="#3f8ee0" opacity="0.75"/><circle cx="121.2" cy="138.7" r="0.79" fill="#3f8ee0" opacity="0.45"/><circle cx="79.0" cy="137.7" r="0.75" fill="#45c9b0" opacity="0.55"/><circle cx="103.6" cy="159.0" r="0.76" fill="#3f8ee0" opacity="0.76"/><circle cx="119.7" cy="139.9" r="0.43" fill="#3f8ee0" opacity="0.80"/><circle cx="93.2" cy="171.8" r="0.64" fill="#3f8ee0" opacity="0.62"/><circle cx="114.7" cy="150.1" r="0.77" fill="#3f8ee0" opacity="0.63"/><circle cx="132.4" cy="129.6" r="0.67" fill="#3f8ee0" opacity="0.89"/><circle cx="123.3" cy="148.2" r="0.67" fill="#3f8ee0" opacity="0.43"/><circle cx="106.0" cy="141.8" r="0.69" fill="#3f8ee0" opacity="0.54"/><circle cx="71.9" cy="159.4" r="0.54" fill="#45c9b0" opacity="0.49"/><circle cx="75.5" cy="129.7" r="0.44" fill="#45c9b0" opacity="0.89"/><circle cx="110.6" cy="154.6" r="0.54" fill="#3f8ee0" opacity="0.58"/><circle cx="124.4" cy="159.6" r="0.71" fill="#3f8ee0" opacity="0.53"/><circle cx="76.3" cy="160.8" r="0.84" fill="#45c9b0" opacity="0.79"/><circle cx="84.5" cy="148.7" r="0.58" fill="#45c9b0" opacity="0.81"/><circle cx="69.5" cy="154.0" r="0.72" fill="#45c9b0" opacity="0.42"/><circle cx="69.5" cy="129.7" r="0.46" fill="#45c9b0" opacity="0.61"/><circle cx="108.5" cy="138.8" r="0.67" fill="#3f8ee0" opacity="0.57"/><circle cx="68.6" cy="143.1" r="0.57" fill="#45c9b0" opacity="0.86"/><circle cx="59.0" cy="96.8" r="0.57" fill="#45c9b0" opacity="0.63"/><circle cx="57.7" cy="170.5" r="0.58" fill="#45c9b0" opacity="0.74"/><circle cx="110.5" cy="164.8" r="0.53" fill="#3f8ee0" opacity="0.86"/><circle cx="48.8" cy="175.6" r="0.68" fill="#45c9b0" opacity="0.57"/><circle cx="76.8" cy="121.8" r="0.68" fill="#45c9b0" opacity="0.71"/><circle cx="128.7" cy="169.8" r="0.72" fill="#3f8ee0" opacity="0.72"/><circle cx="79.2" cy="172.0" r="0.66" fill="#45c9b0" opacity="0.56"/><circle cx="143.1" cy="146.7" r="0.74" fill="#3f8ee0" opacity="0.82"/><circle cx="85.8" cy="134.1" r="0.88" fill="#45c9b0" opacity="0.85"/><circle cx="80.8" cy="133.9" r="0.65" fill="#45c9b0" opacity="0.42"/><circle cx="135.5" cy="129.9" r="0.70" fill="#3f8ee0" opacity="0.63"/><circle cx="96.9" cy="145.1" r="0.60" fill="#3f8ee0" opacity="0.53"/><circle cx="74.6" cy="139.2" r="0.70" fill="#45c9b0" opacity="0.85"/><circle cx="83.3" cy="151.9" r="0.41" fill="#45c9b0" opacity="0.82"/><circle cx="65.4" cy="151.2" r="0.41" fill="#45c9b0" opacity="0.45"/><circle cx="154.5" cy="148.1" r="0.42" fill="#3f8ee0" opacity="0.56"/><circle cx="59.0" cy="151.3" r="0.51" fill="#45c9b0" opacity="0.72"/><circle cx="114.5" cy="155.0" r="0.45" fill="#3f8ee0" opacity="0.54"/><circle cx="96.6" cy="151.6" r="0.80" fill="#3f8ee0" opacity="0.54"/><circle cx="93.3" cy="120.5" r="0.80" fill="#3f8ee0" opacity="0.41"/><circle cx="48.2" cy="132.8" r="0.72" fill="#45c9b0" opacity="0.70"/><circle cx="48.5" cy="160.6" r="0.67" fill="#45c9b0" opacity="0.58"/><circle cx="63.4" cy="148.4" r="0.49" fill="#45c9b0" opacity="0.74"/><circle cx="115.6" cy="129.1" r="0.41" fill="#3f8ee0" opacity="0.60"/><circle cx="96.5" cy="140.1" r="0.65" fill="#3f8ee0" opacity="0.74"/><circle cx="70.5" cy="145.1" r="0.41" fill="#45c9b0" opacity="0.75"/><circle cx="114.0" cy="165.6" r="0.66" fill="#3f8ee0" opacity="0.76"/><circle cx="152.6" cy="174.2" r="0.77" fill="#3f8ee0" opacity="0.84"/><circle cx="112.9" cy="169.9" r="0.59" fill="#3f8ee0" opacity="0.75"/><circle cx="85.8" cy="133.4" r="0.87" fill="#45c9b0" opacity="0.62"/><circle cx="51.6" cy="152.9" r="0.48" fill="#45c9b0" opacity="0.85"/><circle cx="66.1" cy="175.3" r="0.47" fill="#45c9b0" opacity="0.46"/><circle cx="77.5" cy="142.0" r="0.62" fill="#45c9b0" opacity="0.50"/><circle cx="87.6" cy="123.8" r="0.74" fill="#45c9b0" opacity="0.47"/><circle cx="130.4" cy="153.8" r="0.44" fill="#3f8ee0" opacity="0.76"/><circle cx="112.0" cy="128.1" r="0.81" fill="#3f8ee0" opacity="0.65"/><circle cx="92.5" cy="153.2" r="0.75" fill="#3f8ee0" opacity="0.73"/><circle cx="72.4" cy="134.7" r="0.63" fill="#45c9b0" opacity="0.86"/><circle cx="84.0" cy="153.8" r="0.88" fill="#45c9b0" opacity="0.78"/><circle cx="159.8" cy="121.5" r="0.62" fill="#3f8ee0" opacity="0.48"/><circle cx="62.5" cy="148.8" r="0.59" fill="#45c9b0" opacity="0.79"/><circle cx="95.0" cy="187.8" r="0.51" fill="#3f8ee0" opacity="0.54"/><circle cx="104.8" cy="138.4" r="0.76" fill="#3f8ee0" opacity="0.54"/><circle cx="68.5" cy="157.1" r="0.52" fill="#45c9b0" opacity="0.81"/><circle cx="154.4" cy="135.6" r="0.48" fill="#3f8ee0" opacity="0.41"/><circle cx="52.2" cy="157.0" r="0.67" fill="#45c9b0" opacity="0.88"/><circle cx="137.3" cy="146.2" r="0.53" fill="#3f8ee0" opacity="0.60"/><circle cx="120.7" cy="154.0" r="0.78" fill="#3f8ee0" opacity="0.56"/><circle cx="108.8" cy="165.1" r="0.85" fill="#3f8ee0" opacity="0.72"/><circle cx="117.9" cy="158.2" r="0.51" fill="#3f8ee0" opacity="0.81"/><circle cx="68.6" cy="156.0" r="0.84" fill="#45c9b0" opacity="0.55"/><circle cx="82.9" cy="165.5" r="0.72" fill="#45c9b0" opacity="0.57"/><circle cx="74.8" cy="136.6" r="0.82" fill="#45c9b0" opacity="0.68"/><circle cx="89.7" cy="128.6" r="0.75" fill="#45c9b0" opacity="0.59"/><circle cx="110.9" cy="159.4" r="0.56" fill="#3f8ee0" opacity="0.41"/><circle cx="99.1" cy="129.8" r="0.64" fill="#3f8ee0" opacity="0.75"/><circle cx="108.3" cy="151.2" r="0.76" fill="#3f8ee0" opacity="0.42"/><circle cx="117.7" cy="134.9" r="0.88" fill="#3f8ee0" opacity="0.83"/><circle cx="73.5" cy="155.5" r="0.62" fill="#45c9b0" opacity="0.78"/><circle cx="51.6" cy="153.7" r="0.90" fill="#45c9b0" opacity="0.77"/><circle cx="49.1" cy="145.9" r="0.65" fill="#45c9b0" opacity="0.69"/><circle cx="131.2" cy="146.4" r="0.68" fill="#3f8ee0" opacity="0.45"/><circle cx="97.3" cy="173.9" r="0.53" fill="#3f8ee0" opacity="0.76"/><circle cx="87.5" cy="167.8" r="0.79" fill="#45c9b0" opacity="0.42"/><circle cx="113.3" cy="132.6" r="0.52" fill="#3f8ee0" opacity="0.55"/><circle cx="51.6" cy="139.7" r="0.49" fill="#45c9b0" opacity="0.44"/><circle cx="99.7" cy="169.1" r="0.60" fill="#3f8ee0" opacity="0.78"/><circle cx="91.2" cy="133.8" r="0.69" fill="#3f8ee0" opacity="0.47"/><circle cx="63.8" cy="134.3" r="0.52" fill="#45c9b0" opacity="0.73"/><circle cx="143.2" cy="178.7" r="0.67" fill="#3f8ee0" opacity="0.86"/><circle cx="85.5" cy="138.9" r="0.77" fill="#45c9b0" opacity="0.71"/><circle cx="63.9" cy="163.9" r="0.78" fill="#45c9b0" opacity="0.74"/><circle cx="109.4" cy="186.1" r="0.85" fill="#3f8ee0" opacity="0.62"/><circle cx="84.8" cy="156.1" r="0.52" fill="#45c9b0" opacity="0.64"/><circle cx="107.7" cy="156.7" r="0.77" fill="#3f8ee0" opacity="0.41"/><circle cx="73.1" cy="138.1" r="0.76" fill="#45c9b0" opacity="0.53"/><circle cx="75.8" cy="149.4" r="0.41" fill="#45c9b0" opacity="0.83"/><circle cx="79.3" cy="157.3" r="0.87" fill="#45c9b0" opacity="0.59"/><circle cx="80.1" cy="145.9" r="0.61" fill="#45c9b0" opacity="0.84"/><circle cx="118.3" cy="123.3" r="0.86" fill="#3f8ee0" opacity="0.52"/><circle cx="109.0" cy="150.6" r="0.73" fill="#3f8ee0" opacity="0.67"/><circle cx="64.9" cy="165.3" r="0.51" fill="#45c9b0" opacity="0.70"/><circle cx="81.7" cy="152.1" r="0.79" fill="#45c9b0" opacity="0.49"/><circle cx="109.7" cy="123.9" r="0.62" fill="#3f8ee0" opacity="0.63"/><circle cx="99.3" cy="155.9" r="0.75" fill="#3f8ee0" opacity="0.59"/><circle cx="70.2" cy="142.5" r="0.53" fill="#45c9b0" opacity="0.48"/><circle cx="97.3" cy="132.1" r="0.48" fill="#3f8ee0" opacity="0.84"/><circle cx="106.5" cy="156.9" r="0.48" fill="#3f8ee0" opacity="0.68"/><circle cx="96.2" cy="144.3" r="0.86" fill="#3f8ee0" opacity="0.75"/><circle cx="109.3" cy="134.3" r="0.62" fill="#3f8ee0" opacity="0.45"/><circle cx="90.6" cy="178.3" r="0.54" fill="#3f8ee0" opacity="0.85"/><circle cx="126.6" cy="118.8" r="0.47" fill="#3f8ee0" opacity="0.61"/><circle cx="107.1" cy="136.8" r="0.52" fill="#3f8ee0" opacity="0.41"/><circle cx="60.4" cy="144.0" r="0.51" fill="#45c9b0" opacity="0.53"/><circle cx="83.4" cy="141.2" r="0.79" fill="#45c9b0" opacity="0.84"/><circle cx="82.0" cy="151.8" r="0.69" fill="#45c9b0" opacity="0.55"/><circle cx="129.8" cy="162.5" r="0.68" fill="#3f8ee0" opacity="0.54"/><circle cx="95.8" cy="172.1" r="0.86" fill="#3f8ee0" opacity="0.58"/><circle cx="78.0" cy="142.6" r="0.63" fill="#45c9b0" opacity="0.69"/><circle cx="82.0" cy="167.2" r="0.67" fill="#45c9b0" opacity="0.42"/><circle cx="116.3" cy="158.5" r="0.47" fill="#3f8ee0" opacity="0.67"/><circle cx="62.3" cy="136.4" r="0.84" fill="#45c9b0" opacity="0.70"/><circle cx="96.9" cy="140.6" r="0.84" fill="#3f8ee0" opacity="0.86"/><circle cx="50.9" cy="132.7" r="0.68" fill="#45c9b0" opacity="0.62"/><circle cx="112.1" cy="162.5" r="0.76" fill="#3f8ee0" opacity="0.80"/><circle cx="121.6" cy="136.8" r="0.87" fill="#3f8ee0" opacity="0.59"/><circle cx="124.3" cy="149.9" r="0.67" fill="#3f8ee0" opacity="0.79"/><circle cx="95.7" cy="151.4" r="0.76" fill="#3f8ee0" opacity="0.50"/><circle cx="116.6" cy="132.4" r="0.47" fill="#3f8ee0" opacity="0.66"/><circle cx="97.8" cy="137.4" r="0.88" fill="#3f8ee0" opacity="0.43"/><circle cx="117.4" cy="164.2" r="0.74" fill="#3f8ee0" opacity="0.70"/><circle cx="111.6" cy="143.3" r="0.42" fill="#3f8ee0" opacity="0.67"/><circle cx="78.3" cy="160.1" r="0.60" fill="#45c9b0" opacity="0.84"/><circle cx="85.6" cy="170.5" r="0.68" fill="#45c9b0" opacity="0.54"/><circle cx="113.3" cy="141.9" r="0.55" fill="#3f8ee0" opacity="0.50"/><circle cx="81.9" cy="126.0" r="0.58" fill="#45c9b0" opacity="0.46"/><circle cx="74.0" cy="140.3" r="0.68" fill="#45c9b0" opacity="0.73"/><circle cx="103.6" cy="148.0" r="0.81" fill="#3f8ee0" opacity="0.83"/><circle cx="112.0" cy="153.6" r="0.61" fill="#3f8ee0" opacity="0.82"/><circle cx="69.6" cy="183.0" r="0.45" fill="#45c9b0" opacity="0.85"/><circle cx="130.6" cy="155.1" r="0.89" fill="#3f8ee0" opacity="0.76"/><circle cx="117.3" cy="140.8" r="0.88" fill="#3f8ee0" opacity="0.85"/><circle cx="87.7" cy="173.5" r="0.86" fill="#45c9b0" opacity="0.51"/><circle cx="57.7" cy="164.2" r="0.69" fill="#45c9b0" opacity="0.86"/><circle cx="67.1" cy="154.6" r="0.48" fill="#45c9b0" opacity="0.54"/><circle cx="110.4" cy="139.7" r="0.85" fill="#3f8ee0" opacity="0.80"/><circle cx="73.5" cy="142.6" r="0.40" fill="#45c9b0" opacity="0.46"/><circle cx="128.3" cy="114.6" r="0.88" fill="#3f8ee0" opacity="0.54"/><circle cx="122.8" cy="141.7" r="0.58" fill="#3f8ee0" opacity="0.85"/><circle cx="112.9" cy="127.5" r="0.54" fill="#3f8ee0" opacity="0.45"/><circle cx="104.0" cy="158.7" r="0.50" fill="#3f8ee0" opacity="0.69"/><circle cx="87.3" cy="157.6" r="0.84" fill="#45c9b0" opacity="0.58"/><circle cx="98.8" cy="148.0" r="0.68" fill="#3f8ee0" opacity="0.41"/><circle cx="89.0" cy="146.8" r="0.63" fill="#45c9b0" opacity="0.71"/><circle cx="76.1" cy="145.4" r="0.82" fill="#45c9b0" opacity="0.89"/><circle cx="120.3" cy="116.0" r="0.89" fill="#3f8ee0" opacity="0.58"/><circle cx="67.1" cy="143.8" r="0.79" fill="#45c9b0" opacity="0.48"/><rect x="176" y="45.5" width="108" height="226" rx="12" fill="#22262f" stroke="url(#pg)" stroke-width="2.6"/><rect x="181" y="50" width="98" height="217" rx="9" fill="#242832"/><rect x="281.5" y="62" width="5.5" height="188" fill="#1e222b"/><rect x="187" y="70" width="44" height="1.2" fill="#3a404c"/><rect x="187" y="78" width="50" height="1.2" fill="#3a404c"/><rect x="187" y="86" width="58" height="1.2" fill="#3a404c"/><rect x="187" y="94" width="64" height="1.2" fill="#3a404c"/><rect x="187" y="118" width="42" height="1.2" fill="#3a404c"/><rect x="187" y="126" width="51" height="1.2" fill="#3a404c"/><rect x="187" y="134" width="51" height="1.2" fill="#3a404c"/><rect x="187" y="142" width="30" height="1.2" fill="#3a404c"/><rect x="187" y="170" width="54" height="1.2" fill="#3a404c"/><rect x="187" y="178" width="74" height="1.2" fill="#3a404c"/><rect x="187" y="186" width="36" height="1.2" fill="#3a404c"/><rect x="187" y="210" width="63" height="1.2" fill="#3a404c"/><rect x="187" y="218" width="43" height="1.2" fill="#3a404c"/><rect x="187" y="226" width="68" height="1.2" fill="#3a404c"/><rect x="187" y="244" width="47" height="1.2" fill="#3a404c"/><rect x="187" y="252" width="50" height="1.2" fill="#3a404c"/><rect x="187" y="260" width="64" height="1.2" fill="#3a404c"/><rect x="268.5" y="60.7" width="90.5" height="34" fill="#262a35"/><text x="313.7" y="76" font-family="Liberation Sans" font-weight="700" font-size="9.5" fill="#4f72e8" text-anchor="middle">MOBILE APP</text><text x="313.7" y="87" font-family="Liberation Sans" font-size="6" fill="#3b4c88" text-anchor="middle">template</text><rect x="238.5" y="98.9" width="42.8" height="44" fill="#2450e6"/><circle cx="260" cy="112" r="4.2" fill="#50e0a8"/><text x="260" y="130" font-family="Liberation Sans" font-weight="700" font-size="5.2" fill="#55e0b0" text-anchor="middle">Headline Hz</text><rect x="284.9" y="98.9" width="43" height="44" fill="#262a35"/><circle cx="306" cy="112" r="3.8" fill="#3f6fe8"/><text x="306" y="130" font-family="Liberation Sans" font-weight="700" font-size="5" fill="#3f6fe8" text-anchor="middle">Headline Hz</text><rect x="250.8" y="147" width="90" height="59.5" fill="#262a35"/><circle cx="296.3" cy="173.8" r="8.5" fill="#4f7ef0"/><path d="M293.5 169.5 L300.5 173.8 L293.5 178 Z" fill="#262a35"/><text x="295" y="194" font-family="Liberation Sans" font-weight="700" font-size="10" fill="#4f7ef0" text-anchor="middle">Video</text><rect x="257" y="199.5" width="72" height="1" fill="#4f7ef0"/><rect x="275.3" y="211.4" width="90" height="40.7" fill="#262a35"/><text x="282" y="225" font-family="Liberation Sans" font-weight="700" font-size="5" fill="#3f6fe8">Headline Hz</text><path d="M46 132 V155 Q46 171 61.5 171 Q77 171 77 155 V132" fill="none" stroke="url(#ug)" stroke-width="2.2"/><path d="M84 132 L115 171 M115 132 L84 171" fill="none" stroke="#3a78ea" stroke-width="2.2"/><text x="44.5" y="189.8" font-family="Liberation Sans" font-weight="700" font-size="11.2" fill="#3e4a68" stroke="#3e4a68" stroke-width="0.5">USER</text><text x="44.5" y="205.2" font-family="Liberation Sans" font-weight="700" font-size="11.2" fill="#3e4a68" stroke="#3e4a68" stroke-width="0.5">EXPERIENCE</text><text x="44.5" y="220" font-family="Liberation Sans" font-size="11" fill="#3b4763">design</text><rect x="18.2" y="18.2" width="48" height="48" rx="7" fill="#7b7b7b"/><g fill="none" stroke="#fff" stroke-width="1.8" stroke-linejoin="round" stroke-linecap="round"><path d="M51.60 37.60 L50.12 39.72 L50.34 42.30 L48.00 43.40 L46.90 45.74 L44.32 45.52 L42.20 47.00 L40.08 45.52 L37.50 45.74 L36.40 43.40 L34.06 42.30 L34.28 39.72 L32.80 37.60 L34.28 35.48 L34.06 32.90 L36.40 31.80 L37.50 29.46 L40.08 29.68 L42.20 28.20 L44.32 29.68 L46.90 29.46 L48.00 31.80 L50.34 32.90 L50.12 35.48 Z"/><circle cx="42.2" cy="37.6" r="4.2"/><path d="M37.5 46 L34.5 52 L37.5 51.5 L39 54 L41 48.5 M47 46 L50 52 L47 51.5 L45.5 54 L43.5 48.5"/></g></svg>
</div>
<div class="a" style="left:2265px;top:741px;width:565px;height:79px;border-radius:8px;background:#d69a4e"></div>
<svg style="left:0;top:0" width="2992" height="1000"><path d="M2433 767.4 L2454.3 781 L2433 794.6 Z" fill="none" stroke="#fff" stroke-width="2.6" stroke-linejoin="round"/></svg>
<svg style="left:2421px;top:913.5px" width="36" height="43" viewBox="0 0 48 58" preserveAspectRatio="none"><path d="M25 1.5 C14 1.5 8 8 7 17 C6 24 3 28 2.5 35 C2 42 3 48 4.5 51 C8 55 15 57.5 23.5 57.5 C32 57.5 39 55.5 43 51 C45.5 47 47 40 46.7 34 C46.5 27 44 22 43 16 C41 7 35 1.5 25 1.5 Z" fill="#2a2321"/><ellipse cx="25.4" cy="31" rx="14.2" ry="16.6" fill="#e6bea3"/><path d="M10.5 26 C10.5 12 18 8.5 26 9 C34 9.5 40.5 14 40.8 25 C38.5 19.5 34 16.8 27 16.6 C20 16.4 14 19 10.5 26 Z" fill="#2a2321"/><ellipse cx="18.7" cy="26.2" rx="3.1" ry="2.5" fill="#f2f2f2" stroke="#9a9a9a" stroke-width="0.6"/><ellipse cx="32" cy="26.2" rx="3.1" ry="2.5" fill="#f2f2f2" stroke="#9a9a9a" stroke-width="0.6"/><circle cx="19" cy="26.3" r="1.4" fill="#2e2e2e"/><circle cx="31.7" cy="26.3" r="1.4" fill="#2e2e2e"/><path d="M18.4 35.8 Q24.6 34.2 30.8 35.8 Q29.8 41.8 24.6 41.8 Q19.4 41.8 18.4 35.8 Z" fill="#c46d6a"/><path d="M18.6 35.9 Q24.6 34.4 30.6 35.9 L30.2 38 Q24.6 36.8 19 38 Z" fill="#5d5a5a"/><circle cx="11.2" cy="35" r="1" fill="#e8e8e8"/><circle cx="40" cy="35.5" r="1" fill="#e8e8e8"/></svg>
<div class="a" style="left:2265px;top:981px;width:565px;height:2px;background:#dfe2ea"></div>
<div class="a" style="left:2273px;top:1035px;width:4px;height:160px;background:#e6e7eb"></div>
<div class="a" style="left:2265px;top:1025px;width:20px;height:20px;border-radius:50%;background:#d69a4e"></div>
<div class="a" style="left:2265px;top:1105px;width:20px;height:20px;border-radius:50%;background:#d69a4e"></div>
<div class="a" style="left:2265px;top:1185px;width:20px;height:20px;border-radius:50%;background:#d69a4e"></div>
<div class="a" style="left:2265px;top:1247px;width:565px;height:2px;background:#dfe2ea"></div>
<!-- bottom card -->
<div class="a" style="left:243px;top:1594px;width:626px;height:100px;border:2px solid #e3e4e9;border-radius:14px;background:#fff"></div>
<!-- header right icons -->
<svg style="left:0;top:0" width="2992" height="96"><g fill="none" stroke="#ffffff" stroke-width="2.4" stroke-linejoin="round" stroke-linecap="round"><path d="M2570.5 52.5 Q2566 44 2572 36.5 Q2580 28 2592 30 Q2594 41 2585.5 49 Q2578.5 55.5 2570.5 52.5 Z"/><circle cx="2581.6" cy="39.1" r="3.3"/><path d="M2569.7 39 H2560.5 Q2558.6 39 2557.8 40.6 L2554 49 H2567"/><path d="M2571.6 54 V66.5 L2580.5 62.5 Q2582 61.8 2582 60.3 V51.2"/><path d="M2553.8 67 Q2553.5 58 2558 55 Q2562 53 2565.5 56 Q2568 59.5 2565 62.5 Q2561 66.5 2553.8 67 Z"/><path d="M2656.21 36.85 L2657.49 31.86 L2664.31 31.86 L2665.59 36.85 L2668.12 38.32 L2673.09 36.93 L2676.50 42.83 L2672.81 46.44 L2672.81 49.36 L2676.50 52.97 L2673.09 58.87 L2668.12 57.48 L2665.59 58.95 L2664.31 63.94 L2657.49 63.94 L2656.21 58.95 L2653.68 57.48 L2648.71 58.87 L2645.30 52.97 L2648.99 49.36 L2648.99 46.44 L2645.30 42.83 L2648.71 36.93 L2653.68 38.32 Z"/><circle cx="2660.9" cy="47.9" r="4.7"/><circle cx="2748.7" cy="47.9" r="18.8"/><path d="M2742.5 43.5 Q2742.5 38.4 2748.7 38.4 Q2754.8 38.4 2754.8 43.2 Q2754.8 46.5 2750.5 48.6 Q2747.6 50 2747.6 53"/></g><circle cx="2747.6" cy="57.2" r="1.6" fill="#ffffff"/><circle cx="2596.1" cy="27.8" r="8" fill="#e7625c"/><rect x="2809" y="27" width="2" height="40" fill="#ecc58f"/><circle cx="2875" cy="47" r="32" fill="#5a9be6"/><path d="M2928.5 44.5 L2936 52 L2943.5 44.5" fill="none" stroke="#fff" stroke-width="2.2" stroke-linecap="round" stroke-linejoin="round"/></svg>
<!-- sidebar icons -->
<svg style="left:0;top:0" width="200" height="1619"><g fill="none" stroke="#a4aab6" stroke-width="2" stroke-linecap="round" stroke-linejoin="round"><path d="M85.5 145.5 L100 132.5 L114.5 145.5"/><path d="M88.8 142.5 V155.5 Q88.8 158 91.3 158 H108.7 Q111.2 158 111.2 155.5 V142.5"/><path d="M96.5 158 V147.8 H103.5 V158"/><circle cx="100" cy="271.5" r="7.6"/><path d="M85.8 295.8 Q85.8 284.2 100 284.2 Q114.2 284.2 114.2 295.8 Z"/><path d="M84.3 418.3 L88.6 403.4 Q89.2 401.3 91.3 401.3 H108.9 Q111 401.3 111.6 403.4 L115.8 418.3 V426.3 Q115.8 428.8 113.3 428.8 H86.8 Q84.3 428.8 84.3 426.3 Z"/><path d="M84.3 418.3 H92.5 L95.2 422.4 H105.3 L107.7 418.3 H115.8"/><circle cx="89.9" cy="540.8" r="3.2"/><circle cx="110.1" cy="540.8" r="3.2"/><circle cx="100" cy="547.9" r="4.3"/><path d="M84 551.8 Q84 547.4 88.5 547.4 H92.5"/><path d="M116 551.8 Q116 547.4 111.5 547.4 H107.5"/><path d="M91 562 Q91 555.8 100 555.8 Q109 555.8 109 562 Z"/><circle cx="100" cy="685" r="15.6"/><path d="M104.2 678.8 Q103 676.3 100 676.3 Q95.8 676.3 95.8 680.2 Q95.8 683.6 100 684.5 Q104.4 685.4 104.4 689.2 Q104.4 693 100 693 Q96.5 693 95.3 690.3 M100 673.5 V676.3 M100 693 V696"/><path d="M85.7 832.4 V815 Q85.7 812.9 87.8 812.9 H92.9 V809.7 Q92.9 807.6 95 807.6 H105.2 Q107.3 807.6 107.3 809.7 V815.9 H111.9 Q114 815.9 114 818 V830.3 Q114 832.4 111.9 832.4 Z"/><rect x="95.6" y="810.4" width="9" height="4" rx="1.5"/><rect x="95.6" y="816.9" width="9" height="4.3" rx="1.5"/><rect x="88.6" y="815.5" width="4.2" height="4.2" rx="1.2"/><rect x="88.6" y="822.2" width="4.2" height="4.2" rx="1.2"/><rect x="107" y="818.6" width="4.3" height="4.2" rx="1.2"/><rect x="107" y="825.3" width="4.3" height="4.2" rx="1.2"/><path d="M97.4 832.4 V828.2 Q97.4 825.5 100 825.5 Q102.6 825.5 102.6 828.2 V832.4"/><rect x="86.2" y="947.2" width="27.8" height="20.6" rx="2.5"/><path d="M93.5 947.2 V944.3 Q93.5 942.3 95.5 942.3 H104.7 Q106.7 942.3 106.7 944.3 V947.2"/><path d="M91.6 947.2 V967.8 M108.4 947.2 V967.8"/><path d="M83.9 1099.3 L94.4 1087.8 L101.8 1096 L115.3 1081.5"/><path d="M105 1080.9 H115.8 V1092.4"/><path d="M91.9 1213.1 Q88.7 1213.6 88.7 1217 V1237.2 Q88.7 1240.7 92.2 1240.7 H108.1 Q111.6 1240.7 111.6 1237.2 V1217 Q111.6 1213.6 108.3 1213.1"/><path d="M94.4 1215.9 H105.5"/><circle cx="99.9" cy="1212.2" r="2.6"/><path d="M98.2 1224.9 H108 M98.2 1231.3 H108"/></g><circle cx="93.6" cy="1224.9" r="1.6" fill="#a4aab6"/><circle cx="93.6" cy="1231.3" r="1.6" fill="#a4aab6"/><g fill="none" stroke="#a4aab6" stroke-width="2" stroke-linecap="round" stroke-linejoin="round"><circle cx="100.1" cy="1370.9" r="13.3"/><path d="M100 1363.2 V1372.2 L104.5 1375.5"/><path d="M84.9 1361.3 Q83.8 1354.6 89.5 1353.6 Q92 1353.4 93.2 1354.8"/><path d="M115.3 1361.3 Q116.4 1354.6 110.7 1353.6 Q108.2 1353.4 107 1354.8"/><path d="M90.3 1380.5 L86.2 1384.8 M109.9 1380.5 L114 1384.8"/><rect x="84.3" y="1490" width="31.6" height="22" rx="3"/><path d="M96.6 1512 L95.8 1517.8 M103.9 1512 L104.7 1517.8 M91.3 1517.8 H108.9"/></g><path d="M103.2 1497.6 Q102.3 1495.9 100.3 1495.9 Q97.4 1495.9 97.4 1498.5 Q97.4 1500.6 100.3 1501.1 Q103.4 1501.7 103.4 1504.1 Q103.4 1506.5 100.3 1506.5 Q97.9 1506.5 97.1 1504.8 M100.3 1494.2 V1495.9 M100.3 1506.5 V1508.2" fill="none" stroke="#a4aab6" stroke-width="1.8" stroke-linecap="round"/></svg>
<div class="a" style="left:124px;top:373.5px;width:40px;height:31px;border-radius:15.5px;background:#e7625c"></div>
<svg style="left:0;top:0" width="200" height="96"><path d="M28.2 34 H29.6 Q33.6 34 33.6 38 V50.8 L41.8 44.6 Q42.4 44.2 43.2 44.2 H48.8 L39.9 54.3 L49.2 69 H41.6 L35 59 L33.6 60.2 V65 Q33.6 69 29.6 69 H28.2 Q24.2 69 24.2 65 V38 Q24.2 34 28.2 34 Z" fill="#fff" stroke="#fff" stroke-width="0.8" stroke-linejoin="round"/><path d="M28.2 34 H29.6 Q33.6 34 33.6 38 V50.8 L41.8 44.6 Q42.4 44.2 43.2 44.2 H48.8 L39.9 54.3 L49.2 69 H41.6 L35 59 L33.6 60.2 V65 Q33.6 69 29.6 69 H28.2 Q24.2 69 24.2 65 V38 Q24.2 34 28.2 34 Z" transform="translate(57.6 0)" fill="#fff" stroke="#fff" stroke-width="0.8" stroke-linejoin="round"/><path d="M64.2 43.6 C71.8 43.6 77.1 48.8 77.1 56 V57.6 H59.8 C60.3 60.8 62 62.3 64.8 62.3 C66.7 62.3 68.2 61.6 69.2 60.2 L76 63.6 C73.6 67.4 69.6 69.4 64.6 69.4 C56.8 69.4 51.3 64.3 51.3 56.5 C51.3 48.7 56.7 43.6 64.2 43.6 Z M59.8 53.2 H69 C68.6 51 66.8 49.9 64.4 49.9 C62 49.9 60.3 51 59.8 53.2 Z" fill="#fff" fill-rule="evenodd"/><path d="M109.6 52.4 C110.6 46.6 115.2 43.6 121.6 43.6 C129.6 43.6 133.9 47.6 133.9 54 V69 H125.4 V67.4 C123.6 68.8 121.2 69.4 118.4 69.4 C112.6 69.4 108.8 66.2 108.8 61.4 C108.8 56.4 113 53.8 119 53.8 H125.2 C125 51.8 123.6 50.9 121.6 50.9 C119.6 50.9 118.2 51.6 117.6 53.2 Z M118.3 61.1 C118.3 59.4 120 58.9 125.2 58.9 V61.6 C124 62.8 122.2 63.3 120.6 63.3 C119.1 63.3 118.3 62.4 118.3 61.1 Z" fill="#fff" fill-rule="evenodd"/><g fill="#fff"><path d="M127.96 34.91 L132.12 23.97 L128.28 22.83 L125.84 34.29 Z"/><circle cx="126.9" cy="34.6" r="1.1"/><circle cx="130.2" cy="23.4" r="2.0"/><path d="M135.18 37.09 L143.68 26.92 L139.92 24.28 L133.22 35.71 Z"/><circle cx="134.2" cy="36.4" r="1.2"/><circle cx="141.8" cy="25.6" r="2.3"/><path d="M142.03 42.40 L155.40 32.82 L152.20 28.98 L140.37 40.40 Z"/><circle cx="141.2" cy="41.4" r="1.3"/><circle cx="153.8" cy="30.9" r="2.5"/><path d="M145.60 49.84 L158.94 46.68 L157.46 42.12 L144.80 47.36 Z"/><circle cx="145.2" cy="48.6" r="1.3"/><circle cx="158.2" cy="44.4" r="2.4"/></g></svg>
<div class="t" style="left:234.71px;top:34.51px;font-size:26.81px;font-weight:400;color:#ffffff;transform:scaleX(1.0301);transform-origin:0 0;-webkit-text-stroke:0.6px #fff;">Keka Hire</div>
<div class="t" style="left:528.98px;top:35.81px;font-size:24.93px;font-weight:400;color:#8a93a4;transform:scaleX(1.0245);transform-origin:0 0;">Search employees or actions (Ex: Apply Leave, Attendance Approvals)</div>
<div class="t" style="left:231.69px;top:121.33px;font-size:24.49px;font-weight:400;color:#6e6e6e;transform:scaleX(1.0053);transform-origin:0 0;-webkit-text-stroke:0.7px #6e6e6e;">DASHBOARD</div>
<div class="t" style="left:450.01px;top:121.33px;font-size:24.49px;font-weight:400;color:#6e6e6e;transform:scaleX(0.9939);transform-origin:0 0;-webkit-text-stroke:0.7px #6e6e6e;">MANAGE COURSES</div>
<div class="t" style="left:746.02px;top:121.33px;font-size:24.49px;font-weight:400;color:#6e6e6e;transform:scaleX(0.9767);transform-origin:0 0;-webkit-text-stroke:0.7px #6e6e6e;">COURSE LIBRARY</div>
<div class="t" style="left:1020.62px;top:121.33px;font-size:24.49px;font-weight:400;color:#1e1e1e;transform:scaleX(0.9901);transform-origin:0 0;-webkit-text-stroke:0.7px #1e1e1e;">MY COURSES</div>
<div class="t" style="left:1246.07px;top:121.33px;font-size:24.49px;font-weight:400;color:#6e6e6e;transform:scaleX(0.9652);transform-origin:0 0;-webkit-text-stroke:0.7px #6e6e6e;">REPORTS</div>
<div class="t" style="left:287.83px;top:227.87px;font-size:25.8px;font-weight:400;color:#d4984c;transform:scaleX(0.9855);transform-origin:0 0;">Back</div>
<div class="t" style="left:303.56px;top:365.48px;font-size:44.49px;font-weight:400;color:#1e1e1e;transform:scaleX(1.0798);transform-origin:0 0;-webkit-text-stroke:2.0px #1e1e1e;">Fundamentals of ux design and usability for SaaS products - Beginner to Advanced ...</div>
<div class="t" style="left:303.97px;top:449.47px;font-size:27.68px;font-weight:400;color:#1e1e1e;transform:scaleX(1.0270);transform-origin:0 0;">0.0</div>
<div class="t" style="left:560.96px;top:449.93px;font-size:26.67px;font-weight:400;color:#1e1e1e;transform:scaleX(1.0205);transform-origin:0 0;">(No reviews)</div>
<div class="t" style="left:405.95px;top:565.85px;font-size:25.94px;font-weight:400;color:#747474;transform:scaleX(0.9733);transform-origin:0 0;">Progress</div>
<div class="t" style="left:1360.74px;top:615.00px;font-size:25.65px;font-weight:400;color:#747474;transform:scaleX(0.9815);transform-origin:0 0;">1/9 mandatory</div>
<div class="t" style="left:1361.98px;top:655.20px;font-size:25.65px;font-weight:400;color:#747474;transform:scaleX(1.0216);transform-origin:0 0;">completed</div>
<div class="t" style="left:1860.10px;top:582.80px;font-size:26.23px;font-weight:400;color:#1e1e1e;transform:scaleX(0.9830);transform-origin:0 0;">Active time spent</div>
<div class="t" style="left:1860.08px;top:628.00px;font-size:31.88px;font-weight:700;color:#1e1e1e;transform:scaleX(1.0246);transform-origin:0 0;">20m</div>
<div class="t" style="left:344.03px;top:788.76px;font-size:26.52px;font-weight:400;color:#707070;transform:scaleX(0.9702);transform-origin:0 0;">Contents</div>
<div class="t" style="left:542.69px;top:788.76px;font-size:26.52px;font-weight:400;color:#1e1e1e;transform:scaleX(0.9034);transform-origin:0 0;">Discussions (1)</div>
<div class="t" style="left:405.99px;top:942.13px;font-size:26.67px;font-weight:400;color:#a9a9a9;transform:scaleX(1.0126);transform-origin:0 0;">Start a new discussion...</div>
<div class="t" style="left:2857.57px;top:32.36px;font-size:31.96px;font-weight:400;color:#ffffff;transform:scaleX(0.9314);transform-origin:0 0;-webkit-text-stroke:0.45px #fff;">JS</div>
<div class="t" style="left:347.40px;top:943.39px;font-size:24.57px;font-weight:400;color:#ffffff;transform:scaleX(0.9962);transform-origin:0 0;-webkit-text-stroke:0.35px #fff;">JS</div>
<div class="t" style="left:419.33px;top:1045.56px;font-size:25.22px;font-weight:400;color:#1e1e1e;transform:scaleX(0.9862);transform-origin:0 0;">Priyank Jha</div>
<div class="t" style="left:420.25px;top:1081.98px;font-size:24.49px;font-weight:400;color:#767676;transform:scaleX(1.0476);transform-origin:0 0;">2 months ago</div>
<div class="t" style="left:336.70px;top:1155.59px;font-size:33.19px;font-weight:400;color:#1e1e1e;transform:scaleX(1.0958);transform-origin:0 0;-webkit-text-stroke:1.4px #1e1e1e;">io</div>
<div class="t" style="left:335.73px;top:1214.12px;font-size:25.51px;font-weight:400;color:#1e1e1e;transform:scaleX(1.0339);transform-origin:0 0;">lololol</div>
<div class="t" style="left:383.92px;top:1302.44px;font-size:25.36px;font-weight:400;color:#d4984c;transform:scaleX(0.9886);transform-origin:0 0;">Like</div>
<div class="t" style="left:518.70px;top:1302.44px;font-size:25.36px;font-weight:400;color:#d4984c;transform:scaleX(1.0046);transform-origin:0 0;">Comment</div>
<div class="t" style="left:1994.97px;top:1302.61px;font-size:24.93px;font-weight:400;color:#6e6e6e;transform:scaleX(1.0345);transform-origin:0 0;">0 Comments</div>
<div class="t" style="left:2485.50px;top:769.05px;font-size:25.94px;font-weight:400;color:#ffffff;transform:scaleX(1.0483);transform-origin:0 0;-webkit-text-stroke:0.6px #fff;">Resume course</div>
<div class="t" style="left:2264.89px;top:852.42px;font-size:25.51px;font-weight:400;color:#1e1e1e;transform:scaleX(1.0039);transform-origin:0 0;">Last updated on</div>
<div class="t" style="left:2457.26px;top:853.46px;font-size:24.64px;font-weight:400;color:#1e1e1e;transform:scaleX(1.0410);transform-origin:0 0;-webkit-text-stroke:0.6px #1e1e1e;">19 Nov 2024</div>
<div class="t" style="left:2265.20px;top:917.20px;font-size:25.65px;font-weight:400;color:#1e1e1e;transform:scaleX(1.0145);transform-origin:0 0;">Authored by</div>
<div class="t" style="left:2470.83px;top:917.20px;font-size:25.65px;font-weight:400;color:#1e1e1e;transform:scaleX(0.9833);transform-origin:0 0;">Priyank Jha</div>
<div class="t" style="left:2619.78px;top:917.20px;font-size:25.65px;font-weight:400;color:#1e1e1e;transform:scaleX(1.0231);transform-origin:0 0;">on</div>
<div class="t" style="left:2664.26px;top:918.24px;font-size:24.78px;font-weight:400;color:#1e1e1e;transform:scaleX(1.0399);transform-origin:0 0;-webkit-text-stroke:0.6px #1e1e1e;">31 Aug 2024</div>
<div class="t" style="left:2324.44px;top:1022.49px;font-size:25.07px;font-weight:400;color:#1e1e1e;transform:scaleX(1.0317);transform-origin:0 0;">Enrolled on</div>
<div class="t" style="left:2463.40px;top:1023.53px;font-size:24.2px;font-weight:400;color:#1e1e1e;transform:scaleX(1.1035);transform-origin:0 0;-webkit-text-stroke:0.6px #1e1e1e;">20 Sept 2024</div>
<div class="t" style="left:2324.45px;top:1102.46px;font-size:25.22px;font-weight:400;color:#1e1e1e;transform:scaleX(1.0269);transform-origin:0 0;">Due on</div>
<div class="t" style="left:2416.89px;top:1103.50px;font-size:24.35px;font-weight:400;color:#1e1e1e;transform:scaleX(1.1069);transform-origin:0 0;-webkit-text-stroke:0.6px #1e1e1e;">05 Oct 2024</div>
<div class="t" style="left:2325.51px;top:1182.10px;font-size:25.65px;font-weight:400;color:#1e1e1e;transform:scaleX(0.9888);transform-origin:0 0;">Started on</div>
<div class="t" style="left:2451.62px;top:1183.14px;font-size:24.78px;font-weight:400;color:#1e1e1e;transform:scaleX(1.0799);transform-origin:0 0;-webkit-text-stroke:0.6px #1e1e1e;">05 Dec 2024</div>
<div class="t" style="left:2264.81px;top:1281.70px;font-size:23.77px;font-weight:400;color:#1e1e1e;transform:scaleX(1.0868);transform-origin:0 0;-webkit-text-stroke:0.6px #1e1e1e;">Categories</div>
<div class="t" style="left:2264.91px;top:1344.36px;font-size:25.22px;font-weight:400;color:#727272;transform:scaleX(0.9899);transform-origin:0 0;">design, SaaS, Usability</div>
<div class="t" style="left:240.12px;top:1527.85px;font-size:30.0px;font-weight:400;color:#1e1e1e;transform:scaleX(0.9825);transform-origin:0 0;-webkit-text-stroke:0.3px #1e1e1e;">Courses you may like</div>
<div class="t" style="left:63.95px;top:180.32px;font-size:24.71px;font-weight:400;color:#a4aab6;transform:scaleX(1.0762);transform-origin:0 0;-webkit-text-stroke:0.65px #a4aab6;">Home</div>
<div class="t" style="left:80.47px;top:315.22px;font-size:24.71px;font-weight:400;color:#a4aab6;transform:scaleX(1.1161);transform-origin:0 0;-webkit-text-stroke:0.65px #a4aab6;">Me</div>
<div class="t" style="left:66.65px;top:450.32px;font-size:24.71px;font-weight:400;color:#a4aab6;transform:scaleX(1.0759);transform-origin:0 0;-webkit-text-stroke:0.65px #a4aab6;">Inbox</div>
<div class="t" style="left:47.40px;top:585.12px;font-size:24.71px;font-weight:400;color:#a4aab6;transform:scaleX(1.0521);transform-origin:0 0;-webkit-text-stroke:0.65px #a4aab6;">My Team</div>
<div class="t" style="left:27.13px;top:720.42px;font-size:24.71px;font-weight:400;color:#a4aab6;transform:scaleX(1.0336);transform-origin:0 0;-webkit-text-stroke:0.65px #a4aab6;">My Finances</div>
<div class="t" style="left:77.92px;top:855.52px;font-size:24.71px;font-weight:400;color:#a4aab6;transform:scaleX(1.0769);transform-origin:0 0;-webkit-text-stroke:0.65px #a4aab6;">Org</div>
<div class="t" style="left:74.59px;top:990.62px;font-size:24.71px;font-weight:400;color:#a4aab6;transform:scaleX(1.1048);transform-origin:0 0;-webkit-text-stroke:0.65px #a4aab6;">Hire</div>
<div class="t" style="left:25.40px;top:1125.12px;font-size:24.71px;font-weight:400;color:#a4aab6;transform:scaleX(1.0507);transform-origin:0 0;-webkit-text-stroke:0.65px #a4aab6;">Performance</div>
<div class="t" style="left:58.29px;top:1269.42px;font-size:24.71px;font-weight:400;color:#a4aab6;transform:scaleX(1.0560);transform-origin:0 0;-webkit-text-stroke:0.65px #a4aab6;">Project</div>
<div class="t" style="left:29.41px;top:1404.42px;font-size:24.71px;font-weight:400;color:#a4aab6;transform:scaleX(1.0859);transform-origin:0 0;-webkit-text-stroke:0.65px #a4aab6;">Time Attend</div>
<div class="t" style="left:60.31px;top:1539.52px;font-size:24.71px;font-weight:400;color:#a4aab6;transform:scaleX(1.0444);transform-origin:0 0;-webkit-text-stroke:0.65px #a4aab6;">Payroll</div>
<div class="t" style="left:137.00px;top:376.71px;font-size:24.93px;font-weight:400;color:#ffffff;transform:scaleX(1.0000);transform-origin:0 0;-webkit-text-stroke:0.8px #fff;">6</div>
<!-- scrollbar -->
<div class="a" style="left:2972px;top:-6px;width:20px;height:1205px;border-radius:10px;background:#a2a9b4;border:2px solid #fff"></div>
<div class="a" style="left:0;top:0;width:2992px;height:28px;background:linear-gradient(rgba(0,0,0,0.21) 0px,rgba(0,0,0,0.1) 8px,rgba(0,0,0,0.03) 18px,rgba(0,0,0,0) 28px)"></div>
</body></html>
